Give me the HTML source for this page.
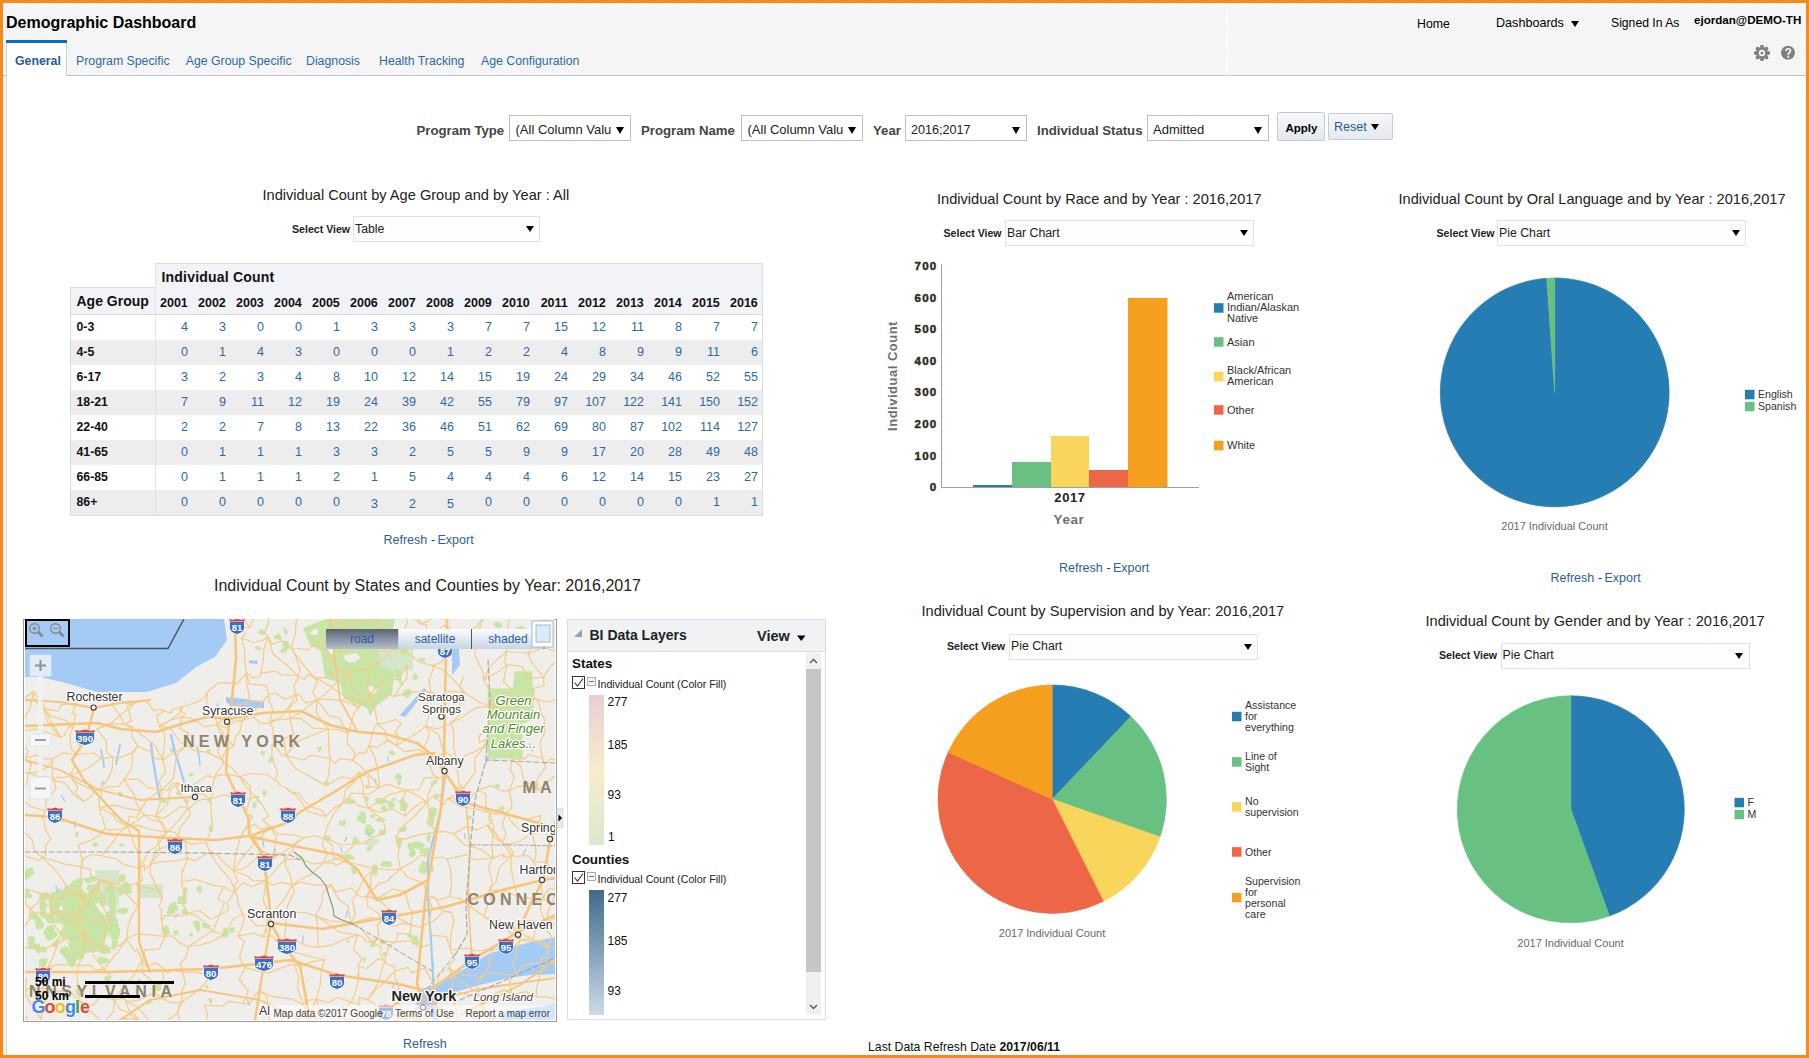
<!DOCTYPE html><html><head><meta charset="utf-8"><title>Demographic Dashboard</title><style>
html,body{margin:0;padding:0;}
body{width:1809px;height:1058px;position:relative;overflow:hidden;background:#fff;font-family:"Liberation Sans", sans-serif;}
.t{position:absolute;white-space:nowrap;line-height:normal;}
</style></head><body>
<svg style="position:absolute;left:0;top:0" width="1809" height="1058" shape-rendering="crispEdges"><defs><pattern id="stripe" patternUnits="userSpaceOnUse" width="3" height="3"><rect width="3" height="3" fill="#fafafa"/><rect x="0" y="0" width="1" height="1" fill="#ececec"/><rect x="1" y="1" width="1" height="1" fill="#ececec"/><rect x="2" y="2" width="1" height="1" fill="#ececec"/></pattern></defs><rect x="3" y="3" width="1803" height="72" fill="url(#stripe)"/><rect x="3" y="76" width="3" height="979" fill="url(#stripe)"/></svg>
<div style="position:absolute;left:3px;top:75px;width:1803px;height:1px;background:#b9c4cf;"></div>
<div style="position:absolute;left:1226px;top:3px;width:1px;height:73px;background:#ffffff;"></div>
<div class="t" style="left:6px;top:14px;font-size:16px;font-weight:bold;color:#000;">Demographic Dashboard</div>
<div style="position:absolute;left:6px;top:40px;width:61px;height:36px;background:#fff;box-sizing:border-box;border-left:1px solid #c9d3dc;border-right:1px solid #c9d3dc;"></div>
<div style="position:absolute;left:6px;top:40px;width:61px;height:3px;background:#0b6bcb;"></div>
<div class="t" style="left:15px;top:54px;font-size:12.3px;font-weight:bold;color:#1f5c99;">General</div>
<div class="t" style="left:76px;top:54px;font-size:12.3px;font-weight:normal;color:#2a6aa8;">Program Specific</div>
<div class="t" style="left:185.7px;top:54px;font-size:12.3px;font-weight:normal;color:#2a6aa8;">Age Group Specific</div>
<div class="t" style="left:306px;top:54px;font-size:12.3px;font-weight:normal;color:#2a6aa8;">Diagnosis</div>
<div class="t" style="left:379px;top:54px;font-size:12.3px;font-weight:normal;color:#2a6aa8;">Health Tracking</div>
<div class="t" style="left:481px;top:54px;font-size:12.3px;font-weight:normal;color:#2a6aa8;">Age Configuration</div>
<div class="t" style="left:1417px;top:17px;font-size:12.3px;font-weight:normal;color:#000;">Home</div>
<div class="t" style="left:1496px;top:16px;font-size:12.6px;font-weight:normal;color:#000;">Dashboards</div>
<div style="position:absolute;left:1571px;top:21px;width:0;height:0;border-left:4.5px solid transparent;border-right:4.5px solid transparent;border-top:6px solid #000"></div>
<div class="t" style="left:1611px;top:16px;font-size:12.2px;font-weight:normal;color:#000;">Signed In As</div>
<div class="t" style="left:1694px;top:13px;font-size:11.6px;font-weight:bold;color:#000;">ejordan@DEMO-TH</div>
<svg style="position:absolute;left:0;top:0" width="1809" height="80"><circle cx="1762" cy="53" r="6" fill="#7d8185"/><circle cx="1762.00" cy="46.70" r="1.9" fill="#7d8185"/><circle cx="1766.45" cy="48.55" r="1.9" fill="#7d8185"/><circle cx="1768.30" cy="53.00" r="1.9" fill="#7d8185"/><circle cx="1766.45" cy="57.45" r="1.9" fill="#7d8185"/><circle cx="1762.00" cy="59.30" r="1.9" fill="#7d8185"/><circle cx="1757.55" cy="57.45" r="1.9" fill="#7d8185"/><circle cx="1755.70" cy="53.00" r="1.9" fill="#7d8185"/><circle cx="1757.55" cy="48.55" r="1.9" fill="#7d8185"/><circle cx="1762" cy="53" r="3.2" fill="#fafafa"/><circle cx="1762" cy="53" r="1.5" fill="#7d8185"/><circle cx="1788" cy="52.8" r="7" fill="#7d8185"/><path d="M1786.1,51 Q1786.1,48.7 1788.3,48.7 Q1790.5,48.7 1790.5,50.7 Q1790.5,52.1 1789,52.9 Q1788.3,53.4 1788.3,55.2" fill="none" stroke="#fafafa" stroke-width="1.6" stroke-linecap="butt"/><rect x="1787.4" y="56.2" width="1.8" height="1.8" fill="#fafafa"/></svg>
<div class="t" style="left:416.5px;top:123px;font-size:13.2px;font-weight:bold;color:#454545;">Program Type</div>
<div style="position:absolute;left:509px;top:115px;width:122px;height:26px;box-sizing:border-box;border:1px solid #bdbdbd;background:#fff;"></div>
<div class="t" style="left:515.5px;top:122px;font-size:13px;color:#222;width:100px;overflow:hidden">(All Column Valu</div>
<div style="position:absolute;left:616px;top:126.5px;width:0;height:0;border-left:4.75px solid transparent;border-right:4.75px solid transparent;border-top:7px solid #000"></div>
<div class="t" style="left:641px;top:123px;font-size:13.2px;font-weight:bold;color:#454545;">Program Name</div>
<div style="position:absolute;left:741px;top:115px;width:122px;height:26px;box-sizing:border-box;border:1px solid #bdbdbd;background:#fff;"></div>
<div class="t" style="left:747.5px;top:122px;font-size:13px;color:#222;width:100px;overflow:hidden">(All Column Valu</div>
<div style="position:absolute;left:848px;top:126.5px;width:0;height:0;border-left:4.75px solid transparent;border-right:4.75px solid transparent;border-top:7px solid #000"></div>
<div class="t" style="left:873px;top:123px;font-size:13.2px;font-weight:bold;color:#454545;">Year</div>
<div style="position:absolute;left:905px;top:115px;width:122px;height:26px;box-sizing:border-box;border:1px solid #bdbdbd;background:#fff;"></div>
<div class="t" style="left:911px;top:123px;font-size:12.6px;color:#222;width:100px;overflow:hidden">2016;2017</div>
<div style="position:absolute;left:1012px;top:126.5px;width:0;height:0;border-left:4.75px solid transparent;border-right:4.75px solid transparent;border-top:7px solid #000"></div>
<div class="t" style="left:1037px;top:123px;font-size:13.2px;font-weight:bold;color:#454545;">Individual Status</div>
<div style="position:absolute;left:1147px;top:115px;width:122px;height:26px;box-sizing:border-box;border:1px solid #bdbdbd;background:#fff;"></div>
<div class="t" style="left:1153px;top:122px;font-size:13px;color:#222;width:100px;overflow:hidden">Admitted</div>
<div style="position:absolute;left:1254px;top:126.5px;width:0;height:0;border-left:4.75px solid transparent;border-right:4.75px solid transparent;border-top:7px solid #000"></div>
<div style="position:absolute;left:1277px;top:112px;width:48px;height:29px;box-sizing:border-box;border:1px solid #c3cbd3;border-radius:2px;background:linear-gradient(#f7f8fa,#e4e8ec);"></div>
<div class="t" style="left:1285.5px;top:122px;font-size:11.5px;font-weight:bold;color:#000;">Apply</div>
<div style="position:absolute;left:1328px;top:113px;width:65px;height:27px;box-sizing:border-box;border:1px solid #c3cbd3;border-radius:2px;background:linear-gradient(#f5f7f9,#e6eaee);"></div>
<div class="t" style="left:1334px;top:120px;font-size:12.5px;font-weight:normal;color:#1f5c99;">Reset</div>
<div style="position:absolute;left:1371px;top:124px;width:0;height:0;border-left:4.5px solid transparent;border-right:4.5px solid transparent;border-top:6px solid #000"></div>
<div class="t" style="left:262.5px;top:187px;font-size:14.6px;font-weight:normal;color:#222;">Individual Count by Age Group and by Year : All</div>
<div class="t" style="left:292px;top:223px;font-size:10.6px;font-weight:bold;color:#222;">Select View</div>
<div style="position:absolute;left:353px;top:216px;width:187px;height:26px;box-sizing:border-box;border:1px solid #dfe3e8;background:#fdfdfd;"></div>
<div class="t" style="left:355px;top:222px;font-size:12.3px;font-weight:normal;color:#222;">Table</div>
<div style="position:absolute;left:526px;top:226px;width:0;height:0;border-left:4.5px solid transparent;border-right:4.5px solid transparent;border-top:6px solid #000"></div>
<div style="position:absolute;left:155px;top:263px;width:608px;height:52px;box-sizing:border-box;background:#f1f3f6;border-top:1px solid #d5dde4;border-left:1px solid #d5dde4;border-right:1px solid #d5dde4;"></div>
<div style="position:absolute;left:70px;top:287px;width:86px;height:28px;box-sizing:border-box;background:#f1f3f6;border-top:1px solid #d5dde4;border-left:1px solid #d5dde4;"></div>
<div style="position:absolute;left:70px;top:314px;width:693px;height:1px;background:#d5dde4;"></div>
<div class="t" style="left:161.5px;top:269px;font-size:14px;font-weight:bold;color:#111;letter-spacing:0.2px;">Individual Count</div>
<div class="t" style="left:76.5px;top:293px;font-size:14px;font-weight:bold;color:#111;">Age Group</div>
<div class="t" style="left:187.8px;transform:translateX(-100%);top:296px;font-size:12.5px;font-weight:bold;color:#111;">2001</div>
<div class="t" style="left:225.8px;transform:translateX(-100%);top:296px;font-size:12.5px;font-weight:bold;color:#111;">2002</div>
<div class="t" style="left:263.8px;transform:translateX(-100%);top:296px;font-size:12.5px;font-weight:bold;color:#111;">2003</div>
<div class="t" style="left:301.8px;transform:translateX(-100%);top:296px;font-size:12.5px;font-weight:bold;color:#111;">2004</div>
<div class="t" style="left:339.8px;transform:translateX(-100%);top:296px;font-size:12.5px;font-weight:bold;color:#111;">2005</div>
<div class="t" style="left:377.8px;transform:translateX(-100%);top:296px;font-size:12.5px;font-weight:bold;color:#111;">2006</div>
<div class="t" style="left:415.8px;transform:translateX(-100%);top:296px;font-size:12.5px;font-weight:bold;color:#111;">2007</div>
<div class="t" style="left:453.8px;transform:translateX(-100%);top:296px;font-size:12.5px;font-weight:bold;color:#111;">2008</div>
<div class="t" style="left:491.8px;transform:translateX(-100%);top:296px;font-size:12.5px;font-weight:bold;color:#111;">2009</div>
<div class="t" style="left:529.8px;transform:translateX(-100%);top:296px;font-size:12.5px;font-weight:bold;color:#111;">2010</div>
<div class="t" style="left:567.8px;transform:translateX(-100%);top:296px;font-size:12.5px;font-weight:bold;color:#111;">2011</div>
<div class="t" style="left:605.8px;transform:translateX(-100%);top:296px;font-size:12.5px;font-weight:bold;color:#111;">2012</div>
<div class="t" style="left:643.8px;transform:translateX(-100%);top:296px;font-size:12.5px;font-weight:bold;color:#111;">2013</div>
<div class="t" style="left:681.8px;transform:translateX(-100%);top:296px;font-size:12.5px;font-weight:bold;color:#111;">2014</div>
<div class="t" style="left:719.8px;transform:translateX(-100%);top:296px;font-size:12.5px;font-weight:bold;color:#111;">2015</div>
<div class="t" style="left:757.8px;transform:translateX(-100%);top:296px;font-size:12.5px;font-weight:bold;color:#111;">2016</div>
<div style="position:absolute;left:71px;top:315px;width:691px;height:25px;background:#ffffff;"></div>
<div class="t" style="left:76.5px;top:320px;font-size:12.3px;font-weight:bold;color:#111;">0-3</div>
<div class="t" style="left:188px;transform:translateX(-100%);top:320px;font-size:12.5px;font-weight:normal;color:#2e6aa6;">4</div>
<div class="t" style="left:226px;transform:translateX(-100%);top:320px;font-size:12.5px;font-weight:normal;color:#2e6aa6;">3</div>
<div class="t" style="left:264px;transform:translateX(-100%);top:320px;font-size:12.5px;font-weight:normal;color:#2e6aa6;">0</div>
<div class="t" style="left:302px;transform:translateX(-100%);top:320px;font-size:12.5px;font-weight:normal;color:#2e6aa6;">0</div>
<div class="t" style="left:340px;transform:translateX(-100%);top:320px;font-size:12.5px;font-weight:normal;color:#2e6aa6;">1</div>
<div class="t" style="left:378px;transform:translateX(-100%);top:320px;font-size:12.5px;font-weight:normal;color:#2e6aa6;">3</div>
<div class="t" style="left:416px;transform:translateX(-100%);top:320px;font-size:12.5px;font-weight:normal;color:#2e6aa6;">3</div>
<div class="t" style="left:454px;transform:translateX(-100%);top:320px;font-size:12.5px;font-weight:normal;color:#2e6aa6;">3</div>
<div class="t" style="left:492px;transform:translateX(-100%);top:320px;font-size:12.5px;font-weight:normal;color:#2e6aa6;">7</div>
<div class="t" style="left:530px;transform:translateX(-100%);top:320px;font-size:12.5px;font-weight:normal;color:#2e6aa6;">7</div>
<div class="t" style="left:568px;transform:translateX(-100%);top:320px;font-size:12.5px;font-weight:normal;color:#2e6aa6;">15</div>
<div class="t" style="left:606px;transform:translateX(-100%);top:320px;font-size:12.5px;font-weight:normal;color:#2e6aa6;">12</div>
<div class="t" style="left:644px;transform:translateX(-100%);top:320px;font-size:12.5px;font-weight:normal;color:#2e6aa6;">11</div>
<div class="t" style="left:682px;transform:translateX(-100%);top:320px;font-size:12.5px;font-weight:normal;color:#2e6aa6;">8</div>
<div class="t" style="left:720px;transform:translateX(-100%);top:320px;font-size:12.5px;font-weight:normal;color:#2e6aa6;">7</div>
<div class="t" style="left:758px;transform:translateX(-100%);top:320px;font-size:12.5px;font-weight:normal;color:#2e6aa6;">7</div>
<div style="position:absolute;left:71px;top:340px;width:691px;height:25px;background:#ededed;"></div>
<div class="t" style="left:76.5px;top:345px;font-size:12.3px;font-weight:bold;color:#111;">4-5</div>
<div class="t" style="left:188px;transform:translateX(-100%);top:345px;font-size:12.5px;font-weight:normal;color:#2e6aa6;">0</div>
<div class="t" style="left:226px;transform:translateX(-100%);top:345px;font-size:12.5px;font-weight:normal;color:#2e6aa6;">1</div>
<div class="t" style="left:264px;transform:translateX(-100%);top:345px;font-size:12.5px;font-weight:normal;color:#2e6aa6;">4</div>
<div class="t" style="left:302px;transform:translateX(-100%);top:345px;font-size:12.5px;font-weight:normal;color:#2e6aa6;">3</div>
<div class="t" style="left:340px;transform:translateX(-100%);top:345px;font-size:12.5px;font-weight:normal;color:#2e6aa6;">0</div>
<div class="t" style="left:378px;transform:translateX(-100%);top:345px;font-size:12.5px;font-weight:normal;color:#2e6aa6;">0</div>
<div class="t" style="left:416px;transform:translateX(-100%);top:345px;font-size:12.5px;font-weight:normal;color:#2e6aa6;">0</div>
<div class="t" style="left:454px;transform:translateX(-100%);top:345px;font-size:12.5px;font-weight:normal;color:#2e6aa6;">1</div>
<div class="t" style="left:492px;transform:translateX(-100%);top:345px;font-size:12.5px;font-weight:normal;color:#2e6aa6;">2</div>
<div class="t" style="left:530px;transform:translateX(-100%);top:345px;font-size:12.5px;font-weight:normal;color:#2e6aa6;">2</div>
<div class="t" style="left:568px;transform:translateX(-100%);top:345px;font-size:12.5px;font-weight:normal;color:#2e6aa6;">4</div>
<div class="t" style="left:606px;transform:translateX(-100%);top:345px;font-size:12.5px;font-weight:normal;color:#2e6aa6;">8</div>
<div class="t" style="left:644px;transform:translateX(-100%);top:345px;font-size:12.5px;font-weight:normal;color:#2e6aa6;">9</div>
<div class="t" style="left:682px;transform:translateX(-100%);top:345px;font-size:12.5px;font-weight:normal;color:#2e6aa6;">9</div>
<div class="t" style="left:720px;transform:translateX(-100%);top:345px;font-size:12.5px;font-weight:normal;color:#2e6aa6;">11</div>
<div class="t" style="left:758px;transform:translateX(-100%);top:345px;font-size:12.5px;font-weight:normal;color:#2e6aa6;">6</div>
<div style="position:absolute;left:71px;top:365px;width:691px;height:25px;background:#ffffff;"></div>
<div class="t" style="left:76.5px;top:370px;font-size:12.3px;font-weight:bold;color:#111;">6-17</div>
<div class="t" style="left:188px;transform:translateX(-100%);top:370px;font-size:12.5px;font-weight:normal;color:#2e6aa6;">3</div>
<div class="t" style="left:226px;transform:translateX(-100%);top:370px;font-size:12.5px;font-weight:normal;color:#2e6aa6;">2</div>
<div class="t" style="left:264px;transform:translateX(-100%);top:370px;font-size:12.5px;font-weight:normal;color:#2e6aa6;">3</div>
<div class="t" style="left:302px;transform:translateX(-100%);top:370px;font-size:12.5px;font-weight:normal;color:#2e6aa6;">4</div>
<div class="t" style="left:340px;transform:translateX(-100%);top:370px;font-size:12.5px;font-weight:normal;color:#2e6aa6;">8</div>
<div class="t" style="left:378px;transform:translateX(-100%);top:370px;font-size:12.5px;font-weight:normal;color:#2e6aa6;">10</div>
<div class="t" style="left:416px;transform:translateX(-100%);top:370px;font-size:12.5px;font-weight:normal;color:#2e6aa6;">12</div>
<div class="t" style="left:454px;transform:translateX(-100%);top:370px;font-size:12.5px;font-weight:normal;color:#2e6aa6;">14</div>
<div class="t" style="left:492px;transform:translateX(-100%);top:370px;font-size:12.5px;font-weight:normal;color:#2e6aa6;">15</div>
<div class="t" style="left:530px;transform:translateX(-100%);top:370px;font-size:12.5px;font-weight:normal;color:#2e6aa6;">19</div>
<div class="t" style="left:568px;transform:translateX(-100%);top:370px;font-size:12.5px;font-weight:normal;color:#2e6aa6;">24</div>
<div class="t" style="left:606px;transform:translateX(-100%);top:370px;font-size:12.5px;font-weight:normal;color:#2e6aa6;">29</div>
<div class="t" style="left:644px;transform:translateX(-100%);top:370px;font-size:12.5px;font-weight:normal;color:#2e6aa6;">34</div>
<div class="t" style="left:682px;transform:translateX(-100%);top:370px;font-size:12.5px;font-weight:normal;color:#2e6aa6;">46</div>
<div class="t" style="left:720px;transform:translateX(-100%);top:370px;font-size:12.5px;font-weight:normal;color:#2e6aa6;">52</div>
<div class="t" style="left:758px;transform:translateX(-100%);top:370px;font-size:12.5px;font-weight:normal;color:#2e6aa6;">55</div>
<div style="position:absolute;left:71px;top:390px;width:691px;height:25px;background:#ededed;"></div>
<div class="t" style="left:76.5px;top:395px;font-size:12.3px;font-weight:bold;color:#111;">18-21</div>
<div class="t" style="left:188px;transform:translateX(-100%);top:395px;font-size:12.5px;font-weight:normal;color:#2e6aa6;">7</div>
<div class="t" style="left:226px;transform:translateX(-100%);top:395px;font-size:12.5px;font-weight:normal;color:#2e6aa6;">9</div>
<div class="t" style="left:264px;transform:translateX(-100%);top:395px;font-size:12.5px;font-weight:normal;color:#2e6aa6;">11</div>
<div class="t" style="left:302px;transform:translateX(-100%);top:395px;font-size:12.5px;font-weight:normal;color:#2e6aa6;">12</div>
<div class="t" style="left:340px;transform:translateX(-100%);top:395px;font-size:12.5px;font-weight:normal;color:#2e6aa6;">19</div>
<div class="t" style="left:378px;transform:translateX(-100%);top:395px;font-size:12.5px;font-weight:normal;color:#2e6aa6;">24</div>
<div class="t" style="left:416px;transform:translateX(-100%);top:395px;font-size:12.5px;font-weight:normal;color:#2e6aa6;">39</div>
<div class="t" style="left:454px;transform:translateX(-100%);top:395px;font-size:12.5px;font-weight:normal;color:#2e6aa6;">42</div>
<div class="t" style="left:492px;transform:translateX(-100%);top:395px;font-size:12.5px;font-weight:normal;color:#2e6aa6;">55</div>
<div class="t" style="left:530px;transform:translateX(-100%);top:395px;font-size:12.5px;font-weight:normal;color:#2e6aa6;">79</div>
<div class="t" style="left:568px;transform:translateX(-100%);top:395px;font-size:12.5px;font-weight:normal;color:#2e6aa6;">97</div>
<div class="t" style="left:606px;transform:translateX(-100%);top:395px;font-size:12.5px;font-weight:normal;color:#2e6aa6;">107</div>
<div class="t" style="left:644px;transform:translateX(-100%);top:395px;font-size:12.5px;font-weight:normal;color:#2e6aa6;">122</div>
<div class="t" style="left:682px;transform:translateX(-100%);top:395px;font-size:12.5px;font-weight:normal;color:#2e6aa6;">141</div>
<div class="t" style="left:720px;transform:translateX(-100%);top:395px;font-size:12.5px;font-weight:normal;color:#2e6aa6;">150</div>
<div class="t" style="left:758px;transform:translateX(-100%);top:395px;font-size:12.5px;font-weight:normal;color:#2e6aa6;">152</div>
<div style="position:absolute;left:71px;top:415px;width:691px;height:25px;background:#ffffff;"></div>
<div class="t" style="left:76.5px;top:420px;font-size:12.3px;font-weight:bold;color:#111;">22-40</div>
<div class="t" style="left:188px;transform:translateX(-100%);top:420px;font-size:12.5px;font-weight:normal;color:#2e6aa6;">2</div>
<div class="t" style="left:226px;transform:translateX(-100%);top:420px;font-size:12.5px;font-weight:normal;color:#2e6aa6;">2</div>
<div class="t" style="left:264px;transform:translateX(-100%);top:420px;font-size:12.5px;font-weight:normal;color:#2e6aa6;">7</div>
<div class="t" style="left:302px;transform:translateX(-100%);top:420px;font-size:12.5px;font-weight:normal;color:#2e6aa6;">8</div>
<div class="t" style="left:340px;transform:translateX(-100%);top:420px;font-size:12.5px;font-weight:normal;color:#2e6aa6;">13</div>
<div class="t" style="left:378px;transform:translateX(-100%);top:420px;font-size:12.5px;font-weight:normal;color:#2e6aa6;">22</div>
<div class="t" style="left:416px;transform:translateX(-100%);top:420px;font-size:12.5px;font-weight:normal;color:#2e6aa6;">36</div>
<div class="t" style="left:454px;transform:translateX(-100%);top:420px;font-size:12.5px;font-weight:normal;color:#2e6aa6;">46</div>
<div class="t" style="left:492px;transform:translateX(-100%);top:420px;font-size:12.5px;font-weight:normal;color:#2e6aa6;">51</div>
<div class="t" style="left:530px;transform:translateX(-100%);top:420px;font-size:12.5px;font-weight:normal;color:#2e6aa6;">62</div>
<div class="t" style="left:568px;transform:translateX(-100%);top:420px;font-size:12.5px;font-weight:normal;color:#2e6aa6;">69</div>
<div class="t" style="left:606px;transform:translateX(-100%);top:420px;font-size:12.5px;font-weight:normal;color:#2e6aa6;">80</div>
<div class="t" style="left:644px;transform:translateX(-100%);top:420px;font-size:12.5px;font-weight:normal;color:#2e6aa6;">87</div>
<div class="t" style="left:682px;transform:translateX(-100%);top:420px;font-size:12.5px;font-weight:normal;color:#2e6aa6;">102</div>
<div class="t" style="left:720px;transform:translateX(-100%);top:420px;font-size:12.5px;font-weight:normal;color:#2e6aa6;">114</div>
<div class="t" style="left:758px;transform:translateX(-100%);top:420px;font-size:12.5px;font-weight:normal;color:#2e6aa6;">127</div>
<div style="position:absolute;left:71px;top:440px;width:691px;height:25px;background:#ededed;"></div>
<div class="t" style="left:76.5px;top:445px;font-size:12.3px;font-weight:bold;color:#111;">41-65</div>
<div class="t" style="left:188px;transform:translateX(-100%);top:445px;font-size:12.5px;font-weight:normal;color:#2e6aa6;">0</div>
<div class="t" style="left:226px;transform:translateX(-100%);top:445px;font-size:12.5px;font-weight:normal;color:#2e6aa6;">1</div>
<div class="t" style="left:264px;transform:translateX(-100%);top:445px;font-size:12.5px;font-weight:normal;color:#2e6aa6;">1</div>
<div class="t" style="left:302px;transform:translateX(-100%);top:445px;font-size:12.5px;font-weight:normal;color:#2e6aa6;">1</div>
<div class="t" style="left:340px;transform:translateX(-100%);top:445px;font-size:12.5px;font-weight:normal;color:#2e6aa6;">3</div>
<div class="t" style="left:378px;transform:translateX(-100%);top:445px;font-size:12.5px;font-weight:normal;color:#2e6aa6;">3</div>
<div class="t" style="left:416px;transform:translateX(-100%);top:445px;font-size:12.5px;font-weight:normal;color:#2e6aa6;">2</div>
<div class="t" style="left:454px;transform:translateX(-100%);top:445px;font-size:12.5px;font-weight:normal;color:#2e6aa6;">5</div>
<div class="t" style="left:492px;transform:translateX(-100%);top:445px;font-size:12.5px;font-weight:normal;color:#2e6aa6;">5</div>
<div class="t" style="left:530px;transform:translateX(-100%);top:445px;font-size:12.5px;font-weight:normal;color:#2e6aa6;">9</div>
<div class="t" style="left:568px;transform:translateX(-100%);top:445px;font-size:12.5px;font-weight:normal;color:#2e6aa6;">9</div>
<div class="t" style="left:606px;transform:translateX(-100%);top:445px;font-size:12.5px;font-weight:normal;color:#2e6aa6;">17</div>
<div class="t" style="left:644px;transform:translateX(-100%);top:445px;font-size:12.5px;font-weight:normal;color:#2e6aa6;">20</div>
<div class="t" style="left:682px;transform:translateX(-100%);top:445px;font-size:12.5px;font-weight:normal;color:#2e6aa6;">28</div>
<div class="t" style="left:720px;transform:translateX(-100%);top:445px;font-size:12.5px;font-weight:normal;color:#2e6aa6;">49</div>
<div class="t" style="left:758px;transform:translateX(-100%);top:445px;font-size:12.5px;font-weight:normal;color:#2e6aa6;">48</div>
<div style="position:absolute;left:71px;top:465px;width:691px;height:25px;background:#ffffff;"></div>
<div class="t" style="left:76.5px;top:470px;font-size:12.3px;font-weight:bold;color:#111;">66-85</div>
<div class="t" style="left:188px;transform:translateX(-100%);top:470px;font-size:12.5px;font-weight:normal;color:#2e6aa6;">0</div>
<div class="t" style="left:226px;transform:translateX(-100%);top:470px;font-size:12.5px;font-weight:normal;color:#2e6aa6;">1</div>
<div class="t" style="left:264px;transform:translateX(-100%);top:470px;font-size:12.5px;font-weight:normal;color:#2e6aa6;">1</div>
<div class="t" style="left:302px;transform:translateX(-100%);top:470px;font-size:12.5px;font-weight:normal;color:#2e6aa6;">1</div>
<div class="t" style="left:340px;transform:translateX(-100%);top:470px;font-size:12.5px;font-weight:normal;color:#2e6aa6;">2</div>
<div class="t" style="left:378px;transform:translateX(-100%);top:470px;font-size:12.5px;font-weight:normal;color:#2e6aa6;">1</div>
<div class="t" style="left:416px;transform:translateX(-100%);top:470px;font-size:12.5px;font-weight:normal;color:#2e6aa6;">5</div>
<div class="t" style="left:454px;transform:translateX(-100%);top:470px;font-size:12.5px;font-weight:normal;color:#2e6aa6;">4</div>
<div class="t" style="left:492px;transform:translateX(-100%);top:470px;font-size:12.5px;font-weight:normal;color:#2e6aa6;">4</div>
<div class="t" style="left:530px;transform:translateX(-100%);top:470px;font-size:12.5px;font-weight:normal;color:#2e6aa6;">4</div>
<div class="t" style="left:568px;transform:translateX(-100%);top:470px;font-size:12.5px;font-weight:normal;color:#2e6aa6;">6</div>
<div class="t" style="left:606px;transform:translateX(-100%);top:470px;font-size:12.5px;font-weight:normal;color:#2e6aa6;">12</div>
<div class="t" style="left:644px;transform:translateX(-100%);top:470px;font-size:12.5px;font-weight:normal;color:#2e6aa6;">14</div>
<div class="t" style="left:682px;transform:translateX(-100%);top:470px;font-size:12.5px;font-weight:normal;color:#2e6aa6;">15</div>
<div class="t" style="left:720px;transform:translateX(-100%);top:470px;font-size:12.5px;font-weight:normal;color:#2e6aa6;">23</div>
<div class="t" style="left:758px;transform:translateX(-100%);top:470px;font-size:12.5px;font-weight:normal;color:#2e6aa6;">27</div>
<div style="position:absolute;left:71px;top:490px;width:691px;height:25px;background:#ededed;"></div>
<div class="t" style="left:76.5px;top:495px;font-size:12.3px;font-weight:bold;color:#111;">86+</div>
<div class="t" style="left:188px;transform:translateX(-100%);top:495px;font-size:12.5px;font-weight:normal;color:#2e6aa6;">0</div>
<div class="t" style="left:226px;transform:translateX(-100%);top:495px;font-size:12.5px;font-weight:normal;color:#2e6aa6;">0</div>
<div class="t" style="left:264px;transform:translateX(-100%);top:495px;font-size:12.5px;font-weight:normal;color:#2e6aa6;">0</div>
<div class="t" style="left:302px;transform:translateX(-100%);top:495px;font-size:12.5px;font-weight:normal;color:#2e6aa6;">0</div>
<div class="t" style="left:340px;transform:translateX(-100%);top:495px;font-size:12.5px;font-weight:normal;color:#2e6aa6;">0</div>
<div class="t" style="left:378px;transform:translateX(-100%);top:497px;font-size:12.5px;font-weight:normal;color:#2e6aa6;">3</div>
<div class="t" style="left:416px;transform:translateX(-100%);top:497px;font-size:12.5px;font-weight:normal;color:#2e6aa6;">2</div>
<div class="t" style="left:454px;transform:translateX(-100%);top:497px;font-size:12.5px;font-weight:normal;color:#2e6aa6;">5</div>
<div class="t" style="left:492px;transform:translateX(-100%);top:495px;font-size:12.5px;font-weight:normal;color:#2e6aa6;">0</div>
<div class="t" style="left:530px;transform:translateX(-100%);top:495px;font-size:12.5px;font-weight:normal;color:#2e6aa6;">0</div>
<div class="t" style="left:568px;transform:translateX(-100%);top:495px;font-size:12.5px;font-weight:normal;color:#2e6aa6;">0</div>
<div class="t" style="left:606px;transform:translateX(-100%);top:495px;font-size:12.5px;font-weight:normal;color:#2e6aa6;">0</div>
<div class="t" style="left:644px;transform:translateX(-100%);top:495px;font-size:12.5px;font-weight:normal;color:#2e6aa6;">0</div>
<div class="t" style="left:682px;transform:translateX(-100%);top:495px;font-size:12.5px;font-weight:normal;color:#2e6aa6;">0</div>
<div class="t" style="left:720px;transform:translateX(-100%);top:495px;font-size:12.5px;font-weight:normal;color:#2e6aa6;">1</div>
<div class="t" style="left:758px;transform:translateX(-100%);top:495px;font-size:12.5px;font-weight:normal;color:#2e6aa6;">1</div>
<div style="position:absolute;left:70px;top:287px;width:1px;height:228px;background:#d5dde4;"></div>
<div style="position:absolute;left:155px;top:263px;width:1px;height:252px;background:#dde3e9;"></div>
<div style="position:absolute;left:762px;top:263px;width:1px;height:252px;background:#d5dde4;"></div>
<div style="position:absolute;left:70px;top:515px;width:693px;height:1px;background:#d5dde4;"></div>
<div class="t" style="left:383.5px;top:533px;font-size:12.5px;font-weight:normal;color:#2e5f96;">Refresh</div>
<div class="t" style="left:431px;top:533px;font-size:12.5px;font-weight:normal;color:#333;">-</div>
<div class="t" style="left:437.5px;top:533px;font-size:12.5px;font-weight:normal;color:#2e5f96;">Export</div>
<div style="position:absolute;left:6px;top:76px;width:1px;height:979px;background:#d3dbe4;"></div>
<div class="t" style="left:937px;top:191px;font-size:14.6px;font-weight:normal;color:#222;">Individual Count by Race and by Year : 2016,2017</div>
<div class="t" style="left:943.5px;top:227px;font-size:10.6px;font-weight:bold;color:#222;">Select View</div>
<div style="position:absolute;left:1005px;top:220px;width:249px;height:26px;box-sizing:border-box;border:1px solid #dfe3e8;background:#fdfdfd;"></div>
<div class="t" style="left:1007px;top:226px;font-size:12.3px;font-weight:normal;color:#222;">Bar Chart</div>
<div style="position:absolute;left:1240px;top:230px;width:0;height:0;border-left:4.5px solid transparent;border-right:4.5px solid transparent;border-top:6px solid #000"></div>
<svg style="position:absolute;left:0;top:0" width="1809" height="1058"><text x="937.5" y="270.0" text-anchor="end" font-family="Liberation Sans" font-weight="bold" font-size="11.6" letter-spacing="1.2" stroke="#2a2a2a" stroke-width="0.45" fill="#2a2a2a">700</text><text x="937.5" y="301.6" text-anchor="end" font-family="Liberation Sans" font-weight="bold" font-size="11.6" letter-spacing="1.2" stroke="#2a2a2a" stroke-width="0.45" fill="#2a2a2a">600</text><text x="937.5" y="333.2" text-anchor="end" font-family="Liberation Sans" font-weight="bold" font-size="11.6" letter-spacing="1.2" stroke="#2a2a2a" stroke-width="0.45" fill="#2a2a2a">500</text><text x="937.5" y="364.8" text-anchor="end" font-family="Liberation Sans" font-weight="bold" font-size="11.6" letter-spacing="1.2" stroke="#2a2a2a" stroke-width="0.45" fill="#2a2a2a">400</text><text x="937.5" y="396.4" text-anchor="end" font-family="Liberation Sans" font-weight="bold" font-size="11.6" letter-spacing="1.2" stroke="#2a2a2a" stroke-width="0.45" fill="#2a2a2a">300</text><text x="937.5" y="428.0" text-anchor="end" font-family="Liberation Sans" font-weight="bold" font-size="11.6" letter-spacing="1.2" stroke="#2a2a2a" stroke-width="0.45" fill="#2a2a2a">200</text><text x="937.5" y="459.6" text-anchor="end" font-family="Liberation Sans" font-weight="bold" font-size="11.6" letter-spacing="1.2" stroke="#2a2a2a" stroke-width="0.45" fill="#2a2a2a">100</text><text x="937.5" y="491.2" text-anchor="end" font-family="Liberation Sans" font-weight="bold" font-size="11.6" letter-spacing="1.2" stroke="#2a2a2a" stroke-width="0.45" fill="#2a2a2a">0</text><line x1="941.5" y1="264" x2="941.5" y2="487.5" stroke="#a0a0a0" stroke-width="1"/><line x1="941" y1="487.5" x2="1199" y2="487.5" stroke="#a0a0a0" stroke-width="1"/><rect x="973" y="485" width="39" height="2" fill="#267db3"/><rect x="1012" y="462" width="39" height="25" fill="#68c182"/><rect x="1051" y="436" width="38" height="51" fill="#fad55c"/><rect x="1089" y="470" width="39" height="17" fill="#ed6647"/><rect x="1128" y="298" width="39.5" height="189" fill="#f69f1e"/><text x="1070" y="502" text-anchor="middle" font-family="Liberation Sans" font-weight="bold" font-size="13" letter-spacing="0.6" fill="#222">2017</text><text x="1069" y="524" text-anchor="middle" font-family="Liberation Sans" font-weight="bold" font-size="13.5" letter-spacing="0.6" fill="#707070">Year</text><text transform="translate(897,376) rotate(-90)" text-anchor="middle" font-family="Liberation Sans" font-weight="bold" font-size="13" letter-spacing="0.5" fill="#707070">Individual Count</text><rect x="1214" y="303.2" width="9.5" height="9.5" fill="#267db3"/><text x="1227.0" y="299.8" font-family="Liberation Sans" font-size="11" fill="#333">American</text><text x="1227.0" y="310.8" font-family="Liberation Sans" font-size="11" fill="#333">Indian/Alaskan</text><text x="1227.0" y="321.8" font-family="Liberation Sans" font-size="11" fill="#333">Native</text><rect x="1214" y="337.2" width="9.5" height="9.5" fill="#68c182"/><text x="1227.0" y="345.8" font-family="Liberation Sans" font-size="11" fill="#333">Asian</text><rect x="1214" y="371.8" width="9.5" height="9.5" fill="#fad55c"/><text x="1227.0" y="374.3" font-family="Liberation Sans" font-size="11" fill="#333">Black/African</text><text x="1227.0" y="385.3" font-family="Liberation Sans" font-size="11" fill="#333">American</text><rect x="1214" y="405.2" width="9.5" height="9.5" fill="#ed6647"/><text x="1227.0" y="413.8" font-family="Liberation Sans" font-size="11" fill="#333">Other</text><rect x="1214" y="440.8" width="9.5" height="9.5" fill="#f69f1e"/><text x="1227.0" y="449.3" font-family="Liberation Sans" font-size="11" fill="#333">White</text></svg>
<div class="t" style="left:1059px;top:561px;font-size:12.5px;font-weight:normal;color:#2e5f96;">Refresh</div>
<div class="t" style="left:1106.5px;top:561px;font-size:12.5px;font-weight:normal;color:#333;">-</div>
<div class="t" style="left:1113px;top:561px;font-size:12.5px;font-weight:normal;color:#2e5f96;">Export</div>
<div class="t" style="left:1398.5px;top:191px;font-size:14.6px;font-weight:normal;color:#222;">Individual Count by Oral Language and by Year : 2016,2017</div>
<div class="t" style="left:1436.5px;top:227px;font-size:10.6px;font-weight:bold;color:#222;">Select View</div>
<div style="position:absolute;left:1497px;top:220px;width:249px;height:26px;box-sizing:border-box;border:1px solid #dfe3e8;background:#fdfdfd;"></div>
<div class="t" style="left:1499px;top:226px;font-size:12.3px;font-weight:normal;color:#222;">Pie Chart</div>
<div style="position:absolute;left:1732px;top:230px;width:0;height:0;border-left:4.5px solid transparent;border-right:4.5px solid transparent;border-top:6px solid #000"></div>
<svg style="position:absolute;left:0;top:0" width="1809" height="1058"><path d="M1554.7,392.4 L1554.70,278.00 A114.4,114.4 0 1 1 1546.72,278.28 Z" fill="#267db3" stroke="#267db3" stroke-width="0.7" stroke-linejoin="round"/><path d="M1554.7,392.4 L1546.72,278.28 A114.4,114.4 0 0 1 1554.70,278.00 Z" fill="#68c182" stroke="#68c182" stroke-width="0.7" stroke-linejoin="round"/><text x="1554.5" y="529.5" text-anchor="middle" font-family="Liberation Sans" font-size="11" fill="#666a70">2017 Individual Count</text><rect x="1745" y="389.8" width="9.5" height="9.5" fill="#267db3"/><text x="1758.0" y="398.3" font-family="Liberation Sans" font-size="10.6" fill="#333">English</text><rect x="1745" y="401.8" width="9.5" height="9.5" fill="#68c182"/><text x="1758.0" y="410.3" font-family="Liberation Sans" font-size="10.6" fill="#333">Spanish</text></svg>
<div class="t" style="left:1550.5px;top:571px;font-size:12.5px;font-weight:normal;color:#2e5f96;">Refresh</div>
<div class="t" style="left:1598.0px;top:571px;font-size:12.5px;font-weight:normal;color:#333;">-</div>
<div class="t" style="left:1604.5px;top:571px;font-size:12.5px;font-weight:normal;color:#2e5f96;">Export</div>
<div class="t" style="left:921.5px;top:603px;font-size:14.6px;font-weight:normal;color:#222;">Individual Count by Supervision and by Year: 2016,2017</div>
<div class="t" style="left:947px;top:639.5px;font-size:10.6px;font-weight:bold;color:#222;">Select View</div>
<div style="position:absolute;left:1009px;top:633.5px;width:249px;height:26px;box-sizing:border-box;border:1px solid #dfe3e8;background:#fdfdfd;"></div>
<div class="t" style="left:1011px;top:638.5px;font-size:12.3px;font-weight:normal;color:#222;">Pie Chart</div>
<div style="position:absolute;left:1244px;top:643.5px;width:0;height:0;border-left:4.5px solid transparent;border-right:4.5px solid transparent;border-top:6px solid #000"></div>
<svg style="position:absolute;left:0;top:0" width="1809" height="1058"><path d="M1052.2,799.2 L1052.20,685.00 A114.2,114.2 0 0 1 1130.95,716.50 Z" fill="#267db3" stroke="#267db3" stroke-width="0.7" stroke-linejoin="round"/><path d="M1052.2,799.2 L1130.95,716.50 A114.2,114.2 0 0 1 1159.98,836.94 Z" fill="#68c182" stroke="#68c182" stroke-width="0.7" stroke-linejoin="round"/><path d="M1052.2,799.2 L1159.98,836.94 A114.2,114.2 0 0 1 1103.33,901.31 Z" fill="#fad55c" stroke="#fad55c" stroke-width="0.7" stroke-linejoin="round"/><path d="M1052.2,799.2 L1103.33,901.31 A114.2,114.2 0 0 1 948.12,752.21 Z" fill="#ed6647" stroke="#ed6647" stroke-width="0.7" stroke-linejoin="round"/><path d="M1052.2,799.2 L948.12,752.21 A114.2,114.2 0 0 1 1052.20,685.00 Z" fill="#f69f1e" stroke="#f69f1e" stroke-width="0.7" stroke-linejoin="round"/><text x="1052" y="936.5" text-anchor="middle" font-family="Liberation Sans" font-size="11" fill="#666a70">2017 Individual Count</text><rect x="1232" y="711.8" width="9.5" height="9.5" fill="#267db3"/><text x="1245.0" y="709.3" font-family="Liberation Sans" font-size="10.6" fill="#333">Assistance</text><text x="1245.0" y="720.3" font-family="Liberation Sans" font-size="10.6" fill="#333">for</text><text x="1245.0" y="731.3" font-family="Liberation Sans" font-size="10.6" fill="#333">everything</text><rect x="1232" y="757.2" width="9.5" height="9.5" fill="#68c182"/><text x="1245.0" y="760.3" font-family="Liberation Sans" font-size="10.6" fill="#333">Line of</text><text x="1245.0" y="771.3" font-family="Liberation Sans" font-size="10.6" fill="#333">Sight</text><rect x="1232" y="802.2" width="9.5" height="9.5" fill="#fad55c"/><text x="1245.0" y="805.3" font-family="Liberation Sans" font-size="10.6" fill="#333">No</text><text x="1245.0" y="816.3" font-family="Liberation Sans" font-size="10.6" fill="#333">supervision</text><rect x="1232" y="847.2" width="9.5" height="9.5" fill="#ed6647"/><text x="1245.0" y="855.8" font-family="Liberation Sans" font-size="10.6" fill="#333">Other</text><rect x="1232" y="892.8" width="9.5" height="9.5" fill="#f69f1e"/><text x="1245.0" y="884.8" font-family="Liberation Sans" font-size="10.6" fill="#333">Supervision</text><text x="1245.0" y="895.8" font-family="Liberation Sans" font-size="10.6" fill="#333">for</text><text x="1245.0" y="906.8" font-family="Liberation Sans" font-size="10.6" fill="#333">personal</text><text x="1245.0" y="917.8" font-family="Liberation Sans" font-size="10.6" fill="#333">care</text></svg>
<div class="t" style="left:1425.5px;top:613px;font-size:14.6px;font-weight:normal;color:#222;">Individual Count by Gender and by Year : 2016,2017</div>
<div class="t" style="left:1439px;top:649px;font-size:10.6px;font-weight:bold;color:#222;">Select View</div>
<div style="position:absolute;left:1500.5px;top:642.5px;width:249px;height:26px;box-sizing:border-box;border:1px solid #dfe3e8;background:#fdfdfd;"></div>
<div class="t" style="left:1502.5px;top:648px;font-size:12.3px;font-weight:normal;color:#222;">Pie Chart</div>
<div style="position:absolute;left:1735px;top:652.5px;width:0;height:0;border-left:4.5px solid transparent;border-right:4.5px solid transparent;border-top:6px solid #000"></div>
<svg style="position:absolute;left:0;top:0" width="1809" height="1058"><path d="M1570.8,809.3 L1570.80,695.80 A113.5,113.5 0 0 1 1609.43,916.02 Z" fill="#267db3" stroke="#267db3" stroke-width="0.7" stroke-linejoin="round"/><path d="M1570.8,809.3 L1609.43,916.02 A113.5,113.5 0 1 1 1570.80,695.80 Z" fill="#68c182" stroke="#68c182" stroke-width="0.7" stroke-linejoin="round"/><text x="1570.5" y="946.5" text-anchor="middle" font-family="Liberation Sans" font-size="11" fill="#666a70">2017 Individual Count</text><rect x="1734.5" y="797.8" width="9.5" height="9.5" fill="#267db3"/><text x="1747.5" y="806.3" font-family="Liberation Sans" font-size="10.6" fill="#333">F</text><rect x="1734.5" y="809.8" width="9.5" height="9.5" fill="#68c182"/><text x="1747.5" y="818.3" font-family="Liberation Sans" font-size="10.6" fill="#333">M</text></svg>
<div class="t" style="left:214px;top:577px;font-size:16px;font-weight:normal;color:#222;">Individual Count by States and Counties by Year: 2016,2017</div>
<div class="t" style="left:403px;top:1037px;font-size:12.5px;font-weight:normal;color:#2e5f96;">Refresh</div>
<div class="t" style="left:868px;top:1040px;font-size:12.25px;font-weight:normal;color:#111;">Last Data Refresh Date <b>2017/06/11</b></div>
<div style="position:absolute;left:22.5px;top:618.5px;width:534px;height:403px;box-sizing:border-box;border:1px solid #9c9c94;background:#fff;"></div>
<svg style="position:absolute;left:0;top:0" width="1809" height="1058"><defs><clipPath id="mc"><rect x="25" y="619" width="530" height="401"/></clipPath></defs><g clip-path="url(#mc)"><rect x="25" y="619" width="530" height="401" fill="#f0eeea"/><polygon points="303.0,628.0 326.0,619.0 395.0,619.0 392.0,632.0 384.0,653.0 395.0,667.0 392.0,694.0 376.0,706.0 370.0,716.0 367.0,708.0 344.0,699.0 340.0,683.0 325.0,678.0 321.0,651.0 310.0,645.0" fill="#c9e5a6" /><polygon points="378.0,648.0 413.0,648.0 413.0,670.0 395.0,672.0 380.0,665.0" fill="#d6e6cb" /><polygon points="360.6,657.9 355.2,662.0 350.0,662.7 345.4,660.7 343.3,655.2 348.9,654.6 356.2,652.8" fill="#f0eeea" /><polygon points="333.5,650.3 332.8,654.6 328.1,653.8 327.3,651.4 326.8,648.9 328.3,647.3 332.0,646.7" fill="#f0eeea" /><polygon points="377.8,689.8 375.1,693.2 370.9,694.0 368.7,691.4 367.4,686.6 371.9,685.8 373.9,687.6" fill="#f0eeea" /><polygon points="318.0,631.7 317.1,634.9 313.3,635.0 309.3,632.8 311.5,631.6 315.1,628.4 318.4,630.1" fill="#f0eeea" /><polygon points="401.0,677.2 399.4,681.0 397.6,680.1 395.5,679.0 395.1,676.5 396.8,675.0 399.8,674.7" fill="#c9e5a6" /><polygon points="401.6,678.2 400.8,682.3 399.2,682.8 397.7,680.3 397.4,676.4 398.0,674.6 400.6,676.3" fill="#c9e5a6" /><polygon points="425.1,659.1 424.4,661.5 421.6,662.1 419.2,660.2 418.7,658.2 421.2,658.1 425.0,657.9" fill="#c9e5a6" /><polygon points="409.0,650.3 405.6,655.7 403.3,654.4 399.7,655.4 399.3,649.9 401.9,646.2 405.9,648.6" fill="#c9e5a6" /><polygon points="404.2,683.3 402.3,685.1 400.3,685.1 399.7,684.8 399.7,682.5 400.3,680.9 402.3,681.7" fill="#c9e5a6" /><polygon points="412.5,693.9 409.9,695.0 408.1,698.4 401.8,695.1 402.7,692.8 406.4,689.1 411.0,689.0" fill="#c9e5a6" /><polygon points="402.2,673.5 400.1,677.8 397.0,677.7 392.6,673.9 393.2,670.7 397.6,668.2 400.1,669.9" fill="#c9e5a6" /><polygon points="418.5,677.9 416.5,679.5 414.5,680.2 412.6,678.7 412.5,675.6 414.1,673.0 416.6,674.2" fill="#c9e5a6" /><polygon points="281.1,637.1 281.7,640.2 279.2,640.0 276.1,638.2 275.8,635.6 278.3,633.7 280.6,634.5" fill="#c9e5a6" /><polygon points="286.8,650.4 286.5,651.9 282.0,653.3 279.4,651.4 281.4,649.8 283.1,648.3 285.4,648.3" fill="#c9e5a6" /><polygon points="278.5,638.2 277.5,638.6 275.6,639.2 273.9,638.4 273.5,636.0 275.4,635.2 277.2,635.6" fill="#c9e5a6" /><polygon points="286.8,629.5 286.2,631.1 283.7,631.7 283.4,629.8 283.4,628.8 283.8,627.7 286.0,628.4" fill="#c9e5a6" /><polygon points="265.1,632.9 264.0,635.2 260.5,634.4 257.9,633.3 258.5,632.1 260.8,629.1 263.3,630.3" fill="#c9e5a6" /><polygon points="289.6,646.9 289.2,649.6 285.7,649.7 283.1,648.7 283.3,644.2 286.1,643.5 289.4,643.7" fill="#c9e5a6" /><polygon points="288.3,632.9 286.7,634.1 285.4,634.4 284.5,633.3 283.7,631.7 285.3,631.1 287.4,630.4" fill="#c9e5a6" /><polygon points="287.6,643.9 288.0,645.2 284.9,646.6 281.9,644.4 282.3,641.6 284.2,641.0 288.9,641.1" fill="#c9e5a6" /><polygon points="261.5,648.5 260.9,650.6 258.1,650.0 255.2,648.8 254.6,647.1 258.1,645.7 260.4,647.1" fill="#c9e5a6" /><polygon points="487.7,688.6 512.9,688.6 514.8,671.2 532.2,671.2 534.2,719.7 522.6,723.5 522.6,758.4 487.7,758.4" fill="#c9e5a6" /><polygon points="526.4,628.6 525.1,632.4 518.3,635.7 517.1,631.3 515.5,627.8 521.3,625.6 523.6,627.2" fill="#c9e5a6" /><polygon points="502.4,624.3 501.7,627.3 497.4,628.3 494.5,626.2 493.5,623.1 496.1,621.5 499.5,622.6" fill="#c9e5a6" /><polygon points="502.9,635.7 499.7,637.7 496.1,639.6 494.4,635.5 492.5,632.9 495.7,629.4 500.6,633.0" fill="#c9e5a6" /><polygon points="503.7,637.7 501.7,639.0 499.9,640.6 498.6,638.7 496.6,635.1 500.7,635.1 503.1,634.4" fill="#c9e5a6" /><polygon points="520.7,635.7 520.7,638.5 518.1,638.2 516.7,637.5 515.1,633.7 518.8,634.2 520.4,632.5" fill="#c9e5a6" /><polygon points="519.3,638.2 517.2,640.1 514.3,642.9 513.1,640.4 513.1,636.0 514.8,635.4 517.3,636.2" fill="#c9e5a6" /><polygon points="549.9,639.4 548.3,643.2 542.8,644.5 540.5,642.8 540.9,635.6 545.5,634.3 550.4,635.0" fill="#c9e5a6" /><polygon points="535.1,638.5 535.2,640.9 532.2,641.6 527.0,639.7 525.7,636.7 531.4,634.9 535.5,635.3" fill="#c9e5a6" /><polygon points="437.6,783.3 434.1,784.6 432.0,786.3 430.5,784.4 430.6,782.5 432.5,780.9 435.7,779.4" fill="#c9e5a6" /><polygon points="441.3,796.8 438.6,797.5 436.3,799.2 433.9,798.4 434.1,795.2 436.1,793.3 439.1,794.5" fill="#c9e5a6" /><polygon points="538.6,786.1 537.9,788.8 536.0,789.7 534.9,787.2 534.6,785.7 534.9,783.1 538.4,783.1" fill="#c9e5a6" /><polygon points="491.7,744.3 489.4,748.1 485.7,748.0 482.7,747.5 484.1,743.6 487.4,741.1 488.8,743.7" fill="#c9e5a6" /><polygon points="457.6,790.1 457.7,791.8 455.7,791.6 454.2,790.8 454.2,789.0 456.3,787.5 457.3,789.1" fill="#c9e5a6" /><polygon points="331.1,838.0 330.3,840.8 327.5,841.3 326.1,838.8 324.2,837.0 328.6,834.4 329.3,836.4" fill="#c9e5a6" /><polygon points="369.7,786.8 370.4,788.2 366.9,788.9 365.2,787.8 365.2,786.3 367.4,784.2 368.6,785.5" fill="#c9e5a6" /><polygon points="504.9,808.5 503.6,810.4 500.9,811.5 499.5,809.8 498.7,807.0 501.5,806.7 504.0,806.0" fill="#c9e5a6" /><polygon points="322.0,749.4 320.5,750.7 319.5,752.2 317.8,750.6 316.9,747.4 318.9,747.3 321.5,746.5" fill="#c9e5a6" /><polygon points="395.7,753.9 392.8,755.4 390.6,755.1 389.2,754.3 388.5,750.5 390.6,750.5 393.1,750.8" fill="#c9e5a6" /><polygon points="401.1,783.2 399.9,785.3 398.8,786.1 397.1,783.1 396.7,782.2 398.5,779.7 400.9,780.8" fill="#c9e5a6" /><polygon points="502.9,746.5 503.0,750.7 501.2,750.6 498.4,749.4 499.1,745.7 499.8,743.4 503.2,744.0" fill="#c9e5a6" /><polygon points="402.3,777.1 400.7,780.2 397.1,779.7 394.7,778.0 395.1,774.8 398.5,773.2 401.8,775.2" fill="#c9e5a6" /><polygon points="433.3,818.0 433.3,821.2 430.6,820.0 428.5,819.5 426.7,817.0 429.7,816.2 432.5,815.5" fill="#c9e5a6" /><polygon points="496.5,759.9 495.1,760.8 493.9,761.8 492.1,761.5 492.7,758.7 493.3,757.7 495.1,756.9" fill="#c9e5a6" /><polygon points="382.2,799.8 379.1,802.5 376.8,803.9 375.6,801.2 373.5,799.7 377.8,797.9 380.1,798.2" fill="#c9e5a6" /><polygon points="371.5,848.3 371.2,851.0 367.5,851.2 366.9,849.9 366.3,848.3 368.6,846.6 371.5,846.6" fill="#c9e5a6" /><polygon points="369.1,797.6 367.8,802.4 366.7,801.4 365.3,799.5 364.8,797.5 366.7,795.4 368.0,797.1" fill="#c9e5a6" /><polygon points="500.0,786.2 499.5,787.5 497.2,788.4 494.8,786.8 494.4,785.5 496.3,783.6 499.6,784.0" fill="#c9e5a6" /><polygon points="329.4,784.2 328.4,785.2 325.7,786.0 324.1,784.7 322.8,782.6 326.3,780.6 327.9,781.2" fill="#c9e5a6" /><polygon points="396.7,799.2 395.3,800.6 393.3,801.3 391.6,799.8 392.3,798.2 394.0,797.7 394.7,797.9" fill="#c9e5a6" /><polygon points="471.7,818.5 470.8,819.1 469.4,819.7 468.2,818.7 467.9,816.4 468.9,815.1 471.4,815.8" fill="#c9e5a6" /><polygon points="84.7,904.3 81.2,908.2 77.1,907.9 75.6,906.4 73.6,903.2 76.8,901.9 82.8,901.4" fill="#c9e5a6" /><polygon points="118.0,930.2 116.7,933.4 114.0,936.4 110.1,929.6 109.9,924.0 111.9,920.3 116.0,924.9" fill="#c9e5a6" /><polygon points="62.4,896.2 58.5,901.5 54.7,905.8 48.6,902.2 49.2,894.0 53.8,892.0 61.1,891.7" fill="#c9e5a6" /><polygon points="118.3,926.6 116.3,932.7 112.2,932.5 111.1,929.6 110.6,926.9 113.7,918.4 115.6,923.5" fill="#c9e5a6" /><polygon points="104.7,940.1 105.3,943.2 101.7,944.8 98.3,941.2 98.1,937.3 100.9,934.4 103.8,936.7" fill="#c9e5a6" /><polygon points="108.7,888.3 106.6,894.1 98.3,895.0 92.3,892.1 94.0,883.9 99.7,883.1 108.2,882.5" fill="#c9e5a6" /><polygon points="93.4,920.6 93.6,929.4 88.1,928.5 85.9,923.0 87.1,918.8 87.9,914.9 93.0,915.9" fill="#c9e5a6" /><polygon points="57.2,935.3 54.9,937.7 48.7,941.0 45.4,937.6 45.8,933.7 49.6,931.0 57.0,931.5" fill="#c9e5a6" /><polygon points="58.1,945.1 58.2,947.4 55.6,947.8 51.3,945.6 52.8,942.3 55.5,940.6 57.8,937.3" fill="#c9e5a6" /><polygon points="78.3,918.8 79.7,926.0 70.1,924.0 66.2,920.5 67.6,916.5 72.7,908.2 76.5,911.4" fill="#c9e5a6" /><polygon points="66.2,952.1 65.2,956.0 62.5,954.1 59.0,953.3 61.2,950.7 62.2,948.8 65.2,949.8" fill="#c9e5a6" /><polygon points="69.5,895.7 65.3,902.8 62.2,902.0 55.6,897.7 55.9,893.9 58.6,887.9 66.3,890.7" fill="#c9e5a6" /><polygon points="97.7,879.1 94.4,882.1 88.7,883.2 85.3,882.5 83.0,878.4 90.7,877.1 94.8,875.6" fill="#c9e5a6" /><polygon points="84.9,956.1 83.0,959.2 76.7,959.7 72.5,958.1 74.1,953.8 79.0,952.9 81.8,954.0" fill="#c9e5a6" /><polygon points="102.9,897.7 100.4,900.7 96.3,903.4 93.7,898.1 91.3,892.4 95.4,887.7 98.4,891.9" fill="#c9e5a6" /><polygon points="55.7,917.8 54.9,922.8 48.0,923.8 45.5,919.8 45.2,917.6 47.3,914.8 53.0,914.8" fill="#c9e5a6" /><polygon points="72.0,925.5 72.4,931.7 67.4,934.4 66.7,930.8 66.6,924.7 69.3,922.2 71.9,920.1" fill="#c9e5a6" /><polygon points="130.9,887.0 128.5,892.7 126.2,893.9 123.8,890.5 119.7,886.9 126.5,880.7 129.0,883.8" fill="#c9e5a6" /><polygon points="96.7,896.3 94.3,904.3 92.4,903.6 88.9,898.5 86.4,893.8 92.1,888.8 96.2,892.3" fill="#c9e5a6" /><polygon points="83.7,947.5 83.3,953.1 79.3,953.7 75.5,952.3 75.0,946.4 79.8,940.8 82.4,945.3" fill="#c9e5a6" /><polygon points="82.5,881.9 82.5,884.8 77.3,888.6 73.7,883.5 74.3,881.0 78.8,878.0 84.1,878.4" fill="#c9e5a6" /><polygon points="126.4,876.2 124.5,882.0 119.9,880.9 117.4,879.7 117.3,877.1 120.1,874.7 122.9,873.8" fill="#c9e5a6" /><polygon points="98.7,888.4 95.3,889.8 90.8,892.8 86.4,889.6 87.6,885.6 89.6,884.1 93.5,885.3" fill="#c9e5a6" /><polygon points="54.6,931.8 54.1,937.9 49.6,938.1 42.6,933.4 46.4,926.8 49.4,925.6 53.1,925.1" fill="#c9e5a6" /><polygon points="56.2,908.4 55.9,912.9 52.7,915.1 50.2,911.1 48.7,907.2 50.7,903.7 56.3,905.0" fill="#c9e5a6" /><polygon points="108.4,876.8 108.0,880.8 102.7,882.5 100.6,880.0 99.7,877.3 104.1,872.9 106.9,873.2" fill="#c9e5a6" /><polygon points="69.2,915.7 65.8,924.8 60.9,924.2 58.0,919.7 55.7,913.4 62.9,909.5 65.9,913.5" fill="#c9e5a6" /><polygon points="62.1,920.6 61.6,922.1 57.7,923.2 55.4,923.0 55.5,918.2 57.7,914.4 62.1,915.6" fill="#c9e5a6" /><polygon points="102.7,946.9 99.1,951.4 89.9,952.6 83.5,948.5 84.8,946.2 91.0,942.7 96.4,944.2" fill="#c9e5a6" /><polygon points="111.1,921.6 109.8,924.3 108.0,924.8 104.1,925.1 103.9,921.0 107.7,917.7 110.4,917.0" fill="#c9e5a6" /><polygon points="121.5,881.5 119.4,884.4 116.3,885.0 113.1,884.0 113.2,876.4 116.8,875.5 121.0,876.4" fill="#c9e5a6" /><polygon points="117.4,945.3 116.2,946.9 113.1,951.3 111.9,945.5 111.5,942.5 114.0,940.5 118.7,940.9" fill="#c9e5a6" /><polygon points="56.3,936.8 52.9,939.5 51.6,939.4 48.5,938.7 49.0,936.3 51.7,933.1 53.7,934.7" fill="#c9e5a6" /><polygon points="105.3,942.4 100.0,945.0 97.3,945.2 91.4,942.6 92.6,940.3 95.9,938.9 101.0,939.1" fill="#c9e5a6" /><polygon points="101.4,899.2 100.3,901.6 96.4,903.7 95.6,902.2 92.7,896.4 95.9,893.2 100.4,895.6" fill="#c9e5a6" /><polygon points="116.3,910.6 115.9,915.4 110.5,917.2 108.7,913.4 110.4,907.7 111.3,906.4 113.5,906.6" fill="#c9e5a6" /><polygon points="80.1,939.6 77.8,943.9 75.3,947.5 71.5,942.6 71.4,938.2 76.6,934.1 79.3,938.7" fill="#c9e5a6" /><polygon points="127.9,911.3 127.0,913.3 123.1,914.4 116.6,912.5 117.4,908.9 122.4,907.2 128.4,908.3" fill="#c9e5a6" /><polygon points="62.3,905.4 58.1,907.4 55.6,907.8 50.2,906.8 49.0,904.2 54.0,901.4 61.2,900.5" fill="#c9e5a6" /><polygon points="70.6,949.6 68.5,958.5 64.1,957.8 61.1,953.3 59.3,949.4 64.6,946.0 66.3,946.5" fill="#c9e5a6" /><polygon points="131.8,889.1 131.7,894.0 124.3,893.6 121.4,891.0 119.6,887.4 126.5,884.0 131.1,885.4" fill="#c9e5a6" /><polygon points="82.5,895.8 82.0,900.4 77.0,901.8 74.6,896.6 71.3,892.4 78.4,890.9 84.7,890.3" fill="#c9e5a6" /><polygon points="83.1,950.6 82.1,958.3 77.9,959.2 76.5,952.7 78.4,947.2 80.2,941.6 82.5,942.3" fill="#c9e5a6" /><polygon points="92.2,921.5 90.3,924.7 81.6,925.9 77.1,925.0 77.5,919.1 82.5,916.8 88.2,920.2" fill="#c9e5a6" /><polygon points="81.4,885.9 79.2,886.8 76.6,890.6 73.2,886.9 72.7,883.4 75.8,879.8 80.4,881.1" fill="#c9e5a6" /><polygon points="68.1,933.2 66.1,935.7 62.1,937.1 60.9,934.9 59.5,931.8 62.2,931.4 68.3,931.4" fill="#c9e5a6" /><polygon points="83.4,893.7 81.7,897.0 76.5,899.9 68.1,896.6 69.7,890.5 74.3,884.5 81.5,886.7" fill="#c9e5a6" /><polygon points="72.5,924.6 69.1,931.6 64.9,931.6 62.2,928.1 64.1,923.9 65.8,920.1 70.4,918.0" fill="#c9e5a6" /><polygon points="75.9,935.6 73.6,938.9 70.5,939.5 63.7,937.2 65.8,933.6 67.8,930.7 73.7,932.3" fill="#c9e5a6" /><polygon points="86.2,939.7 83.6,941.2 76.8,942.3 73.2,940.0 72.2,935.5 78.5,931.7 82.7,935.7" fill="#c9e5a6" /><polygon points="120.3,930.0 119.1,938.3 113.8,942.6 109.6,935.9 108.6,930.3 114.0,926.7 117.5,924.2" fill="#c9e5a6" /><polygon points="103.1,941.0 101.2,944.0 98.2,948.6 92.2,941.4 94.1,938.8 96.9,932.9 100.1,932.2" fill="#c9e5a6" /><polygon points="74.6,918.8 74.1,923.4 71.0,923.9 70.0,921.4 68.7,918.1 71.4,914.1 74.1,917.1" fill="#c9e5a6" /><polygon points="124.3,889.0 120.6,896.2 115.2,892.7 108.5,893.6 108.6,885.7 112.8,884.1 118.0,885.8" fill="#c9e5a6" /><polygon points="77.6,957.3 76.0,962.5 72.1,968.5 66.9,962.8 65.2,954.4 72.3,951.7 77.1,951.8" fill="#c9e5a6" /><polygon points="85.7,901.4 83.2,904.7 78.4,905.9 73.3,905.4 73.0,900.9 78.4,897.8 81.7,899.1" fill="#c9e5a6" /><polygon points="83.0,903.7 81.9,905.3 76.2,905.3 71.0,905.3 72.3,901.4 76.4,899.6 81.6,899.7" fill="#c9e5a6" /><polygon points="76.8,917.6 76.5,922.5 71.2,924.5 68.2,920.2 67.2,916.4 69.7,910.7 76.9,915.1" fill="#c9e5a6" /><polygon points="81.3,944.5 79.4,950.4 71.1,954.4 69.5,947.8 67.2,941.7 72.7,942.8 78.0,942.5" fill="#c9e5a6" /><polygon points="109.3,961.2 105.7,963.4 101.0,963.9 97.5,962.5 98.3,959.3 98.3,956.6 107.7,958.0" fill="#c9e5a6" /><polygon points="62.0,900.0 80.0,888.0 96.0,905.0 110.0,930.0 100.0,950.0 80.0,955.0 66.0,935.0" fill="#c9e5a6" /><polygon points="95.0,870.0 119.0,870.0 119.0,906.0 100.0,906.0" fill="#d6e6cb" /><polygon points="73.0,893.1 69.8,897.6 64.7,902.5 61.1,899.2 63.3,890.6 65.0,885.7 71.0,885.1" fill="#c9e5a6" /><polygon points="93.4,927.8 91.6,934.7 86.9,936.1 83.4,933.7 82.3,926.3 85.5,922.5 90.8,925.8" fill="#c9e5a6" /><polygon points="98.5,916.7 99.1,920.4 90.4,920.2 84.4,920.4 83.3,914.0 89.8,910.8 99.4,910.9" fill="#c9e5a6" /><polygon points="114.0,915.1 115.3,918.8 110.4,920.0 104.4,916.6 106.0,913.5 110.4,909.0 113.0,912.5" fill="#c9e5a6" /><polygon points="106.3,899.5 105.5,904.8 100.4,906.5 99.3,901.0 99.1,894.5 101.1,891.9 105.8,895.8" fill="#c9e5a6" /><polygon points="78.6,885.8 78.4,889.3 73.3,890.3 68.6,889.0 70.2,884.1 73.6,880.2 77.9,882.7" fill="#c9e5a6" /><polygon points="105.7,920.8 107.6,925.9 99.2,929.3 95.1,924.1 93.1,916.4 100.6,911.9 104.2,914.5" fill="#c9e5a6" /><polygon points="75.5,947.2 74.0,951.7 72.0,952.1 69.3,947.8 70.7,943.5 72.4,941.6 74.4,939.0" fill="#c9e5a6" /><polygon points="119.1,929.6 117.5,933.8 112.5,935.7 108.9,931.9 108.1,925.9 112.9,924.9 118.9,923.6" fill="#c9e5a6" /><polygon points="118.4,920.9 115.8,927.8 110.8,927.4 107.9,923.1 109.3,920.7 112.7,915.8 116.6,917.5" fill="#c9e5a6" /><polygon points="115.3,889.1 114.9,900.4 111.6,895.6 104.6,892.9 105.6,886.8 110.8,880.7 112.8,885.7" fill="#c9e5a6" /><polygon points="110.2,947.9 111.1,952.2 103.0,954.2 97.8,950.4 97.6,945.6 100.1,941.8 106.2,944.9" fill="#c9e5a6" /><polygon points="81.9,915.2 79.3,919.7 73.2,922.8 69.4,918.6 68.0,914.7 73.2,910.3 79.5,912.6" fill="#c9e5a6" /><polygon points="70.9,934.3 67.2,937.6 61.3,940.4 61.4,936.3 59.6,931.3 62.5,929.2 66.6,931.4" fill="#c9e5a6" /><polygon points="98.2,931.1 95.2,936.7 90.7,937.9 86.5,938.8 86.8,926.6 90.2,923.8 95.6,925.5" fill="#c9e5a6" /><polygon points="116.9,899.3 113.6,903.5 111.6,902.2 107.2,902.5 108.9,896.6 111.2,893.4 113.7,893.2" fill="#c9e5a6" /><polygon points="72.9,920.2 68.4,923.1 66.5,923.4 60.5,923.3 62.1,915.2 64.6,914.3 70.1,915.3" fill="#c9e5a6" /><polygon points="109.1,949.5 109.5,953.9 101.9,951.7 98.5,949.9 99.5,947.4 100.8,941.3 105.3,944.7" fill="#c9e5a6" /><polygon points="76.5,936.8 76.2,940.1 72.3,942.3 67.2,939.1 66.2,933.9 70.4,931.4 77.0,932.6" fill="#c9e5a6" /><polygon points="87.3,921.1 85.9,926.1 81.1,923.5 75.8,923.2 78.9,918.9 82.5,916.1 85.7,917.3" fill="#c9e5a6" /><polygon points="116.4,902.8 115.5,910.5 111.3,909.4 109.1,908.1 108.0,901.3 111.5,897.0 113.8,897.3" fill="#c9e5a6" /><polygon points="91.9,926.6 89.5,930.1 82.4,932.2 77.7,930.3 79.7,924.7 84.4,920.2 91.4,922.9" fill="#c9e5a6" /><polygon points="35.4,938.4 34.6,942.9 29.6,943.1 27.5,940.4 28.0,936.4 32.1,936.2 34.9,936.9" fill="#c9e5a6" /><polygon points="34.5,943.9 33.2,948.9 29.7,948.4 28.7,947.4 27.3,943.2 31.1,940.9 32.6,940.2" fill="#c9e5a6" /><polygon points="46.8,949.2 46.3,952.3 41.7,952.6 38.5,950.6 40.2,947.4 42.8,946.4 45.2,946.9" fill="#c9e5a6" /><polygon points="49.4,896.6 47.5,898.8 44.7,901.4 39.1,898.2 39.2,893.8 45.0,892.0 48.9,892.9" fill="#c9e5a6" /><polygon points="52.7,934.2 52.9,936.8 48.2,937.5 46.3,935.0 45.3,933.2 47.9,931.4 50.0,932.1" fill="#c9e5a6" /><polygon points="38.8,916.7 37.7,919.8 32.1,919.6 28.5,919.3 29.3,914.2 32.9,910.9 37.3,914.7" fill="#c9e5a6" /><polygon points="41.2,950.1 41.9,952.0 38.1,953.6 35.1,950.7 34.7,947.7 38.1,946.7 40.2,948.0" fill="#c9e5a6" /><polygon points="40.9,946.2 39.5,949.2 36.9,949.5 31.2,948.2 31.5,945.6 36.2,943.7 39.2,943.7" fill="#c9e5a6" /><polygon points="33.4,869.8 31.5,872.0 26.8,873.6 25.2,871.8 23.7,869.2 27.9,868.4 32.3,867.3" fill="#c9e5a6" /><polygon points="47.9,905.0 44.9,910.9 42.2,911.6 39.6,908.4 39.4,903.3 41.1,899.2 45.3,901.4" fill="#c9e5a6" /><polygon points="60.6,912.5 58.9,915.5 54.5,915.2 50.5,913.0 51.8,907.0 54.6,904.0 58.2,904.1" fill="#c9e5a6" /><polygon points="47.4,961.6 45.5,966.7 43.0,967.0 39.0,966.6 38.8,961.1 41.9,958.0 47.7,958.6" fill="#c9e5a6" /><polygon points="44.3,924.9 43.2,928.4 37.3,929.5 34.9,924.6 35.0,921.3 38.1,916.6 41.6,919.1" fill="#c9e5a6" /><polygon points="47.2,915.8 46.5,918.9 43.1,918.1 40.5,916.3 39.4,911.4 42.7,907.8 45.7,909.5" fill="#c9e5a6" /><polygon points="32.3,896.0 31.0,898.3 26.8,898.2 22.5,898.0 23.3,894.0 27.6,888.0 29.6,891.7" fill="#c9e5a6" /><polygon points="34.6,872.8 31.0,876.5 26.2,879.9 23.8,877.2 25.0,871.0 29.1,869.4 32.0,869.9" fill="#c9e5a6" /><polygon points="169.7,931.2 170.0,933.5 166.4,936.2 163.0,932.4 161.6,928.0 166.6,925.2 168.3,926.8" fill="#c9e5a6" /><polygon points="186.9,898.5 186.9,903.3 182.7,905.1 177.4,903.5 177.5,896.7 180.9,896.3 186.3,893.3" fill="#c9e5a6" /><polygon points="179.2,931.9 177.8,934.4 174.9,936.1 173.6,934.4 173.1,931.8 175.2,930.3 177.2,930.7" fill="#c9e5a6" /><polygon points="158.1,888.4 157.2,892.6 155.0,892.4 151.5,890.0 152.2,886.4 155.3,884.5 157.6,885.6" fill="#c9e5a6" /><polygon points="175.6,913.3 172.2,914.1 170.0,915.0 165.8,913.6 167.3,911.4 170.2,907.1 173.6,909.0" fill="#c9e5a6" /><polygon points="189.8,913.0 186.7,916.5 184.8,915.0 180.8,912.4 181.8,910.0 184.6,907.3 186.8,910.0" fill="#c9e5a6" /><polygon points="201.8,888.9 202.1,892.8 198.9,893.2 196.5,890.2 196.6,887.8 199.7,884.4 201.0,885.5" fill="#c9e5a6" /><polygon points="175.8,904.5 174.4,908.4 172.8,910.9 167.6,908.7 170.0,904.1 172.1,901.9 176.5,902.1" fill="#c9e5a6" /><polygon points="187.6,890.2 187.2,893.1 184.7,897.5 183.6,893.1 183.8,888.8 185.1,885.7 187.0,889.1" fill="#c9e5a6" /><polygon points="177.5,908.2 178.1,911.6 173.5,910.7 168.2,908.7 170.1,907.4 172.2,905.3 178.2,905.4" fill="#c9e5a6" /><polygon points="234.9,930.5 234.2,932.1 230.5,933.6 229.3,931.5 228.6,928.0 230.2,927.7 234.6,926.7" fill="#c9e5a6" /><polygon points="199.6,925.1 200.0,928.2 196.9,930.3 194.7,927.1 192.5,922.8 196.1,920.1 199.9,921.7" fill="#c9e5a6" /><polygon points="193.0,934.2 192.4,937.2 191.3,936.7 188.1,935.5 189.8,933.5 190.1,932.5 192.2,932.9" fill="#c9e5a6" /><polygon points="200.4,929.3 200.1,931.2 197.0,931.9 195.9,930.1 195.6,928.1 197.0,927.4 200.2,927.2" fill="#c9e5a6" /><polygon points="211.0,926.0 209.4,928.8 204.6,927.9 202.8,927.6 201.4,924.2 205.2,922.3 207.8,923.8" fill="#c9e5a6" /><polygon points="229.4,933.8 227.9,936.5 223.8,938.2 222.1,935.3 222.9,929.1 225.2,926.9 226.9,929.2" fill="#c9e5a6" /><polygon points="136.0,884.0 163.0,884.0 163.0,898.0 140.0,898.0" fill="#d6e6cb" /><polygon points="143.9,971.0 143.6,972.5 140.5,972.8 135.3,971.6 137.3,970.4 140.3,969.4 143.0,970.0" fill="#c9e5a6" /><polygon points="140.6,979.8 141.0,982.0 138.8,981.4 137.8,980.7 137.2,979.4 139.1,977.8 140.0,979.0" fill="#c9e5a6" /><polygon points="109.3,979.3 109.0,982.8 106.3,982.4 104.5,980.3 103.8,978.2 106.1,975.8 110.2,976.1" fill="#c9e5a6" /><polygon points="39.1,970.1 38.4,972.6 36.7,971.5 35.8,970.1 35.8,968.9 36.4,967.6 37.8,967.8" fill="#c9e5a6" /><polygon points="151.9,1002.3 149.9,1004.1 147.7,1004.8 145.1,1003.1 145.5,1001.3 148.3,1000.0 149.7,1000.1" fill="#c9e5a6" /><polygon points="81.2,991.5 81.1,995.1 77.0,995.5 76.4,993.8 75.4,990.3 77.8,988.0 80.8,989.7" fill="#c9e5a6" /><polygon points="126.4,981.0 125.1,982.3 123.3,982.9 118.3,982.0 119.9,980.4 121.6,978.7 124.7,980.0" fill="#c9e5a6" /><polygon points="209.1,987.3 208.6,988.2 206.5,988.8 205.3,987.3 205.2,985.5 205.5,984.3 207.2,985.5" fill="#c9e5a6" /><polygon points="161.4,985.7 161.1,989.3 158.1,991.4 154.8,988.7 153.0,985.1 158.9,981.8 161.4,982.2" fill="#c9e5a6" /><polygon points="212.2,1000.1 211.2,1004.6 210.1,1004.1 209.0,1002.0 208.3,998.6 209.6,997.9 211.8,998.1" fill="#c9e5a6" /><polygon points="387.0,809.1 385.5,810.9 383.7,810.9 380.8,809.1 380.6,807.7 383.5,805.0 386.5,806.1" fill="#c9e5a6" /><polygon points="427.0,869.5 426.3,873.7 422.8,874.0 418.4,871.2 418.9,866.6 422.0,864.7 425.0,866.3" fill="#c9e5a6" /><polygon points="353.5,857.3 354.4,860.1 347.9,859.7 343.9,860.0 342.5,856.1 347.9,854.1 351.8,854.8" fill="#c9e5a6" /><polygon points="386.6,820.3 383.0,821.6 380.3,821.9 375.1,820.9 375.5,819.6 379.6,817.6 382.1,817.6" fill="#c9e5a6" /><polygon points="377.6,871.3 377.4,874.4 373.7,875.9 371.6,872.4 371.0,868.4 373.9,864.0 377.8,865.3" fill="#c9e5a6" /><polygon points="415.1,846.9 414.4,850.3 410.9,852.4 407.8,848.3 407.7,842.7 410.6,843.2 413.2,843.0" fill="#c9e5a6" /><polygon points="434.5,822.4 432.8,825.5 429.0,827.0 428.0,825.3 425.8,821.2 429.5,819.2 434.4,819.3" fill="#c9e5a6" /><polygon points="406.9,829.7 405.0,831.7 403.3,832.3 399.1,831.2 397.4,829.0 403.3,826.7 405.9,825.9" fill="#c9e5a6" /><polygon points="436.6,813.9 435.8,815.3 432.4,819.8 427.9,813.9 428.4,811.8 430.7,807.3 437.3,808.3" fill="#c9e5a6" /><polygon points="386.4,832.8 383.4,835.8 380.7,835.6 378.6,835.2 379.0,832.0 379.7,829.6 385.8,830.0" fill="#c9e5a6" /><polygon points="347.0,821.9 344.5,825.8 342.8,825.4 339.4,825.8 338.5,821.6 342.7,820.3 344.4,820.0" fill="#c9e5a6" /><polygon points="416.6,852.7 414.5,856.0 411.1,858.1 408.4,855.2 411.0,851.0 413.2,849.9 415.0,851.1" fill="#c9e5a6" /><polygon points="375.7,830.7 371.1,836.3 369.0,835.9 364.5,834.3 364.4,828.4 368.6,828.6 371.9,826.8" fill="#c9e5a6" /><polygon points="375.4,816.2 374.4,818.6 372.2,818.2 369.9,817.2 370.0,815.3 371.7,814.6 373.6,814.3" fill="#c9e5a6" /><polygon points="354.6,802.7 353.7,804.3 351.1,804.0 346.6,802.9 347.5,801.1 350.6,799.3 355.0,799.8" fill="#c9e5a6" /><polygon points="430.1,852.4 428.7,856.4 423.6,854.7 419.8,853.6 419.3,849.6 422.6,848.6 428.6,847.6" fill="#c9e5a6" /><polygon points="359.4,840.5 358.6,845.2 355.8,844.5 351.7,842.6 353.5,838.1 353.9,835.2 357.1,838.2" fill="#c9e5a6" /><polygon points="430.7,837.7 430.4,843.2 428.8,842.1 426.1,840.7 426.4,837.2 428.0,834.0 430.6,834.3" fill="#c9e5a6" /><polygon points="433.7,866.4 433.3,871.7 427.9,871.6 424.6,867.8 425.6,866.5 426.7,861.2 432.1,864.9" fill="#c9e5a6" /><polygon points="366.1,816.9 365.3,824.5 360.7,822.6 356.5,819.5 358.7,815.4 361.3,811.3 365.6,812.2" fill="#c9e5a6" /><polygon points="358.4,871.2 355.7,873.9 352.1,873.8 351.9,870.8 350.4,867.5 353.9,867.7 355.5,866.2" fill="#c9e5a6" /><polygon points="393.0,864.8 389.1,867.5 385.2,866.9 379.6,865.4 381.7,862.0 384.1,860.7 390.7,861.3" fill="#c9e5a6" /><polygon points="353.4,799.8 353.4,803.3 348.2,803.8 346.5,803.3 346.2,798.2 349.8,797.2 351.8,798.3" fill="#c9e5a6" /><polygon points="408.4,804.5 406.2,810.7 400.4,811.1 400.4,805.5 398.4,800.8 403.0,797.8 404.7,801.0" fill="#c9e5a6" /><polygon points="425.9,846.2 421.0,849.1 416.5,848.8 415.2,847.7 411.3,842.7 417.5,841.3 421.7,842.8" fill="#c9e5a6" /><polygon points="372.9,828.2 372.0,833.0 368.9,833.2 367.4,830.1 365.1,826.5 368.0,824.1 370.6,825.5" fill="#c9e5a6" /><polygon points="395.4,805.5 393.0,808.0 388.8,808.6 388.8,806.4 386.8,802.1 391.1,800.3 392.6,801.3" fill="#c9e5a6" /><polygon points="401.9,843.6 400.4,848.4 399.4,850.1 397.3,846.1 396.1,841.5 398.1,837.3 402.8,838.6" fill="#c9e5a6" /><polygon points="428.1,865.0 426.4,868.5 423.3,869.7 421.0,868.1 420.1,865.4 422.3,860.2 427.1,862.9" fill="#c9e5a6" /><polygon points="389.0,802.1 384.3,803.7 380.4,805.1 377.3,803.8 378.3,800.7 381.6,799.7 385.8,798.8" fill="#c9e5a6" /><polygon points="379.7,841.5 375.3,844.5 372.7,848.2 363.6,843.8 368.3,840.6 370.3,839.3 376.7,838.3" fill="#d6e6cb" /><polygon points="419.4,940.7 419.4,943.4 416.9,945.3 414.1,943.2 415.6,940.1 415.8,938.1 419.1,939.8" fill="#c9e5a6" /><polygon points="417.9,940.0 418.9,943.3 412.3,944.6 412.4,940.7 409.8,937.5 413.2,936.4 416.7,934.5" fill="#c9e5a6" /><polygon points="414.6,935.8 412.1,937.7 410.4,937.9 407.2,937.8 406.8,934.8 409.7,933.3 412.4,934.7" fill="#c9e5a6" /><polygon points="375.1,944.1 375.0,946.1 372.4,947.5 369.9,946.4 370.9,942.9 370.9,939.5 375.8,940.9" fill="#c9e5a6" /><polygon points="366.1,960.1 365.7,960.7 364.6,963.3 362.6,960.6 362.2,958.7 363.8,957.4 366.1,956.8" fill="#c9e5a6" /><polygon points="387.1,953.4 387.2,955.7 384.2,956.7 382.6,955.3 383.0,952.1 385.0,952.1 385.8,952.6" fill="#c9e5a6" /><polygon points="387.9,941.4 384.9,944.2 381.1,944.4 379.9,943.0 379.2,941.1 383.4,939.2 384.9,939.4" fill="#c9e5a6" /><polygon points="350.6,941.7 349.1,943.4 348.0,942.8 346.3,941.9 347.0,940.4 348.0,939.5 348.8,939.6" fill="#c9e5a6" /><polygon points="274.6,760.3 273.4,761.1 269.8,762.5 267.8,760.8 268.8,759.2 270.1,756.0 274.1,757.8" fill="#c9e5a6" /><polygon points="265.1,753.8 264.3,754.3 263.2,756.4 261.0,753.7 260.0,752.8 261.8,750.7 265.7,751.4" fill="#c9e5a6" /><polygon points="267.0,791.9 265.6,796.0 263.6,796.8 262.3,793.5 262.3,791.1 263.3,790.6 265.3,790.6" fill="#c9e5a6" /><polygon points="256.8,804.0 256.1,808.1 253.8,808.4 252.4,806.0 253.1,802.7 254.4,801.6 256.1,802.4" fill="#c9e5a6" /><polygon points="284.8,809.9 284.7,812.6 281.3,812.7 279.1,811.4 279.3,809.3 281.6,808.8 283.4,808.6" fill="#c9e5a6" /><polygon points="296.6,816.3 296.5,818.6 294.4,818.5 292.8,817.5 292.8,815.8 294.0,814.2 296.1,814.0" fill="#c9e5a6" /><polygon points="181.7,792.8 181.0,794.6 177.7,795.8 176.1,793.7 176.9,791.8 177.9,790.8 180.9,791.1" fill="#c9e5a6" /><polygon points="98.5,845.7 96.6,846.2 95.4,847.6 91.9,845.8 92.7,843.6 94.9,842.2 97.4,843.1" fill="#c9e5a6" /><polygon points="188.6,801.9 187.5,804.1 186.7,804.4 185.5,802.6 185.6,800.3 186.6,799.6 188.5,798.6" fill="#c9e5a6" /><polygon points="78.6,835.2 77.8,837.0 76.8,837.3 74.8,836.4 75.0,833.8 76.4,831.3 78.3,832.2" fill="#c9e5a6" /><polygon points="124.8,845.1 123.8,846.4 121.0,846.8 119.8,846.1 119.2,844.2 121.1,843.2 123.2,843.4" fill="#c9e5a6" /><polygon points="213.0,828.6 213.0,831.0 210.7,832.0 208.9,830.8 208.5,827.3 210.7,825.7 212.6,826.1" fill="#c9e5a6" /><polygon points="168.3,800.7 165.8,802.7 163.1,803.8 162.4,803.1 160.5,800.1 163.0,799.9 164.9,800.0" fill="#c9e5a6" /><polygon points="123.2,794.6 121.4,796.8 119.7,796.4 117.9,794.8 117.5,792.3 118.6,791.5 121.8,792.6" fill="#c9e5a6" /><polygon points="174.1,750.1 173.5,751.7 170.9,752.5 169.8,750.3 170.1,748.7 171.3,748.6 172.6,748.0" fill="#c9e5a6" /><polygon points="81.1,743.4 80.5,746.0 79.5,746.7 77.5,744.3 77.7,742.8 79.3,740.6 80.7,742.5" fill="#c9e5a6" /><polygon points="210.3,750.9 210.2,753.8 207.8,754.5 206.3,751.8 206.6,750.0 207.8,749.7 210.1,749.0" fill="#c9e5a6" /><polygon points="193.8,774.7 192.7,776.1 190.3,776.5 188.7,775.4 188.8,774.2 190.3,772.7 192.4,773.3" fill="#c9e5a6" /><polygon points="210.5,800.3 209.7,802.9 208.4,802.3 207.6,801.3 207.6,800.1 207.6,797.7 210.3,799.3" fill="#c9e5a6" /><polygon points="64.2,820.9 64.9,822.3 61.6,822.1 59.4,821.7 60.0,819.8 61.7,819.6 63.7,819.0" fill="#c9e5a6" /><polygon points="25.0,619.0 224.0,619.0 227.0,640.0 215.0,657.0 196.0,667.0 176.0,683.0 147.0,692.0 97.0,692.0 66.0,683.0 40.0,677.0 25.0,677.0" fill="#a3cbf6" /><polygon points="226.0,697.0 245.0,699.0 264.0,702.0 264.0,708.0 250.0,708.0 232.0,706.0 226.0,702.0" fill="#a3cbf6" /><path d="M151.0,744.0 L153.0,760.0 L156.0,778.0 L160.0,800.0" fill="none" stroke="#a3cbf6" stroke-width="2.3" stroke-linejoin="round" stroke-linecap="round" /><path d="M171.0,735.0 L175.0,752.0 L180.0,768.0 L184.0,782.0" fill="none" stroke="#a3cbf6" stroke-width="2.3" stroke-linejoin="round" stroke-linecap="round" /><path d="M120.0,745.0 L118.0,755.0 L116.0,764.0" fill="none" stroke="#a3cbf6" stroke-width="1.8" stroke-linejoin="round" stroke-linecap="round" /><path d="M101.0,750.0 L103.0,759.0 L104.0,767.0" fill="none" stroke="#a3cbf6" stroke-width="1.8" stroke-linejoin="round" stroke-linecap="round" /><path d="M197.0,747.0 L199.0,756.0 L200.0,765.0" fill="none" stroke="#a3cbf6" stroke-width="1.6" stroke-linejoin="round" stroke-linecap="round" /><polygon points="424.0,688.0 427.0,690.0 405.0,717.0 400.0,715.0" fill="#a3cbf6" /><polygon points="452.0,640.0 458.0,638.0 460.0,665.0 452.0,675.0" fill="#a3cbf6" /><polygon points="249.0,660.0 258.0,661.0 257.0,664.0 249.0,663.0" fill="#a3cbf6" /><polygon points="432.0,990.0 446.0,980.0 466.0,968.0 488.0,954.0 515.0,946.0 540.0,940.0 556.0,937.0 556.0,974.0 530.0,975.0 508.0,978.0 480.0,985.0 455.0,992.0 440.0,998.0" fill="#a3cbf6" /><polygon points="505.0,1012.0 556.0,1004.0 556.0,1020.0 500.0,1020.0" fill="#a3cbf6" /><polygon points="418.0,992.0 430.0,985.0 440.0,995.0 436.0,1008.0 425.0,1012.0 416.0,1004.0" fill="#a3cbf6" /><path d="M445.0,775.0 L441.0,809.0 L433.0,840.0 L428.0,860.0 L428.0,900.0 L431.0,940.0 L433.0,975.0 L434.0,995.0" fill="none" stroke="#a3cbf6" stroke-width="2.2" stroke-linejoin="round" stroke-linecap="round" /><path d="M430.0,1000.0 L436.0,1020.0" fill="none" stroke="#a3cbf6" stroke-width="4" stroke-linejoin="round" stroke-linecap="round" /><path d="M340.9,847.3 L342.0,852.5" fill="none" stroke="#a3cbf6" stroke-width="1.3" stroke-linejoin="round" stroke-linecap="round" /><path d="M367.2,831.5 L369.9,836.7" fill="none" stroke="#a3cbf6" stroke-width="1.3" stroke-linejoin="round" stroke-linecap="round" /><path d="M491.6,1015.5 L494.2,1021.6" fill="none" stroke="#a3cbf6" stroke-width="1.3" stroke-linejoin="round" stroke-linecap="round" /><path d="M390.7,876.7 L388.7,880.1" fill="none" stroke="#a3cbf6" stroke-width="1.3" stroke-linejoin="round" stroke-linecap="round" /><path d="M375.3,779.4 L376.2,784.6" fill="none" stroke="#a3cbf6" stroke-width="1.3" stroke-linejoin="round" stroke-linecap="round" /><path d="M346.8,837.4 L344.7,841.6" fill="none" stroke="#a3cbf6" stroke-width="1.3" stroke-linejoin="round" stroke-linecap="round" /><path d="M394.3,983.4 L392.9,987.7" fill="none" stroke="#a3cbf6" stroke-width="1.3" stroke-linejoin="round" stroke-linecap="round" /><path d="M262.3,837.3 L263.4,843.4" fill="none" stroke="#a3cbf6" stroke-width="1.3" stroke-linejoin="round" stroke-linecap="round" /><path d="M431.9,958.9 L433.7,965.8" fill="none" stroke="#a3cbf6" stroke-width="1.3" stroke-linejoin="round" stroke-linecap="round" /><path d="M262.8,842.9 L264.0,847.2" fill="none" stroke="#a3cbf6" stroke-width="1.3" stroke-linejoin="round" stroke-linecap="round" /><path d="M464.6,833.7 L465.0,838.8" fill="none" stroke="#a3cbf6" stroke-width="1.3" stroke-linejoin="round" stroke-linecap="round" /><path d="M218.0,703.4 L216.2,708.3" fill="none" stroke="#a3cbf6" stroke-width="1.3" stroke-linejoin="round" stroke-linecap="round" /><path d="M529.1,743.9 L532.4,750.8" fill="none" stroke="#a3cbf6" stroke-width="1.3" stroke-linejoin="round" stroke-linecap="round" /><path d="M444.3,789.4 L440.5,796.0" fill="none" stroke="#a3cbf6" stroke-width="1.3" stroke-linejoin="round" stroke-linecap="round" /><path d="M61.3,795.5 L64.8,801.2" fill="none" stroke="#a3cbf6" stroke-width="1.3" stroke-linejoin="round" stroke-linecap="round" /><path d="M461.6,966.8 L459.0,971.8" fill="none" stroke="#a3cbf6" stroke-width="1.3" stroke-linejoin="round" stroke-linecap="round" /><path d="M75.1,821.2 L75.0,827.5" fill="none" stroke="#a3cbf6" stroke-width="1.3" stroke-linejoin="round" stroke-linecap="round" /><path d="M178.3,913.3 L175.4,917.3" fill="none" stroke="#a3cbf6" stroke-width="1.3" stroke-linejoin="round" stroke-linecap="round" /><path d="M56.1,885.9 L56.7,891.7" fill="none" stroke="#a3cbf6" stroke-width="1.3" stroke-linejoin="round" stroke-linecap="round" /><path d="M247.5,999.8 L249.2,1005.1" fill="none" stroke="#a3cbf6" stroke-width="1.3" stroke-linejoin="round" stroke-linecap="round" /><path d="M487.9,757.5 L486.3,762.7" fill="none" stroke="#a3cbf6" stroke-width="1.3" stroke-linejoin="round" stroke-linecap="round" /><path d="M342.7,1005.7 L344.1,1008.9" fill="none" stroke="#a3cbf6" stroke-width="1.3" stroke-linejoin="round" stroke-linecap="round" /><path d="M525.5,849.6 L523.1,855.6" fill="none" stroke="#a3cbf6" stroke-width="1.3" stroke-linejoin="round" stroke-linecap="round" /><path d="M357.9,973.5 L358.4,977.5" fill="none" stroke="#a3cbf6" stroke-width="1.3" stroke-linejoin="round" stroke-linecap="round" /><path d="M274.3,849.2 L273.2,854.5" fill="none" stroke="#a3cbf6" stroke-width="1.3" stroke-linejoin="round" stroke-linecap="round" /><path d="M104.1,781.0 L101.0,784.1" fill="none" stroke="#a3cbf6" stroke-width="1.3" stroke-linejoin="round" stroke-linecap="round" /><path d="M303.4,936.0 L302.6,942.6" fill="none" stroke="#a3cbf6" stroke-width="1.3" stroke-linejoin="round" stroke-linecap="round" /><path d="M347.5,910.7 L345.7,917.3" fill="none" stroke="#a3cbf6" stroke-width="1.3" stroke-linejoin="round" stroke-linecap="round" /><path d="M209.4,970.4 L207.4,977.3" fill="none" stroke="#a3cbf6" stroke-width="1.3" stroke-linejoin="round" stroke-linecap="round" /><path d="M387.0,757.1 L388.9,760.7" fill="none" stroke="#a3cbf6" stroke-width="1.3" stroke-linejoin="round" stroke-linecap="round" /><path d="M-10.1,678.9 L-8.6,688.6 L-7.8,693.5 L-4.9,704.2" fill="none" stroke="#f4cd8a" stroke-width="1.25" stroke-linejoin="round" stroke-linecap="round" /><path d="M-4.9,704.2 L3.9,696.2 L21.0,700.7 L33.8,691.6" fill="none" stroke="#f4cd8a" stroke-width="1.25" stroke-linejoin="round" stroke-linecap="round" /><path d="M-3.4,736.5 L5.0,730.0 L13.4,728.5 L21.6,731.5" fill="none" stroke="#f4cd8a" stroke-width="1.25" stroke-linejoin="round" stroke-linecap="round" /><path d="M-3.4,736.5 L-4.2,742.2 L2.3,748.1 L5.6,758.1" fill="none" stroke="#f4cd8a" stroke-width="1.25" stroke-linejoin="round" stroke-linecap="round" /><path d="M-3.4,736.5 L2.2,748.1 L20.3,754.8 L24.9,757.8" fill="none" stroke="#f4cd8a" stroke-width="1.25" stroke-linejoin="round" stroke-linecap="round" /><path d="M-3.4,736.5 L6.0,725.3 L16.5,703.0 L33.8,691.6" fill="none" stroke="#f4cd8a" stroke-width="1.25" stroke-linejoin="round" stroke-linecap="round" /><path d="M5.6,758.1 L16.7,762.3 L21.9,756.1 L24.9,757.8" fill="none" stroke="#f4cd8a" stroke-width="1.25" stroke-linejoin="round" stroke-linecap="round" /><path d="M5.6,758.1 L9.7,772.5 L9.8,781.5 L4.8,789.3" fill="none" stroke="#f4cd8a" stroke-width="1.25" stroke-linejoin="round" stroke-linecap="round" /><path d="M4.8,789.3 L13.4,788.1 L21.3,773.6 L28.5,772.8" fill="none" stroke="#f4cd8a" stroke-width="1.25" stroke-linejoin="round" stroke-linecap="round" /><path d="M4.8,789.3 L9.1,797.0 L5.8,804.9 L6.6,806.3" fill="none" stroke="#f4cd8a" stroke-width="1.25" stroke-linejoin="round" stroke-linecap="round" /><path d="M6.6,806.3 L13.4,799.8 L17.2,802.4 L16.0,801.5" fill="none" stroke="#f4cd8a" stroke-width="1.25" stroke-linejoin="round" stroke-linecap="round" /><path d="M6.6,806.3 L9.6,811.8 L13.4,822.8 L21.1,828.6" fill="none" stroke="#f4cd8a" stroke-width="1.25" stroke-linejoin="round" stroke-linecap="round" /><path d="M-0.1,826.4 L11.0,823.3 L11.9,826.9 L21.1,828.6" fill="none" stroke="#f4cd8a" stroke-width="1.25" stroke-linejoin="round" stroke-linecap="round" /><path d="M-4.7,858.6 L-0.6,868.6 L-1.1,874.1 L0.4,879.1" fill="none" stroke="#f4cd8a" stroke-width="1.25" stroke-linejoin="round" stroke-linecap="round" /><path d="M0.4,879.1 L0.8,884.7 L13.7,882.9 L15.5,889.5" fill="none" stroke="#f4cd8a" stroke-width="1.25" stroke-linejoin="round" stroke-linecap="round" /><path d="M0.4,879.1 L3.8,872.4 L15.2,859.2 L20.7,854.3" fill="none" stroke="#f4cd8a" stroke-width="1.25" stroke-linejoin="round" stroke-linecap="round" /><path d="M3.1,907.5 L4.2,923.7 L-5.1,933.0 L-3.5,942.7" fill="none" stroke="#f4cd8a" stroke-width="1.25" stroke-linejoin="round" stroke-linecap="round" /><path d="M-3.5,942.7 L2.4,941.7 L13.5,944.1 L16.9,947.6" fill="none" stroke="#f4cd8a" stroke-width="1.25" stroke-linejoin="round" stroke-linecap="round" /><path d="M-3.5,942.7 L7.1,944.6 L12.1,960.6 L16.6,962.8" fill="none" stroke="#f4cd8a" stroke-width="1.25" stroke-linejoin="round" stroke-linecap="round" /><path d="M4.8,972.6 L7.9,965.0 L16.1,966.0 L16.6,962.8" fill="none" stroke="#f4cd8a" stroke-width="1.25" stroke-linejoin="round" stroke-linecap="round" /><path d="M4.8,972.6 L8.1,976.7 L21.3,981.4 L24.8,992.9" fill="none" stroke="#f4cd8a" stroke-width="1.25" stroke-linejoin="round" stroke-linecap="round" /><path d="M4.8,972.6 L7.6,963.2 L16.3,959.5 L16.9,947.6" fill="none" stroke="#f4cd8a" stroke-width="1.25" stroke-linejoin="round" stroke-linecap="round" /><path d="M-9.0,1000.3 L4.7,996.4 L16.2,997.0 L24.8,992.9" fill="none" stroke="#f4cd8a" stroke-width="1.25" stroke-linejoin="round" stroke-linecap="round" /><path d="M-9.0,1000.3 L-8.8,1008.2 L-8.3,1018.2 L-7.3,1026.3" fill="none" stroke="#f4cd8a" stroke-width="1.25" stroke-linejoin="round" stroke-linecap="round" /><path d="M-7.3,1026.3 L8.6,1027.4 L15.0,1021.2 L30.7,1024.1" fill="none" stroke="#f4cd8a" stroke-width="1.25" stroke-linejoin="round" stroke-linecap="round" /><path d="M-7.3,1026.3 L-1.6,1036.5 L-1.1,1053.5 L-3.7,1060.1" fill="none" stroke="#f4cd8a" stroke-width="1.25" stroke-linejoin="round" stroke-linecap="round" /><path d="M-3.7,1060.1 L6.0,1060.8 L15.7,1053.7 L25.5,1048.5" fill="none" stroke="#f4cd8a" stroke-width="1.25" stroke-linejoin="round" stroke-linecap="round" /><path d="M33.8,691.6 L33.3,696.0 L36.1,702.0 L43.5,708.7" fill="none" stroke="#f4cd8a" stroke-width="1.25" stroke-linejoin="round" stroke-linecap="round" /><path d="M33.8,691.6 L29.5,709.7 L26.0,714.8 L21.6,731.5" fill="none" stroke="#f4cd8a" stroke-width="1.25" stroke-linejoin="round" stroke-linecap="round" /><path d="M33.8,691.6 L44.6,706.9 L50.9,721.8 L60.8,737.0" fill="none" stroke="#f4cd8a" stroke-width="1.25" stroke-linejoin="round" stroke-linecap="round" /><path d="M21.6,731.5 L35.6,728.8 L47.7,732.7 L60.8,737.0" fill="none" stroke="#f4cd8a" stroke-width="1.25" stroke-linejoin="round" stroke-linecap="round" /><path d="M21.6,731.5 L22.3,742.9 L28.4,751.5 L24.9,757.8" fill="none" stroke="#f4cd8a" stroke-width="1.25" stroke-linejoin="round" stroke-linecap="round" /><path d="M24.9,757.8 L36.5,755.1 L42.4,759.2 L52.9,758.7" fill="none" stroke="#f4cd8a" stroke-width="1.25" stroke-linejoin="round" stroke-linecap="round" /><path d="M24.9,757.8 L29.7,763.3 L32.0,763.1 L28.5,772.8" fill="none" stroke="#f4cd8a" stroke-width="1.25" stroke-linejoin="round" stroke-linecap="round" /><path d="M28.5,772.8 L38.5,776.3 L49.9,777.4 L54.0,780.6" fill="none" stroke="#f4cd8a" stroke-width="1.25" stroke-linejoin="round" stroke-linecap="round" /><path d="M28.5,772.8 L26.8,783.0 L17.9,796.2 L16.0,801.5" fill="none" stroke="#f4cd8a" stroke-width="1.25" stroke-linejoin="round" stroke-linecap="round" /><path d="M28.5,772.8 L37.0,772.2 L48.3,766.5 L52.9,758.7" fill="none" stroke="#f4cd8a" stroke-width="1.25" stroke-linejoin="round" stroke-linecap="round" /><path d="M16.0,801.5 L25.9,802.6 L32.3,807.2 L45.4,810.8" fill="none" stroke="#f4cd8a" stroke-width="1.25" stroke-linejoin="round" stroke-linecap="round" /><path d="M21.1,828.6 L21.9,836.4 L24.9,849.1 L20.7,854.3" fill="none" stroke="#f4cd8a" stroke-width="1.25" stroke-linejoin="round" stroke-linecap="round" /><path d="M21.1,828.6 L32.4,840.2 L34.2,850.6 L42.8,857.9" fill="none" stroke="#f4cd8a" stroke-width="1.25" stroke-linejoin="round" stroke-linecap="round" /><path d="M20.7,854.3 L28.2,856.8 L39.7,860.6 L42.8,857.9" fill="none" stroke="#f4cd8a" stroke-width="1.25" stroke-linejoin="round" stroke-linecap="round" /><path d="M20.7,854.3 L17.9,868.2 L18.9,873.7 L15.5,889.5" fill="none" stroke="#f4cd8a" stroke-width="1.25" stroke-linejoin="round" stroke-linecap="round" /><path d="M15.5,889.5 L21.8,889.1 L32.2,890.5 L44.3,894.3" fill="none" stroke="#f4cd8a" stroke-width="1.25" stroke-linejoin="round" stroke-linecap="round" /><path d="M15.5,889.5 L24.0,897.5 L26.7,905.2 L30.2,909.2" fill="none" stroke="#f4cd8a" stroke-width="1.25" stroke-linejoin="round" stroke-linecap="round" /><path d="M30.2,909.2 L34.4,912.6 L48.7,914.7 L51.6,911.7" fill="none" stroke="#f4cd8a" stroke-width="1.25" stroke-linejoin="round" stroke-linecap="round" /><path d="M30.2,909.2 L29.9,919.2 L17.6,935.9 L16.9,947.6" fill="none" stroke="#f4cd8a" stroke-width="1.25" stroke-linejoin="round" stroke-linecap="round" /><path d="M30.2,909.2 L35.9,904.6 L39.9,899.4 L44.3,894.3" fill="none" stroke="#f4cd8a" stroke-width="1.25" stroke-linejoin="round" stroke-linecap="round" /><path d="M16.9,947.6 L33.2,948.4 L46.1,948.1 L57.6,943.4" fill="none" stroke="#f4cd8a" stroke-width="1.25" stroke-linejoin="round" stroke-linecap="round" /><path d="M16.9,947.6 L18.2,948.8 L12.5,957.2 L16.6,962.8" fill="none" stroke="#f4cd8a" stroke-width="1.25" stroke-linejoin="round" stroke-linecap="round" /><path d="M16.6,962.8 L19.2,972.5 L26.8,979.4 L24.8,992.9" fill="none" stroke="#f4cd8a" stroke-width="1.25" stroke-linejoin="round" stroke-linecap="round" /><path d="M24.8,992.9 L29.0,987.7 L40.5,989.2 L42.0,988.2" fill="none" stroke="#f4cd8a" stroke-width="1.25" stroke-linejoin="round" stroke-linecap="round" /><path d="M24.8,992.9 L24.2,1007.7 L24.8,1015.7 L30.7,1024.1" fill="none" stroke="#f4cd8a" stroke-width="1.25" stroke-linejoin="round" stroke-linecap="round" /><path d="M24.8,992.9 L31.1,1004.6 L41.3,1019.2 L42.7,1033.2" fill="none" stroke="#f4cd8a" stroke-width="1.25" stroke-linejoin="round" stroke-linecap="round" /><path d="M30.7,1024.1 L32.1,1032.0 L37.4,1025.6 L42.7,1033.2" fill="none" stroke="#f4cd8a" stroke-width="1.25" stroke-linejoin="round" stroke-linecap="round" /><path d="M30.7,1024.1 L27.6,1032.5 L26.0,1038.4 L25.5,1048.5" fill="none" stroke="#f4cd8a" stroke-width="1.25" stroke-linejoin="round" stroke-linecap="round" /><path d="M25.5,1048.5 L37.0,1050.4 L48.9,1053.2 L59.6,1051.9" fill="none" stroke="#f4cd8a" stroke-width="1.25" stroke-linejoin="round" stroke-linecap="round" /><path d="M43.5,708.7 L57.8,711.2 L61.2,704.6 L75.9,703.1" fill="none" stroke="#f4cd8a" stroke-width="1.25" stroke-linejoin="round" stroke-linecap="round" /><path d="M43.5,708.7 L48.0,722.6 L55.0,731.3 L60.8,737.0" fill="none" stroke="#f4cd8a" stroke-width="1.25" stroke-linejoin="round" stroke-linecap="round" /><path d="M43.5,708.7 L52.3,716.7 L66.6,720.7 L73.2,726.8" fill="none" stroke="#f4cd8a" stroke-width="1.25" stroke-linejoin="round" stroke-linecap="round" /><path d="M60.8,737.0 L64.0,735.7 L69.2,726.3 L73.2,726.8" fill="none" stroke="#f4cd8a" stroke-width="1.25" stroke-linejoin="round" stroke-linecap="round" /><path d="M52.9,758.7 L63.9,752.7 L69.3,753.9 L77.6,754.5" fill="none" stroke="#f4cd8a" stroke-width="1.25" stroke-linejoin="round" stroke-linecap="round" /><path d="M52.9,758.7 L52.1,766.5 L53.0,775.8 L54.0,780.6" fill="none" stroke="#f4cd8a" stroke-width="1.25" stroke-linejoin="round" stroke-linecap="round" /><path d="M54.0,780.6 L56.8,777.2 L64.0,777.5 L70.1,775.8" fill="none" stroke="#f4cd8a" stroke-width="1.25" stroke-linejoin="round" stroke-linecap="round" /><path d="M54.0,780.6 L56.0,788.3 L46.3,800.9 L45.4,810.8" fill="none" stroke="#f4cd8a" stroke-width="1.25" stroke-linejoin="round" stroke-linecap="round" /><path d="M54.0,780.6 L65.1,782.9 L74.5,795.3 L83.3,801.3" fill="none" stroke="#f4cd8a" stroke-width="1.25" stroke-linejoin="round" stroke-linecap="round" /><path d="M45.4,810.8 L42.4,816.2 L46.5,831.7 L50.9,838.6" fill="none" stroke="#f4cd8a" stroke-width="1.25" stroke-linejoin="round" stroke-linecap="round" /><path d="M50.9,838.6 L45.5,845.7 L45.8,854.3 L42.8,857.9" fill="none" stroke="#f4cd8a" stroke-width="1.25" stroke-linejoin="round" stroke-linecap="round" /><path d="M42.8,857.9 L57.5,861.6 L65.5,864.4 L81.2,866.7" fill="none" stroke="#f4cd8a" stroke-width="1.25" stroke-linejoin="round" stroke-linecap="round" /><path d="M42.8,857.9 L55.0,869.5 L68.1,887.6 L84.4,898.4" fill="none" stroke="#f4cd8a" stroke-width="1.25" stroke-linejoin="round" stroke-linecap="round" /><path d="M44.3,894.3 L59.7,899.4 L66.7,892.2 L84.4,898.4" fill="none" stroke="#f4cd8a" stroke-width="1.25" stroke-linejoin="round" stroke-linecap="round" /><path d="M44.3,894.3 L50.5,900.6 L49.2,905.0 L51.6,911.7" fill="none" stroke="#f4cd8a" stroke-width="1.25" stroke-linejoin="round" stroke-linecap="round" /><path d="M51.6,911.7 L62.4,912.1 L72.2,915.9 L76.8,913.9" fill="none" stroke="#f4cd8a" stroke-width="1.25" stroke-linejoin="round" stroke-linecap="round" /><path d="M51.6,911.7 L51.6,920.3 L60.4,934.2 L57.6,943.4" fill="none" stroke="#f4cd8a" stroke-width="1.25" stroke-linejoin="round" stroke-linecap="round" /><path d="M51.6,911.7 L62.6,918.3 L74.2,924.1 L84.1,933.5" fill="none" stroke="#f4cd8a" stroke-width="1.25" stroke-linejoin="round" stroke-linecap="round" /><path d="M57.6,943.4 L69.7,937.7 L79.2,937.3 L84.1,933.5" fill="none" stroke="#f4cd8a" stroke-width="1.25" stroke-linejoin="round" stroke-linecap="round" /><path d="M57.6,943.4 L53.7,956.0 L51.7,960.0 L47.8,967.8" fill="none" stroke="#f4cd8a" stroke-width="1.25" stroke-linejoin="round" stroke-linecap="round" /><path d="M47.8,967.8 L57.4,964.7 L64.0,964.9 L78.4,965.4" fill="none" stroke="#f4cd8a" stroke-width="1.25" stroke-linejoin="round" stroke-linecap="round" /><path d="M47.8,967.8 L47.5,970.6 L48.0,979.6 L42.0,988.2" fill="none" stroke="#f4cd8a" stroke-width="1.25" stroke-linejoin="round" stroke-linecap="round" /><path d="M42.0,988.2 L57.0,990.7 L71.6,992.6 L80.1,1001.7" fill="none" stroke="#f4cd8a" stroke-width="1.25" stroke-linejoin="round" stroke-linecap="round" /><path d="M42.0,988.2 L46.1,1005.1 L40.1,1019.7 L42.7,1033.2" fill="none" stroke="#f4cd8a" stroke-width="1.25" stroke-linejoin="round" stroke-linecap="round" /><path d="M42.7,1033.2 L57.6,1031.7 L75.2,1024.7 L86.2,1024.1" fill="none" stroke="#f4cd8a" stroke-width="1.25" stroke-linejoin="round" stroke-linecap="round" /><path d="M42.7,1033.2 L49.0,1043.2 L53.8,1049.3 L59.6,1051.9" fill="none" stroke="#f4cd8a" stroke-width="1.25" stroke-linejoin="round" stroke-linecap="round" /><path d="M59.6,1051.9 L72.0,1049.6 L75.4,1048.5 L82.8,1042.6" fill="none" stroke="#f4cd8a" stroke-width="1.25" stroke-linejoin="round" stroke-linecap="round" /><path d="M75.9,703.1 L72.1,713.3 L75.6,714.2 L73.2,726.8" fill="none" stroke="#f4cd8a" stroke-width="1.25" stroke-linejoin="round" stroke-linecap="round" /><path d="M73.2,726.8 L69.8,735.0 L71.2,749.3 L77.6,754.5" fill="none" stroke="#f4cd8a" stroke-width="1.25" stroke-linejoin="round" stroke-linecap="round" /><path d="M77.6,754.5 L93.6,753.0 L102.4,758.8 L112.6,757.0" fill="none" stroke="#f4cd8a" stroke-width="1.25" stroke-linejoin="round" stroke-linecap="round" /><path d="M77.6,754.5 L71.2,759.1 L74.9,765.0 L70.1,775.8" fill="none" stroke="#f4cd8a" stroke-width="1.25" stroke-linejoin="round" stroke-linecap="round" /><path d="M70.1,775.8 L76.5,782.1 L88.3,788.2 L99.6,790.0" fill="none" stroke="#f4cd8a" stroke-width="1.25" stroke-linejoin="round" stroke-linecap="round" /><path d="M70.1,775.8 L77.8,787.6 L75.7,793.3 L83.3,801.3" fill="none" stroke="#f4cd8a" stroke-width="1.25" stroke-linejoin="round" stroke-linecap="round" /><path d="M70.1,775.8 L88.4,768.0 L99.6,758.9 L112.6,757.0" fill="none" stroke="#f4cd8a" stroke-width="1.25" stroke-linejoin="round" stroke-linecap="round" /><path d="M83.3,801.3 L90.4,797.2 L93.9,791.0 L99.6,790.0" fill="none" stroke="#f4cd8a" stroke-width="1.25" stroke-linejoin="round" stroke-linecap="round" /><path d="M78.5,844.9 L90.9,840.4 L98.8,836.2 L105.2,828.3" fill="none" stroke="#f4cd8a" stroke-width="1.25" stroke-linejoin="round" stroke-linecap="round" /><path d="M78.5,844.9 L79.9,850.2 L81.9,858.7 L81.2,866.7" fill="none" stroke="#f4cd8a" stroke-width="1.25" stroke-linejoin="round" stroke-linecap="round" /><path d="M81.2,866.7 L83.7,858.4 L91.8,854.5 L101.3,855.7" fill="none" stroke="#f4cd8a" stroke-width="1.25" stroke-linejoin="round" stroke-linecap="round" /><path d="M81.2,866.7 L81.1,881.1 L78.8,892.7 L84.4,898.4" fill="none" stroke="#f4cd8a" stroke-width="1.25" stroke-linejoin="round" stroke-linecap="round" /><path d="M81.2,866.7 L90.5,869.6 L90.8,876.5 L99.4,879.8" fill="none" stroke="#f4cd8a" stroke-width="1.25" stroke-linejoin="round" stroke-linecap="round" /><path d="M84.4,898.4 L85.7,894.0 L96.6,890.9 L99.4,879.8" fill="none" stroke="#f4cd8a" stroke-width="1.25" stroke-linejoin="round" stroke-linecap="round" /><path d="M84.4,898.4 L84.6,902.0 L79.5,906.5 L76.8,913.9" fill="none" stroke="#f4cd8a" stroke-width="1.25" stroke-linejoin="round" stroke-linecap="round" /><path d="M76.8,913.9 L86.7,919.8 L97.7,920.7 L108.9,919.3" fill="none" stroke="#f4cd8a" stroke-width="1.25" stroke-linejoin="round" stroke-linecap="round" /><path d="M76.8,913.9 L77.7,922.6 L83.2,925.8 L84.1,933.5" fill="none" stroke="#f4cd8a" stroke-width="1.25" stroke-linejoin="round" stroke-linecap="round" /><path d="M76.8,913.9 L87.8,904.8 L93.9,890.9 L99.4,879.8" fill="none" stroke="#f4cd8a" stroke-width="1.25" stroke-linejoin="round" stroke-linecap="round" /><path d="M84.1,933.5 L85.2,941.4 L99.0,944.9 L101.0,952.0" fill="none" stroke="#f4cd8a" stroke-width="1.25" stroke-linejoin="round" stroke-linecap="round" /><path d="M84.1,933.5 L84.1,944.2 L83.0,954.6 L78.4,965.4" fill="none" stroke="#f4cd8a" stroke-width="1.25" stroke-linejoin="round" stroke-linecap="round" /><path d="M84.1,933.5 L91.1,947.9 L94.3,956.9 L104.5,969.1" fill="none" stroke="#f4cd8a" stroke-width="1.25" stroke-linejoin="round" stroke-linecap="round" /><path d="M78.4,965.4 L90.7,965.2 L94.4,969.9 L104.5,969.1" fill="none" stroke="#f4cd8a" stroke-width="1.25" stroke-linejoin="round" stroke-linecap="round" /><path d="M78.4,965.4 L76.8,974.1 L78.8,993.5 L80.1,1001.7" fill="none" stroke="#f4cd8a" stroke-width="1.25" stroke-linejoin="round" stroke-linecap="round" /><path d="M80.1,1001.7 L93.5,1005.2 L99.7,997.0 L114.5,1000.0" fill="none" stroke="#f4cd8a" stroke-width="1.25" stroke-linejoin="round" stroke-linecap="round" /><path d="M80.1,1001.7 L88.8,1009.8 L101.1,1021.1 L105.3,1028.9" fill="none" stroke="#f4cd8a" stroke-width="1.25" stroke-linejoin="round" stroke-linecap="round" /><path d="M86.2,1024.1 L92.3,1026.3 L98.6,1028.2 L105.3,1028.9" fill="none" stroke="#f4cd8a" stroke-width="1.25" stroke-linejoin="round" stroke-linecap="round" /><path d="M86.2,1024.1 L83.7,1033.6 L81.9,1033.3 L82.8,1042.6" fill="none" stroke="#f4cd8a" stroke-width="1.25" stroke-linejoin="round" stroke-linecap="round" /><path d="M86.2,1024.1 L98.8,1035.5 L101.7,1037.8 L110.8,1047.2" fill="none" stroke="#f4cd8a" stroke-width="1.25" stroke-linejoin="round" stroke-linecap="round" /><path d="M111.9,700.3 L117.6,699.2 L130.3,704.6 L135.4,702.7" fill="none" stroke="#f4cd8a" stroke-width="1.25" stroke-linejoin="round" stroke-linecap="round" /><path d="M111.9,700.3 L113.2,707.0 L118.5,713.4 L124.5,724.3" fill="none" stroke="#f4cd8a" stroke-width="1.25" stroke-linejoin="round" stroke-linecap="round" /><path d="M96.8,729.3 L106.4,724.0 L113.4,723.9 L124.5,724.3" fill="none" stroke="#f4cd8a" stroke-width="1.25" stroke-linejoin="round" stroke-linecap="round" /><path d="M96.8,729.3 L106.4,740.9 L106.6,752.7 L112.6,757.0" fill="none" stroke="#f4cd8a" stroke-width="1.25" stroke-linejoin="round" stroke-linecap="round" /><path d="M96.8,729.3 L111.0,723.1 L124.8,711.7 L135.4,702.7" fill="none" stroke="#f4cd8a" stroke-width="1.25" stroke-linejoin="round" stroke-linecap="round" /><path d="M112.6,757.0 L119.3,757.9 L131.7,752.8 L137.7,746.2" fill="none" stroke="#f4cd8a" stroke-width="1.25" stroke-linejoin="round" stroke-linecap="round" /><path d="M112.6,757.0 L112.5,767.7 L108.5,778.5 L99.6,790.0" fill="none" stroke="#f4cd8a" stroke-width="1.25" stroke-linejoin="round" stroke-linecap="round" /><path d="M99.6,790.0 L108.3,786.9 L119.1,786.3 L123.8,779.3" fill="none" stroke="#f4cd8a" stroke-width="1.25" stroke-linejoin="round" stroke-linecap="round" /><path d="M99.6,790.0 L101.7,796.3 L98.7,798.3 L99.6,808.2" fill="none" stroke="#f4cd8a" stroke-width="1.25" stroke-linejoin="round" stroke-linecap="round" /><path d="M99.6,808.2 L113.8,804.8 L124.8,808.1 L140.1,810.6" fill="none" stroke="#f4cd8a" stroke-width="1.25" stroke-linejoin="round" stroke-linecap="round" /><path d="M99.6,808.2 L100.2,813.5 L102.5,817.3 L105.2,828.3" fill="none" stroke="#f4cd8a" stroke-width="1.25" stroke-linejoin="round" stroke-linecap="round" /><path d="M99.6,808.2 L113.5,814.9 L115.6,820.0 L127.6,826.6" fill="none" stroke="#f4cd8a" stroke-width="1.25" stroke-linejoin="round" stroke-linecap="round" /><path d="M105.2,828.3 L109.4,830.2 L124.5,828.5 L127.6,826.6" fill="none" stroke="#f4cd8a" stroke-width="1.25" stroke-linejoin="round" stroke-linecap="round" /><path d="M101.3,855.7 L116.0,858.8 L122.7,864.0 L139.7,868.9" fill="none" stroke="#f4cd8a" stroke-width="1.25" stroke-linejoin="round" stroke-linecap="round" /><path d="M101.3,855.7 L113.4,841.5 L119.0,833.1 L127.6,826.6" fill="none" stroke="#f4cd8a" stroke-width="1.25" stroke-linejoin="round" stroke-linecap="round" /><path d="M99.4,879.8 L109.2,882.1 L126.6,885.9 L137.0,883.1" fill="none" stroke="#f4cd8a" stroke-width="1.25" stroke-linejoin="round" stroke-linecap="round" /><path d="M99.4,879.8 L98.1,888.4 L101.6,902.4 L108.9,919.3" fill="none" stroke="#f4cd8a" stroke-width="1.25" stroke-linejoin="round" stroke-linecap="round" /><path d="M99.4,879.8 L110.2,885.1 L128.6,896.0 L138.0,906.2" fill="none" stroke="#f4cd8a" stroke-width="1.25" stroke-linejoin="round" stroke-linecap="round" /><path d="M108.9,919.3 L106.3,925.6 L103.5,945.4 L101.0,952.0" fill="none" stroke="#f4cd8a" stroke-width="1.25" stroke-linejoin="round" stroke-linecap="round" /><path d="M101.0,952.0 L109.5,947.8 L119.3,945.7 L126.4,939.4" fill="none" stroke="#f4cd8a" stroke-width="1.25" stroke-linejoin="round" stroke-linecap="round" /><path d="M104.5,969.1 L110.8,976.4 L108.2,993.1 L114.5,1000.0" fill="none" stroke="#f4cd8a" stroke-width="1.25" stroke-linejoin="round" stroke-linecap="round" /><path d="M104.5,969.1 L114.2,955.6 L116.8,953.5 L126.4,939.4" fill="none" stroke="#f4cd8a" stroke-width="1.25" stroke-linejoin="round" stroke-linecap="round" /><path d="M114.5,1000.0 L121.7,998.2 L125.3,999.9 L126.2,1001.7" fill="none" stroke="#f4cd8a" stroke-width="1.25" stroke-linejoin="round" stroke-linecap="round" /><path d="M114.5,1000.0 L113.3,1011.8 L105.5,1021.0 L105.3,1028.9" fill="none" stroke="#f4cd8a" stroke-width="1.25" stroke-linejoin="round" stroke-linecap="round" /><path d="M114.5,1000.0 L119.9,1009.2 L126.9,1012.0 L138.2,1019.4" fill="none" stroke="#f4cd8a" stroke-width="1.25" stroke-linejoin="round" stroke-linecap="round" /><path d="M114.5,1000.0 L124.6,983.6 L131.6,978.6 L142.1,960.7" fill="none" stroke="#f4cd8a" stroke-width="1.25" stroke-linejoin="round" stroke-linecap="round" /><path d="M105.3,1028.9 L116.3,1021.1 L124.9,1018.6 L138.2,1019.4" fill="none" stroke="#f4cd8a" stroke-width="1.25" stroke-linejoin="round" stroke-linecap="round" /><path d="M105.3,1028.9 L103.7,1031.8 L105.4,1043.5 L110.8,1047.2" fill="none" stroke="#f4cd8a" stroke-width="1.25" stroke-linejoin="round" stroke-linecap="round" /><path d="M110.8,1047.2 L113.1,1051.3 L120.6,1050.8 L124.5,1058.1" fill="none" stroke="#f4cd8a" stroke-width="1.25" stroke-linejoin="round" stroke-linecap="round" /><path d="M110.8,1047.2 L121.2,1035.7 L130.8,1025.4 L138.2,1019.4" fill="none" stroke="#f4cd8a" stroke-width="1.25" stroke-linejoin="round" stroke-linecap="round" /><path d="M135.4,702.7 L146.2,700.3 L153.7,710.6 L160.1,709.5" fill="none" stroke="#f4cd8a" stroke-width="1.25" stroke-linejoin="round" stroke-linecap="round" /><path d="M135.4,702.7 L127.0,705.6 L131.4,720.6 L124.5,724.3" fill="none" stroke="#f4cd8a" stroke-width="1.25" stroke-linejoin="round" stroke-linecap="round" /><path d="M124.5,724.3 L132.7,726.7 L131.5,736.0 L137.7,746.2" fill="none" stroke="#f4cd8a" stroke-width="1.25" stroke-linejoin="round" stroke-linecap="round" /><path d="M124.5,724.3 L137.2,731.6 L154.7,745.0 L162.7,759.8" fill="none" stroke="#f4cd8a" stroke-width="1.25" stroke-linejoin="round" stroke-linecap="round" /><path d="M137.7,746.2 L150.2,751.3 L154.3,757.9 L162.7,759.8" fill="none" stroke="#f4cd8a" stroke-width="1.25" stroke-linejoin="round" stroke-linecap="round" /><path d="M137.7,746.2 L132.5,754.0 L131.4,769.5 L123.8,779.3" fill="none" stroke="#f4cd8a" stroke-width="1.25" stroke-linejoin="round" stroke-linecap="round" /><path d="M123.8,779.3 L138.8,779.4 L147.7,787.6 L161.8,789.8" fill="none" stroke="#f4cd8a" stroke-width="1.25" stroke-linejoin="round" stroke-linecap="round" /><path d="M123.8,779.3 L134.2,794.6 L136.1,802.3 L140.1,810.6" fill="none" stroke="#f4cd8a" stroke-width="1.25" stroke-linejoin="round" stroke-linecap="round" /><path d="M140.1,810.6 L136.6,817.5 L129.2,816.7 L127.6,826.6" fill="none" stroke="#f4cd8a" stroke-width="1.25" stroke-linejoin="round" stroke-linecap="round" /><path d="M140.1,810.6 L149.5,819.1 L162.0,822.5 L167.6,831.9" fill="none" stroke="#f4cd8a" stroke-width="1.25" stroke-linejoin="round" stroke-linecap="round" /><path d="M140.1,810.6 L146.5,800.3 L152.1,796.6 L161.8,789.8" fill="none" stroke="#f4cd8a" stroke-width="1.25" stroke-linejoin="round" stroke-linecap="round" /><path d="M127.6,826.6 L137.0,825.1 L154.0,830.4 L167.6,831.9" fill="none" stroke="#f4cd8a" stroke-width="1.25" stroke-linejoin="round" stroke-linecap="round" /><path d="M127.6,826.6 L133.2,841.4 L140.3,859.3 L139.7,868.9" fill="none" stroke="#f4cd8a" stroke-width="1.25" stroke-linejoin="round" stroke-linecap="round" /><path d="M127.6,826.6 L137.1,820.8 L143.9,815.3 L155.4,815.9" fill="none" stroke="#f4cd8a" stroke-width="1.25" stroke-linejoin="round" stroke-linecap="round" /><path d="M139.7,868.9 L144.9,865.0 L144.3,870.6 L150.6,864.0" fill="none" stroke="#f4cd8a" stroke-width="1.25" stroke-linejoin="round" stroke-linecap="round" /><path d="M139.7,868.9 L140.8,871.1 L142.4,880.6 L137.0,883.1" fill="none" stroke="#f4cd8a" stroke-width="1.25" stroke-linejoin="round" stroke-linecap="round" /><path d="M139.7,868.9 L148.4,851.8 L155.4,847.0 L167.6,831.9" fill="none" stroke="#f4cd8a" stroke-width="1.25" stroke-linejoin="round" stroke-linecap="round" /><path d="M137.0,883.1 L142.5,886.6 L158.6,889.8 L162.4,898.2" fill="none" stroke="#f4cd8a" stroke-width="1.25" stroke-linejoin="round" stroke-linecap="round" /><path d="M137.0,883.1 L137.7,886.3 L138.3,894.2 L138.0,906.2" fill="none" stroke="#f4cd8a" stroke-width="1.25" stroke-linejoin="round" stroke-linecap="round" /><path d="M138.0,906.2 L132.2,915.6 L128.3,925.0 L126.4,939.4" fill="none" stroke="#f4cd8a" stroke-width="1.25" stroke-linejoin="round" stroke-linecap="round" /><path d="M126.4,939.4 L136.7,933.8 L155.2,935.4 L165.2,936.4" fill="none" stroke="#f4cd8a" stroke-width="1.25" stroke-linejoin="round" stroke-linecap="round" /><path d="M126.4,939.4 L135.2,951.2 L137.4,949.3 L142.1,960.7" fill="none" stroke="#f4cd8a" stroke-width="1.25" stroke-linejoin="round" stroke-linecap="round" /><path d="M142.1,960.7 L147.1,966.7 L156.0,962.8 L163.3,968.8" fill="none" stroke="#f4cd8a" stroke-width="1.25" stroke-linejoin="round" stroke-linecap="round" /><path d="M142.1,960.7 L143.0,973.2 L155.1,984.0 L154.3,992.5" fill="none" stroke="#f4cd8a" stroke-width="1.25" stroke-linejoin="round" stroke-linecap="round" /><path d="M142.1,960.7 L145.0,949.7 L159.2,949.1 L165.2,936.4" fill="none" stroke="#f4cd8a" stroke-width="1.25" stroke-linejoin="round" stroke-linecap="round" /><path d="M126.2,1001.7 L137.3,1000.4 L140.2,999.6 L154.3,992.5" fill="none" stroke="#f4cd8a" stroke-width="1.25" stroke-linejoin="round" stroke-linecap="round" /><path d="M126.2,1001.7 L129.0,1010.5 L134.7,1014.7 L138.2,1019.4" fill="none" stroke="#f4cd8a" stroke-width="1.25" stroke-linejoin="round" stroke-linecap="round" /><path d="M126.2,1001.7 L137.8,1007.2 L150.1,1022.4 L157.3,1028.7" fill="none" stroke="#f4cd8a" stroke-width="1.25" stroke-linejoin="round" stroke-linecap="round" /><path d="M138.2,1019.4 L149.3,1025.8 L153.1,1024.2 L157.3,1028.7" fill="none" stroke="#f4cd8a" stroke-width="1.25" stroke-linejoin="round" stroke-linecap="round" /><path d="M138.2,1019.4 L138.7,1027.9 L124.5,1046.1 L124.5,1058.1" fill="none" stroke="#f4cd8a" stroke-width="1.25" stroke-linejoin="round" stroke-linecap="round" /><path d="M124.5,1058.1 L131.9,1051.1 L147.5,1049.5 L161.0,1047.4" fill="none" stroke="#f4cd8a" stroke-width="1.25" stroke-linejoin="round" stroke-linecap="round" /><path d="M160.1,709.5 L170.7,713.1 L172.7,709.2 L182.9,706.5" fill="none" stroke="#f4cd8a" stroke-width="1.25" stroke-linejoin="round" stroke-linecap="round" /><path d="M160.1,709.5 L163.5,711.4 L156.6,716.1 L159.2,725.9" fill="none" stroke="#f4cd8a" stroke-width="1.25" stroke-linejoin="round" stroke-linecap="round" /><path d="M159.2,725.9 L163.2,724.4 L171.5,719.6 L181.1,717.3" fill="none" stroke="#f4cd8a" stroke-width="1.25" stroke-linejoin="round" stroke-linecap="round" /><path d="M159.2,725.9 L164.9,734.1 L164.4,744.0 L162.7,759.8" fill="none" stroke="#f4cd8a" stroke-width="1.25" stroke-linejoin="round" stroke-linecap="round" /><path d="M159.2,725.9 L170.1,728.1 L180.5,742.5 L186.0,745.0" fill="none" stroke="#f4cd8a" stroke-width="1.25" stroke-linejoin="round" stroke-linecap="round" /><path d="M159.2,725.9 L169.2,720.9 L179.8,712.9 L182.9,706.5" fill="none" stroke="#f4cd8a" stroke-width="1.25" stroke-linejoin="round" stroke-linecap="round" /><path d="M162.7,759.8 L174.3,752.5 L182.4,748.6 L186.0,745.0" fill="none" stroke="#f4cd8a" stroke-width="1.25" stroke-linejoin="round" stroke-linecap="round" /><path d="M162.7,759.8 L165.8,772.3 L158.9,781.4 L161.8,789.8" fill="none" stroke="#f4cd8a" stroke-width="1.25" stroke-linejoin="round" stroke-linecap="round" /><path d="M161.8,789.8 L168.6,789.8 L171.2,784.2 L177.6,783.1" fill="none" stroke="#f4cd8a" stroke-width="1.25" stroke-linejoin="round" stroke-linecap="round" /><path d="M161.8,789.8 L160.9,796.8 L160.4,802.7 L155.4,815.9" fill="none" stroke="#f4cd8a" stroke-width="1.25" stroke-linejoin="round" stroke-linecap="round" /><path d="M161.8,789.8 L173.5,778.1 L176.5,755.9 L186.0,745.0" fill="none" stroke="#f4cd8a" stroke-width="1.25" stroke-linejoin="round" stroke-linecap="round" /><path d="M155.4,815.9 L163.7,818.4 L180.9,806.4 L189.1,808.8" fill="none" stroke="#f4cd8a" stroke-width="1.25" stroke-linejoin="round" stroke-linecap="round" /><path d="M155.4,815.9 L160.1,820.8 L164.0,830.0 L167.6,831.9" fill="none" stroke="#f4cd8a" stroke-width="1.25" stroke-linejoin="round" stroke-linecap="round" /><path d="M155.4,815.9 L167.5,804.6 L169.9,790.6 L177.6,783.1" fill="none" stroke="#f4cd8a" stroke-width="1.25" stroke-linejoin="round" stroke-linecap="round" /><path d="M167.6,831.9 L168.0,831.2 L175.2,832.4 L178.4,836.2" fill="none" stroke="#f4cd8a" stroke-width="1.25" stroke-linejoin="round" stroke-linecap="round" /><path d="M167.6,831.9 L158.0,838.3 L160.3,852.7 L150.6,864.0" fill="none" stroke="#f4cd8a" stroke-width="1.25" stroke-linejoin="round" stroke-linecap="round" /><path d="M167.6,831.9 L179.6,819.4 L184.8,812.0 L189.1,808.8" fill="none" stroke="#f4cd8a" stroke-width="1.25" stroke-linejoin="round" stroke-linecap="round" /><path d="M150.6,864.0 L162.7,861.6 L177.2,860.8 L187.5,858.1" fill="none" stroke="#f4cd8a" stroke-width="1.25" stroke-linejoin="round" stroke-linecap="round" /><path d="M150.6,864.0 L150.2,873.3 L156.2,886.6 L162.4,898.2" fill="none" stroke="#f4cd8a" stroke-width="1.25" stroke-linejoin="round" stroke-linecap="round" /><path d="M150.6,864.0 L156.1,850.4 L164.7,847.0 L178.4,836.2" fill="none" stroke="#f4cd8a" stroke-width="1.25" stroke-linejoin="round" stroke-linecap="round" /><path d="M162.4,898.2 L159.0,906.7 L161.5,910.9 L161.2,920.5" fill="none" stroke="#f4cd8a" stroke-width="1.25" stroke-linejoin="round" stroke-linecap="round" /><path d="M161.2,920.5 L165.1,915.5 L182.4,915.5 L186.7,913.3" fill="none" stroke="#f4cd8a" stroke-width="1.25" stroke-linejoin="round" stroke-linecap="round" /><path d="M161.2,920.5 L162.4,923.4 L162.4,931.2 L165.2,936.4" fill="none" stroke="#f4cd8a" stroke-width="1.25" stroke-linejoin="round" stroke-linecap="round" /><path d="M165.2,936.4 L171.9,935.9 L180.7,943.4 L188.7,946.5" fill="none" stroke="#f4cd8a" stroke-width="1.25" stroke-linejoin="round" stroke-linecap="round" /><path d="M163.3,968.8 L167.7,973.4 L172.3,969.8 L182.5,972.1" fill="none" stroke="#f4cd8a" stroke-width="1.25" stroke-linejoin="round" stroke-linecap="round" /><path d="M163.3,968.8 L163.5,979.1 L161.6,981.4 L154.3,992.5" fill="none" stroke="#f4cd8a" stroke-width="1.25" stroke-linejoin="round" stroke-linecap="round" /><path d="M154.3,992.5 L163.0,998.7 L172.6,1003.2 L182.2,1001.9" fill="none" stroke="#f4cd8a" stroke-width="1.25" stroke-linejoin="round" stroke-linecap="round" /><path d="M157.3,1028.7 L169.2,1031.3 L172.1,1025.5 L181.1,1025.9" fill="none" stroke="#f4cd8a" stroke-width="1.25" stroke-linejoin="round" stroke-linecap="round" /><path d="M157.3,1028.7 L160.2,1036.6 L161.0,1041.4 L161.0,1047.4" fill="none" stroke="#f4cd8a" stroke-width="1.25" stroke-linejoin="round" stroke-linecap="round" /><path d="M157.3,1028.7 L165.3,1021.7 L176.2,1014.0 L182.2,1001.9" fill="none" stroke="#f4cd8a" stroke-width="1.25" stroke-linejoin="round" stroke-linecap="round" /><path d="M161.0,1047.4 L175.5,1055.3 L182.7,1057.0 L191.7,1057.0" fill="none" stroke="#f4cd8a" stroke-width="1.25" stroke-linejoin="round" stroke-linecap="round" /><path d="M161.0,1047.4 L164.6,1037.4 L174.7,1037.0 L181.1,1025.9" fill="none" stroke="#f4cd8a" stroke-width="1.25" stroke-linejoin="round" stroke-linecap="round" /><path d="M182.9,706.5 L195.5,702.7 L204.1,698.6 L207.5,691.9" fill="none" stroke="#f4cd8a" stroke-width="1.25" stroke-linejoin="round" stroke-linecap="round" /><path d="M182.9,706.5 L179.1,710.2 L185.4,714.0 L181.1,717.3" fill="none" stroke="#f4cd8a" stroke-width="1.25" stroke-linejoin="round" stroke-linecap="round" /><path d="M181.1,717.3 L190.4,717.8 L204.8,726.7 L217.0,724.7" fill="none" stroke="#f4cd8a" stroke-width="1.25" stroke-linejoin="round" stroke-linecap="round" /><path d="M181.1,717.3 L180.0,728.9 L188.8,733.1 L186.0,745.0" fill="none" stroke="#f4cd8a" stroke-width="1.25" stroke-linejoin="round" stroke-linecap="round" /><path d="M186.0,745.0 L194.1,750.6 L207.8,752.4 L222.4,760.1" fill="none" stroke="#f4cd8a" stroke-width="1.25" stroke-linejoin="round" stroke-linecap="round" /><path d="M177.6,783.1 L192.4,785.6 L207.0,775.7 L214.6,777.8" fill="none" stroke="#f4cd8a" stroke-width="1.25" stroke-linejoin="round" stroke-linecap="round" /><path d="M177.6,783.1 L176.7,787.9 L182.8,796.6 L189.1,808.8" fill="none" stroke="#f4cd8a" stroke-width="1.25" stroke-linejoin="round" stroke-linecap="round" /><path d="M177.6,783.1 L185.9,791.6 L202.3,793.8 L210.4,799.0" fill="none" stroke="#f4cd8a" stroke-width="1.25" stroke-linejoin="round" stroke-linecap="round" /><path d="M189.1,808.8 L197.1,801.3 L202.9,799.3 L210.4,799.0" fill="none" stroke="#f4cd8a" stroke-width="1.25" stroke-linejoin="round" stroke-linecap="round" /><path d="M189.1,808.8 L190.3,814.9 L180.2,827.9 L178.4,836.2" fill="none" stroke="#f4cd8a" stroke-width="1.25" stroke-linejoin="round" stroke-linecap="round" /><path d="M178.4,836.2 L187.7,842.6 L192.4,844.3 L206.2,842.4" fill="none" stroke="#f4cd8a" stroke-width="1.25" stroke-linejoin="round" stroke-linecap="round" /><path d="M178.4,836.2 L185.6,842.4 L185.9,846.0 L187.5,858.1" fill="none" stroke="#f4cd8a" stroke-width="1.25" stroke-linejoin="round" stroke-linecap="round" /><path d="M187.5,858.1 L195.1,860.9 L203.1,855.8 L210.0,852.2" fill="none" stroke="#f4cd8a" stroke-width="1.25" stroke-linejoin="round" stroke-linecap="round" /><path d="M187.5,858.1 L183.0,871.0 L182.3,869.3 L181.5,882.1" fill="none" stroke="#f4cd8a" stroke-width="1.25" stroke-linejoin="round" stroke-linecap="round" /><path d="M181.5,882.1 L194.8,879.3 L214.0,885.3 L223.6,886.6" fill="none" stroke="#f4cd8a" stroke-width="1.25" stroke-linejoin="round" stroke-linecap="round" /><path d="M181.5,882.1 L183.7,893.4 L183.8,906.0 L186.7,913.3" fill="none" stroke="#f4cd8a" stroke-width="1.25" stroke-linejoin="round" stroke-linecap="round" /><path d="M186.7,913.3 L199.5,910.5 L210.6,919.3 L219.5,915.1" fill="none" stroke="#f4cd8a" stroke-width="1.25" stroke-linejoin="round" stroke-linecap="round" /><path d="M186.7,913.3 L196.7,915.4 L212.8,931.4 L223.4,934.6" fill="none" stroke="#f4cd8a" stroke-width="1.25" stroke-linejoin="round" stroke-linecap="round" /><path d="M188.7,946.5 L200.7,944.8 L212.3,941.6 L223.4,934.6" fill="none" stroke="#f4cd8a" stroke-width="1.25" stroke-linejoin="round" stroke-linecap="round" /><path d="M188.7,946.5 L186.4,956.3 L180.3,964.2 L182.5,972.1" fill="none" stroke="#f4cd8a" stroke-width="1.25" stroke-linejoin="round" stroke-linecap="round" /><path d="M188.7,946.5 L201.3,938.2 L213.1,930.2 L219.5,915.1" fill="none" stroke="#f4cd8a" stroke-width="1.25" stroke-linejoin="round" stroke-linecap="round" /><path d="M182.5,972.1 L193.8,972.2 L202.6,973.7 L213.5,972.9" fill="none" stroke="#f4cd8a" stroke-width="1.25" stroke-linejoin="round" stroke-linecap="round" /><path d="M182.5,972.1 L185.4,982.5 L181.6,992.1 L182.2,1001.9" fill="none" stroke="#f4cd8a" stroke-width="1.25" stroke-linejoin="round" stroke-linecap="round" /><path d="M182.2,1001.9 L179.2,1004.9 L177.7,1013.7 L181.1,1025.9" fill="none" stroke="#f4cd8a" stroke-width="1.25" stroke-linejoin="round" stroke-linecap="round" /><path d="M182.2,1001.9 L192.3,994.8 L202.4,986.3 L213.5,972.9" fill="none" stroke="#f4cd8a" stroke-width="1.25" stroke-linejoin="round" stroke-linecap="round" /><path d="M181.1,1025.9 L190.8,1024.1 L197.2,1027.8 L210.8,1027.6" fill="none" stroke="#f4cd8a" stroke-width="1.25" stroke-linejoin="round" stroke-linecap="round" /><path d="M181.1,1025.9 L181.1,1034.2 L190.5,1051.4 L191.7,1057.0" fill="none" stroke="#f4cd8a" stroke-width="1.25" stroke-linejoin="round" stroke-linecap="round" /><path d="M181.1,1025.9 L186.7,1036.1 L198.2,1040.0 L205.6,1042.6" fill="none" stroke="#f4cd8a" stroke-width="1.25" stroke-linejoin="round" stroke-linecap="round" /><path d="M191.7,1057.0 L193.8,1057.0 L204.9,1042.4 L205.6,1042.6" fill="none" stroke="#f4cd8a" stroke-width="1.25" stroke-linejoin="round" stroke-linecap="round" /><path d="M207.5,691.9 L206.3,706.8 L215.3,717.0 L217.0,724.7" fill="none" stroke="#f4cd8a" stroke-width="1.25" stroke-linejoin="round" stroke-linecap="round" /><path d="M207.5,691.9 L218.7,682.4 L236.7,683.9 L246.5,673.1" fill="none" stroke="#f4cd8a" stroke-width="1.25" stroke-linejoin="round" stroke-linecap="round" /><path d="M217.0,724.7 L227.1,728.1 L234.1,721.3 L242.3,720.4" fill="none" stroke="#f4cd8a" stroke-width="1.25" stroke-linejoin="round" stroke-linecap="round" /><path d="M217.0,724.7 L223.7,732.8 L217.5,751.8 L222.4,760.1" fill="none" stroke="#f4cd8a" stroke-width="1.25" stroke-linejoin="round" stroke-linecap="round" /><path d="M217.0,724.7 L219.6,732.0 L225.6,737.5 L233.9,745.6" fill="none" stroke="#f4cd8a" stroke-width="1.25" stroke-linejoin="round" stroke-linecap="round" /><path d="M217.0,724.7 L228.6,713.1 L234.7,706.1 L246.6,702.7" fill="none" stroke="#f4cd8a" stroke-width="1.25" stroke-linejoin="round" stroke-linecap="round" /><path d="M222.4,760.1 L223.4,755.8 L225.4,751.1 L233.9,745.6" fill="none" stroke="#f4cd8a" stroke-width="1.25" stroke-linejoin="round" stroke-linecap="round" /><path d="M222.4,760.1 L223.9,763.0 L215.2,775.6 L214.6,777.8" fill="none" stroke="#f4cd8a" stroke-width="1.25" stroke-linejoin="round" stroke-linecap="round" /><path d="M222.4,760.1 L228.1,765.5 L231.8,767.9 L239.6,776.8" fill="none" stroke="#f4cd8a" stroke-width="1.25" stroke-linejoin="round" stroke-linecap="round" /><path d="M214.6,777.8 L218.1,775.3 L230.1,774.7 L239.6,776.8" fill="none" stroke="#f4cd8a" stroke-width="1.25" stroke-linejoin="round" stroke-linecap="round" /><path d="M214.6,777.8 L212.4,786.0 L212.7,794.1 L210.4,799.0" fill="none" stroke="#f4cd8a" stroke-width="1.25" stroke-linejoin="round" stroke-linecap="round" /><path d="M210.4,799.0 L224.2,794.8 L240.2,799.3 L250.1,799.0" fill="none" stroke="#f4cd8a" stroke-width="1.25" stroke-linejoin="round" stroke-linecap="round" /><path d="M210.4,799.0 L211.4,813.5 L212.1,827.1 L206.2,842.4" fill="none" stroke="#f4cd8a" stroke-width="1.25" stroke-linejoin="round" stroke-linecap="round" /><path d="M206.2,842.4 L206.9,845.0 L211.1,852.9 L210.0,852.2" fill="none" stroke="#f4cd8a" stroke-width="1.25" stroke-linejoin="round" stroke-linecap="round" /><path d="M210.0,852.2 L218.2,855.4 L223.2,861.9 L233.1,870.5" fill="none" stroke="#f4cd8a" stroke-width="1.25" stroke-linejoin="round" stroke-linecap="round" /><path d="M210.0,852.2 L215.6,862.1 L230.1,879.7 L235.4,890.9" fill="none" stroke="#f4cd8a" stroke-width="1.25" stroke-linejoin="round" stroke-linecap="round" /><path d="M223.6,886.6 L229.3,890.5 L232.9,891.6 L235.4,890.9" fill="none" stroke="#f4cd8a" stroke-width="1.25" stroke-linejoin="round" stroke-linecap="round" /><path d="M223.6,886.6 L217.5,899.0 L224.6,902.3 L219.5,915.1" fill="none" stroke="#f4cd8a" stroke-width="1.25" stroke-linejoin="round" stroke-linecap="round" /><path d="M219.5,915.1 L228.5,910.2 L227.1,903.1 L235.4,890.9" fill="none" stroke="#f4cd8a" stroke-width="1.25" stroke-linejoin="round" stroke-linecap="round" /><path d="M223.4,934.6 L226.5,930.8 L233.0,919.3 L242.7,914.0" fill="none" stroke="#f4cd8a" stroke-width="1.25" stroke-linejoin="round" stroke-linecap="round" /><path d="M204.5,1005.3 L222.3,1006.0 L228.6,1001.4 L243.0,1003.4" fill="none" stroke="#f4cd8a" stroke-width="1.25" stroke-linejoin="round" stroke-linecap="round" /><path d="M204.5,1005.3 L207.7,1014.9 L205.9,1022.6 L210.8,1027.6" fill="none" stroke="#f4cd8a" stroke-width="1.25" stroke-linejoin="round" stroke-linecap="round" /><path d="M210.8,1027.6 L217.1,1021.0 L225.6,1025.8 L232.5,1022.5" fill="none" stroke="#f4cd8a" stroke-width="1.25" stroke-linejoin="round" stroke-linecap="round" /><path d="M205.6,1042.6 L220.0,1047.4 L231.9,1058.4 L238.1,1059.6" fill="none" stroke="#f4cd8a" stroke-width="1.25" stroke-linejoin="round" stroke-linecap="round" /><path d="M205.6,1042.6 L210.1,1031.4 L225.3,1029.1 L232.5,1022.5" fill="none" stroke="#f4cd8a" stroke-width="1.25" stroke-linejoin="round" stroke-linecap="round" /><path d="M232.7,597.8 L243.5,594.8 L253.8,586.9 L270.4,585.9" fill="none" stroke="#f4cd8a" stroke-width="1.25" stroke-linejoin="round" stroke-linecap="round" /><path d="M232.7,597.8 L235.7,603.8 L245.6,622.3 L249.8,627.3" fill="none" stroke="#f4cd8a" stroke-width="1.25" stroke-linejoin="round" stroke-linecap="round" /><path d="M249.8,627.3 L242.2,627.4 L245.2,634.6 L241.6,637.8" fill="none" stroke="#f4cd8a" stroke-width="1.25" stroke-linejoin="round" stroke-linecap="round" /><path d="M249.8,627.3 L258.0,609.2 L266.1,595.6 L270.4,585.9" fill="none" stroke="#f4cd8a" stroke-width="1.25" stroke-linejoin="round" stroke-linecap="round" /><path d="M241.6,637.8 L253.2,642.5 L262.4,640.4 L268.3,637.4" fill="none" stroke="#f4cd8a" stroke-width="1.25" stroke-linejoin="round" stroke-linecap="round" /><path d="M241.6,637.8 L244.6,650.0 L244.8,662.3 L246.5,673.1" fill="none" stroke="#f4cd8a" stroke-width="1.25" stroke-linejoin="round" stroke-linecap="round" /><path d="M246.5,673.1 L252.8,677.9 L260.3,676.2 L260.8,673.2" fill="none" stroke="#f4cd8a" stroke-width="1.25" stroke-linejoin="round" stroke-linecap="round" /><path d="M246.5,673.1 L246.6,683.0 L249.5,696.9 L246.6,702.7" fill="none" stroke="#f4cd8a" stroke-width="1.25" stroke-linejoin="round" stroke-linecap="round" /><path d="M246.5,673.1 L249.1,683.9 L266.1,685.6 L268.8,694.3" fill="none" stroke="#f4cd8a" stroke-width="1.25" stroke-linejoin="round" stroke-linecap="round" /><path d="M246.6,702.7 L252.9,701.2 L263.3,701.1 L268.8,694.3" fill="none" stroke="#f4cd8a" stroke-width="1.25" stroke-linejoin="round" stroke-linecap="round" /><path d="M246.6,702.7 L245.2,708.1 L248.6,714.7 L242.3,720.4" fill="none" stroke="#f4cd8a" stroke-width="1.25" stroke-linejoin="round" stroke-linecap="round" /><path d="M242.3,720.4 L254.2,717.5 L260.5,723.6 L269.7,723.2" fill="none" stroke="#f4cd8a" stroke-width="1.25" stroke-linejoin="round" stroke-linecap="round" /><path d="M242.3,720.4 L240.3,730.7 L235.2,737.6 L233.9,745.6" fill="none" stroke="#f4cd8a" stroke-width="1.25" stroke-linejoin="round" stroke-linecap="round" /><path d="M242.3,720.4 L248.7,716.1 L261.3,703.4 L268.8,694.3" fill="none" stroke="#f4cd8a" stroke-width="1.25" stroke-linejoin="round" stroke-linecap="round" /><path d="M239.6,776.8 L249.6,773.5 L267.3,774.7 L274.8,780.0" fill="none" stroke="#f4cd8a" stroke-width="1.25" stroke-linejoin="round" stroke-linecap="round" /><path d="M239.6,776.8 L246.6,782.3 L250.7,786.8 L250.1,799.0" fill="none" stroke="#f4cd8a" stroke-width="1.25" stroke-linejoin="round" stroke-linecap="round" /><path d="M239.6,776.8 L246.4,787.1 L257.1,798.8 L261.5,803.8" fill="none" stroke="#f4cd8a" stroke-width="1.25" stroke-linejoin="round" stroke-linecap="round" /><path d="M250.1,799.0 L258.8,796.1 L257.3,800.7 L261.5,803.8" fill="none" stroke="#f4cd8a" stroke-width="1.25" stroke-linejoin="round" stroke-linecap="round" /><path d="M250.1,799.0 L245.8,813.4 L252.2,816.4 L246.2,827.4" fill="none" stroke="#f4cd8a" stroke-width="1.25" stroke-linejoin="round" stroke-linecap="round" /><path d="M246.2,827.4 L255.3,824.3 L260.2,829.2 L270.6,826.9" fill="none" stroke="#f4cd8a" stroke-width="1.25" stroke-linejoin="round" stroke-linecap="round" /><path d="M246.2,827.4 L240.3,836.8 L235.7,854.1 L233.1,870.5" fill="none" stroke="#f4cd8a" stroke-width="1.25" stroke-linejoin="round" stroke-linecap="round" /><path d="M246.2,827.4 L252.2,836.1 L262.0,851.1 L276.2,856.4" fill="none" stroke="#f4cd8a" stroke-width="1.25" stroke-linejoin="round" stroke-linecap="round" /><path d="M233.1,870.5 L243.1,868.9 L258.7,856.9 L276.2,856.4" fill="none" stroke="#f4cd8a" stroke-width="1.25" stroke-linejoin="round" stroke-linecap="round" /><path d="M233.1,870.5 L238.0,881.5 L234.3,884.9 L235.4,890.9" fill="none" stroke="#f4cd8a" stroke-width="1.25" stroke-linejoin="round" stroke-linecap="round" /><path d="M233.1,870.5 L248.1,876.3 L252.6,880.5 L266.2,880.5" fill="none" stroke="#f4cd8a" stroke-width="1.25" stroke-linejoin="round" stroke-linecap="round" /><path d="M233.1,870.5 L245.4,853.8 L258.7,838.9 L270.6,826.9" fill="none" stroke="#f4cd8a" stroke-width="1.25" stroke-linejoin="round" stroke-linecap="round" /><path d="M235.4,890.9 L243.2,882.6 L252.1,886.8 L266.2,880.5" fill="none" stroke="#f4cd8a" stroke-width="1.25" stroke-linejoin="round" stroke-linecap="round" /><path d="M235.4,890.9 L238.0,900.2 L237.8,903.2 L242.7,914.0" fill="none" stroke="#f4cd8a" stroke-width="1.25" stroke-linejoin="round" stroke-linecap="round" /><path d="M242.7,914.0 L250.4,918.8 L256.5,926.0 L267.1,925.2" fill="none" stroke="#f4cd8a" stroke-width="1.25" stroke-linejoin="round" stroke-linecap="round" /><path d="M242.7,914.0 L244.2,920.0 L240.4,930.6 L238.0,935.8" fill="none" stroke="#f4cd8a" stroke-width="1.25" stroke-linejoin="round" stroke-linecap="round" /><path d="M238.0,935.8 L248.8,934.2 L254.0,932.7 L261.7,936.6" fill="none" stroke="#f4cd8a" stroke-width="1.25" stroke-linejoin="round" stroke-linecap="round" /><path d="M238.0,935.8 L244.2,941.7 L239.5,957.3 L244.9,967.4" fill="none" stroke="#f4cd8a" stroke-width="1.25" stroke-linejoin="round" stroke-linecap="round" /><path d="M244.9,967.4 L255.1,970.3 L257.5,971.5 L268.9,972.8" fill="none" stroke="#f4cd8a" stroke-width="1.25" stroke-linejoin="round" stroke-linecap="round" /><path d="M244.9,967.4 L239.3,979.5 L248.4,991.1 L243.0,1003.4" fill="none" stroke="#f4cd8a" stroke-width="1.25" stroke-linejoin="round" stroke-linecap="round" /><path d="M243.0,1003.4 L249.5,1004.3 L256.4,993.4 L260.9,991.4" fill="none" stroke="#f4cd8a" stroke-width="1.25" stroke-linejoin="round" stroke-linecap="round" /><path d="M232.5,1022.5 L234.0,1035.2 L234.4,1050.8 L238.1,1059.6" fill="none" stroke="#f4cd8a" stroke-width="1.25" stroke-linejoin="round" stroke-linecap="round" /><path d="M232.5,1022.5 L246.1,1031.7 L249.3,1045.2 L258.6,1054.9" fill="none" stroke="#f4cd8a" stroke-width="1.25" stroke-linejoin="round" stroke-linecap="round" /><path d="M238.1,1059.6 L240.4,1061.8 L247.8,1060.2 L258.6,1054.9" fill="none" stroke="#f4cd8a" stroke-width="1.25" stroke-linejoin="round" stroke-linecap="round" /><path d="M270.4,585.9 L266.2,594.4 L263.9,604.0 L267.2,609.3" fill="none" stroke="#f4cd8a" stroke-width="1.25" stroke-linejoin="round" stroke-linecap="round" /><path d="M267.2,609.3 L278.2,606.5 L292.1,613.9 L302.1,613.3" fill="none" stroke="#f4cd8a" stroke-width="1.25" stroke-linejoin="round" stroke-linecap="round" /><path d="M267.2,609.3 L268.7,622.4 L264.7,632.1 L268.3,637.4" fill="none" stroke="#f4cd8a" stroke-width="1.25" stroke-linejoin="round" stroke-linecap="round" /><path d="M267.2,609.3 L274.7,608.1 L287.6,605.4 L302.4,598.1" fill="none" stroke="#f4cd8a" stroke-width="1.25" stroke-linejoin="round" stroke-linecap="round" /><path d="M268.3,637.4 L271.8,644.1 L281.8,640.8 L291.2,648.0" fill="none" stroke="#f4cd8a" stroke-width="1.25" stroke-linejoin="round" stroke-linecap="round" /><path d="M268.3,637.4 L263.8,648.9 L263.2,662.1 L260.8,673.2" fill="none" stroke="#f4cd8a" stroke-width="1.25" stroke-linejoin="round" stroke-linecap="round" /><path d="M268.3,637.4 L273.0,654.0 L286.9,665.0 L297.3,675.5" fill="none" stroke="#f4cd8a" stroke-width="1.25" stroke-linejoin="round" stroke-linecap="round" /><path d="M260.8,673.2 L275.4,671.2 L282.2,674.9 L297.3,675.5" fill="none" stroke="#f4cd8a" stroke-width="1.25" stroke-linejoin="round" stroke-linecap="round" /><path d="M268.8,694.3 L275.8,693.0 L284.8,699.5 L296.1,694.7" fill="none" stroke="#f4cd8a" stroke-width="1.25" stroke-linejoin="round" stroke-linecap="round" /><path d="M268.8,694.3 L268.7,699.8 L272.8,709.4 L269.7,723.2" fill="none" stroke="#f4cd8a" stroke-width="1.25" stroke-linejoin="round" stroke-linecap="round" /><path d="M269.7,723.2 L271.8,720.3 L287.6,718.8 L289.8,718.7" fill="none" stroke="#f4cd8a" stroke-width="1.25" stroke-linejoin="round" stroke-linecap="round" /><path d="M269.7,723.2 L272.9,727.8 L273.8,742.4 L272.1,745.0" fill="none" stroke="#f4cd8a" stroke-width="1.25" stroke-linejoin="round" stroke-linecap="round" /><path d="M269.7,723.2 L281.3,716.6 L290.2,705.0 L296.1,694.7" fill="none" stroke="#f4cd8a" stroke-width="1.25" stroke-linejoin="round" stroke-linecap="round" /><path d="M272.1,745.0 L278.5,749.4 L281.3,754.8 L286.1,755.6" fill="none" stroke="#f4cd8a" stroke-width="1.25" stroke-linejoin="round" stroke-linecap="round" /><path d="M272.1,745.0 L271.7,758.0 L277.9,773.2 L274.8,780.0" fill="none" stroke="#f4cd8a" stroke-width="1.25" stroke-linejoin="round" stroke-linecap="round" /><path d="M274.8,780.0 L279.0,782.4 L278.6,784.3 L286.7,788.5" fill="none" stroke="#f4cd8a" stroke-width="1.25" stroke-linejoin="round" stroke-linecap="round" /><path d="M261.5,803.8 L268.7,816.3 L262.6,820.1 L270.6,826.9" fill="none" stroke="#f4cd8a" stroke-width="1.25" stroke-linejoin="round" stroke-linecap="round" /><path d="M270.6,826.9 L278.3,834.2 L293.7,834.9 L304.3,837.5" fill="none" stroke="#f4cd8a" stroke-width="1.25" stroke-linejoin="round" stroke-linecap="round" /><path d="M270.6,826.9 L276.4,836.9 L274.8,846.1 L276.2,856.4" fill="none" stroke="#f4cd8a" stroke-width="1.25" stroke-linejoin="round" stroke-linecap="round" /><path d="M276.2,856.4 L279.1,853.4 L283.6,854.0 L285.1,859.7" fill="none" stroke="#f4cd8a" stroke-width="1.25" stroke-linejoin="round" stroke-linecap="round" /><path d="M276.2,856.4 L270.0,863.4 L266.8,869.7 L266.2,880.5" fill="none" stroke="#f4cd8a" stroke-width="1.25" stroke-linejoin="round" stroke-linecap="round" /><path d="M276.2,856.4 L283.1,852.3 L291.0,847.3 L304.3,837.5" fill="none" stroke="#f4cd8a" stroke-width="1.25" stroke-linejoin="round" stroke-linecap="round" /><path d="M266.2,880.5 L272.0,884.8 L282.3,882.3 L292.2,885.2" fill="none" stroke="#f4cd8a" stroke-width="1.25" stroke-linejoin="round" stroke-linecap="round" /><path d="M266.2,880.5 L263.3,899.8 L266.8,909.7 L267.1,925.2" fill="none" stroke="#f4cd8a" stroke-width="1.25" stroke-linejoin="round" stroke-linecap="round" /><path d="M266.2,880.5 L269.0,877.1 L280.1,864.8 L285.1,859.7" fill="none" stroke="#f4cd8a" stroke-width="1.25" stroke-linejoin="round" stroke-linecap="round" /><path d="M267.1,925.2 L264.8,931.9 L267.1,930.6 L261.7,936.6" fill="none" stroke="#f4cd8a" stroke-width="1.25" stroke-linejoin="round" stroke-linecap="round" /><path d="M267.1,925.2 L273.2,912.0 L284.5,898.9 L292.2,885.2" fill="none" stroke="#f4cd8a" stroke-width="1.25" stroke-linejoin="round" stroke-linecap="round" /><path d="M261.7,936.6 L272.4,935.9 L276.8,941.9 L285.3,942.0" fill="none" stroke="#f4cd8a" stroke-width="1.25" stroke-linejoin="round" stroke-linecap="round" /><path d="M268.9,972.8 L275.2,970.2 L290.5,964.7 L294.6,964.6" fill="none" stroke="#f4cd8a" stroke-width="1.25" stroke-linejoin="round" stroke-linecap="round" /><path d="M260.9,991.4 L271.2,996.3 L292.7,999.1 L303.5,1004.7" fill="none" stroke="#f4cd8a" stroke-width="1.25" stroke-linejoin="round" stroke-linecap="round" /><path d="M260.9,991.4 L267.2,997.1 L267.6,1012.3 L270.1,1018.8" fill="none" stroke="#f4cd8a" stroke-width="1.25" stroke-linejoin="round" stroke-linecap="round" /><path d="M270.1,1018.8 L276.8,1024.2 L289.6,1029.3 L295.0,1030.0" fill="none" stroke="#f4cd8a" stroke-width="1.25" stroke-linejoin="round" stroke-linecap="round" /><path d="M270.1,1018.8 L262.5,1028.5 L264.1,1044.2 L258.6,1054.9" fill="none" stroke="#f4cd8a" stroke-width="1.25" stroke-linejoin="round" stroke-linecap="round" /><path d="M258.6,1054.9 L265.5,1050.8 L281.3,1053.9 L292.1,1056.1" fill="none" stroke="#f4cd8a" stroke-width="1.25" stroke-linejoin="round" stroke-linecap="round" /><path d="M258.6,1054.9 L274.8,1042.3 L281.3,1041.1 L295.0,1030.0" fill="none" stroke="#f4cd8a" stroke-width="1.25" stroke-linejoin="round" stroke-linecap="round" /><path d="M302.4,598.1 L308.0,599.7 L318.6,595.3 L327.6,589.0" fill="none" stroke="#f4cd8a" stroke-width="1.25" stroke-linejoin="round" stroke-linecap="round" /><path d="M302.4,598.1 L303.8,607.7 L297.8,608.9 L302.1,613.3" fill="none" stroke="#f4cd8a" stroke-width="1.25" stroke-linejoin="round" stroke-linecap="round" /><path d="M302.1,613.3 L296.1,621.2 L295.4,633.1 L291.2,648.0" fill="none" stroke="#f4cd8a" stroke-width="1.25" stroke-linejoin="round" stroke-linecap="round" /><path d="M291.2,648.0 L296.3,648.5 L307.4,649.7 L315.5,644.4" fill="none" stroke="#f4cd8a" stroke-width="1.25" stroke-linejoin="round" stroke-linecap="round" /><path d="M291.2,648.0 L295.8,656.3 L300.2,670.5 L297.3,675.5" fill="none" stroke="#f4cd8a" stroke-width="1.25" stroke-linejoin="round" stroke-linecap="round" /><path d="M291.2,648.0 L297.6,657.5 L306.3,668.5 L314.3,677.4" fill="none" stroke="#f4cd8a" stroke-width="1.25" stroke-linejoin="round" stroke-linecap="round" /><path d="M297.3,675.5 L304.5,679.4 L307.7,674.4 L314.3,677.4" fill="none" stroke="#f4cd8a" stroke-width="1.25" stroke-linejoin="round" stroke-linecap="round" /><path d="M297.3,675.5 L298.0,678.1 L293.6,686.3 L296.1,694.7" fill="none" stroke="#f4cd8a" stroke-width="1.25" stroke-linejoin="round" stroke-linecap="round" /><path d="M296.1,694.7 L299.5,695.0 L305.6,703.2 L317.0,700.0" fill="none" stroke="#f4cd8a" stroke-width="1.25" stroke-linejoin="round" stroke-linecap="round" /><path d="M296.1,694.7 L297.3,700.1 L289.6,707.1 L289.8,718.7" fill="none" stroke="#f4cd8a" stroke-width="1.25" stroke-linejoin="round" stroke-linecap="round" /><path d="M289.8,718.7 L300.8,718.4 L313.1,728.2 L328.2,729.0" fill="none" stroke="#f4cd8a" stroke-width="1.25" stroke-linejoin="round" stroke-linecap="round" /><path d="M289.8,718.7 L293.5,734.4 L284.0,738.3 L286.1,755.6" fill="none" stroke="#f4cd8a" stroke-width="1.25" stroke-linejoin="round" stroke-linecap="round" /><path d="M289.8,718.7 L300.6,712.5 L307.1,707.0 L317.0,700.0" fill="none" stroke="#f4cd8a" stroke-width="1.25" stroke-linejoin="round" stroke-linecap="round" /><path d="M286.1,755.6 L303.3,760.0 L310.9,755.4 L330.2,758.5" fill="none" stroke="#f4cd8a" stroke-width="1.25" stroke-linejoin="round" stroke-linecap="round" /><path d="M286.1,755.6 L295.8,768.7 L317.5,780.6 L325.9,785.8" fill="none" stroke="#f4cd8a" stroke-width="1.25" stroke-linejoin="round" stroke-linecap="round" /><path d="M286.1,755.6 L296.5,741.8 L310.3,736.1 L328.2,729.0" fill="none" stroke="#f4cd8a" stroke-width="1.25" stroke-linejoin="round" stroke-linecap="round" /><path d="M286.7,788.5 L289.4,791.6 L298.8,793.4 L304.2,800.9" fill="none" stroke="#f4cd8a" stroke-width="1.25" stroke-linejoin="round" stroke-linecap="round" /><path d="M286.7,788.5 L296.7,795.8 L308.2,811.8 L325.8,816.4" fill="none" stroke="#f4cd8a" stroke-width="1.25" stroke-linejoin="round" stroke-linecap="round" /><path d="M304.2,800.9 L310.7,806.6 L321.9,810.3 L325.8,816.4" fill="none" stroke="#f4cd8a" stroke-width="1.25" stroke-linejoin="round" stroke-linecap="round" /><path d="M304.3,837.5 L315.4,835.8 L322.3,838.0 L323.9,838.2" fill="none" stroke="#f4cd8a" stroke-width="1.25" stroke-linejoin="round" stroke-linecap="round" /><path d="M304.3,837.5 L293.9,843.8 L293.1,849.3 L285.1,859.7" fill="none" stroke="#f4cd8a" stroke-width="1.25" stroke-linejoin="round" stroke-linecap="round" /><path d="M285.1,859.7 L300.5,858.8 L312.4,864.0 L323.0,862.7" fill="none" stroke="#f4cd8a" stroke-width="1.25" stroke-linejoin="round" stroke-linecap="round" /><path d="M285.1,859.7 L285.7,866.6 L290.7,876.1 L292.2,885.2" fill="none" stroke="#f4cd8a" stroke-width="1.25" stroke-linejoin="round" stroke-linecap="round" /><path d="M292.2,885.2 L301.5,882.2 L314.2,885.2 L330.8,885.0" fill="none" stroke="#f4cd8a" stroke-width="1.25" stroke-linejoin="round" stroke-linecap="round" /><path d="M292.2,885.2 L294.6,890.8 L287.8,905.0 L286.3,910.9" fill="none" stroke="#f4cd8a" stroke-width="1.25" stroke-linejoin="round" stroke-linecap="round" /><path d="M292.2,885.2 L299.8,879.7 L311.2,874.6 L323.0,862.7" fill="none" stroke="#f4cd8a" stroke-width="1.25" stroke-linejoin="round" stroke-linecap="round" /><path d="M286.3,910.9 L294.2,912.5 L304.3,912.3 L315.8,916.0" fill="none" stroke="#f4cd8a" stroke-width="1.25" stroke-linejoin="round" stroke-linecap="round" /><path d="M286.3,910.9 L286.1,923.7 L284.4,936.4 L285.3,942.0" fill="none" stroke="#f4cd8a" stroke-width="1.25" stroke-linejoin="round" stroke-linecap="round" /><path d="M285.3,942.0 L294.1,939.7 L307.0,945.9 L318.2,947.3" fill="none" stroke="#f4cd8a" stroke-width="1.25" stroke-linejoin="round" stroke-linecap="round" /><path d="M285.3,942.0 L293.8,952.1 L310.2,956.3 L324.7,960.0" fill="none" stroke="#f4cd8a" stroke-width="1.25" stroke-linejoin="round" stroke-linecap="round" /><path d="M294.6,964.6 L301.4,965.9 L312.7,961.6 L324.7,960.0" fill="none" stroke="#f4cd8a" stroke-width="1.25" stroke-linejoin="round" stroke-linecap="round" /><path d="M294.6,964.6 L298.4,977.4 L297.6,988.3 L303.5,1004.7" fill="none" stroke="#f4cd8a" stroke-width="1.25" stroke-linejoin="round" stroke-linecap="round" /><path d="M303.5,1004.7 L305.9,1001.3 L310.4,1000.0 L316.2,999.4" fill="none" stroke="#f4cd8a" stroke-width="1.25" stroke-linejoin="round" stroke-linecap="round" /><path d="M303.5,1004.7 L307.6,1012.8 L315.6,1018.3 L319.9,1027.6" fill="none" stroke="#f4cd8a" stroke-width="1.25" stroke-linejoin="round" stroke-linecap="round" /><path d="M295.0,1030.0 L299.8,1033.3 L308.7,1030.5 L319.9,1027.6" fill="none" stroke="#f4cd8a" stroke-width="1.25" stroke-linejoin="round" stroke-linecap="round" /><path d="M295.0,1030.0 L306.4,1037.2 L311.1,1043.0 L321.4,1043.2" fill="none" stroke="#f4cd8a" stroke-width="1.25" stroke-linejoin="round" stroke-linecap="round" /><path d="M295.0,1030.0 L302.2,1024.6 L309.4,1013.4 L316.2,999.4" fill="none" stroke="#f4cd8a" stroke-width="1.25" stroke-linejoin="round" stroke-linecap="round" /><path d="M292.1,1056.1 L303.3,1051.6 L313.7,1049.9 L321.4,1043.2" fill="none" stroke="#f4cd8a" stroke-width="1.25" stroke-linejoin="round" stroke-linecap="round" /><path d="M327.6,589.0 L333.1,594.7 L347.3,599.8 L352.8,601.5" fill="none" stroke="#f4cd8a" stroke-width="1.25" stroke-linejoin="round" stroke-linecap="round" /><path d="M327.6,589.0 L327.8,593.2 L331.8,608.5 L326.8,616.0" fill="none" stroke="#f4cd8a" stroke-width="1.25" stroke-linejoin="round" stroke-linecap="round" /><path d="M326.8,616.0 L329.6,618.4 L339.0,623.1 L340.8,621.3" fill="none" stroke="#f4cd8a" stroke-width="1.25" stroke-linejoin="round" stroke-linecap="round" /><path d="M315.5,644.4 L323.9,641.0 L343.2,651.7 L351.3,648.3" fill="none" stroke="#f4cd8a" stroke-width="1.25" stroke-linejoin="round" stroke-linecap="round" /><path d="M315.5,644.4 L327.9,650.9 L336.1,666.5 L349.1,673.1" fill="none" stroke="#f4cd8a" stroke-width="1.25" stroke-linejoin="round" stroke-linecap="round" /><path d="M314.3,677.4 L328.7,678.1 L339.5,671.0 L349.1,673.1" fill="none" stroke="#f4cd8a" stroke-width="1.25" stroke-linejoin="round" stroke-linecap="round" /><path d="M314.3,677.4 L317.6,681.9 L312.8,692.2 L317.0,700.0" fill="none" stroke="#f4cd8a" stroke-width="1.25" stroke-linejoin="round" stroke-linecap="round" /><path d="M314.3,677.4 L326.7,684.0 L341.1,693.4 L358.8,707.4" fill="none" stroke="#f4cd8a" stroke-width="1.25" stroke-linejoin="round" stroke-linecap="round" /><path d="M317.0,700.0 L327.4,699.2 L343.9,700.7 L358.8,707.4" fill="none" stroke="#f4cd8a" stroke-width="1.25" stroke-linejoin="round" stroke-linecap="round" /><path d="M317.0,700.0 L316.2,712.0 L320.7,719.0 L328.2,729.0" fill="none" stroke="#f4cd8a" stroke-width="1.25" stroke-linejoin="round" stroke-linecap="round" /><path d="M317.0,700.0 L329.1,715.8 L339.5,718.0 L347.7,733.3" fill="none" stroke="#f4cd8a" stroke-width="1.25" stroke-linejoin="round" stroke-linecap="round" /><path d="M317.0,700.0 L324.4,694.9 L334.3,684.7 L349.1,673.1" fill="none" stroke="#f4cd8a" stroke-width="1.25" stroke-linejoin="round" stroke-linecap="round" /><path d="M328.2,729.0 L338.0,729.7 L340.4,730.3 L347.7,733.3" fill="none" stroke="#f4cd8a" stroke-width="1.25" stroke-linejoin="round" stroke-linecap="round" /><path d="M328.2,729.0 L328.7,740.9 L328.9,752.1 L330.2,758.5" fill="none" stroke="#f4cd8a" stroke-width="1.25" stroke-linejoin="round" stroke-linecap="round" /><path d="M330.2,758.5 L334.9,763.2 L340.4,758.6 L352.3,760.1" fill="none" stroke="#f4cd8a" stroke-width="1.25" stroke-linejoin="round" stroke-linecap="round" /><path d="M330.2,758.5 L329.8,763.6 L329.0,773.0 L325.9,785.8" fill="none" stroke="#f4cd8a" stroke-width="1.25" stroke-linejoin="round" stroke-linecap="round" /><path d="M325.9,785.8 L341.9,777.0 L352.0,778.7 L359.0,772.4" fill="none" stroke="#f4cd8a" stroke-width="1.25" stroke-linejoin="round" stroke-linecap="round" /><path d="M325.8,816.4 L332.1,810.1 L334.2,808.1 L343.2,802.6" fill="none" stroke="#f4cd8a" stroke-width="1.25" stroke-linejoin="round" stroke-linecap="round" /><path d="M323.9,838.2 L331.4,840.6 L341.5,845.3 L355.4,843.5" fill="none" stroke="#f4cd8a" stroke-width="1.25" stroke-linejoin="round" stroke-linecap="round" /><path d="M323.9,838.2 L322.4,844.6 L327.2,853.9 L323.0,862.7" fill="none" stroke="#f4cd8a" stroke-width="1.25" stroke-linejoin="round" stroke-linecap="round" /><path d="M323.9,838.2 L332.1,845.3 L333.2,857.4 L343.5,861.7" fill="none" stroke="#f4cd8a" stroke-width="1.25" stroke-linejoin="round" stroke-linecap="round" /><path d="M323.9,838.2 L327.3,826.6 L334.3,812.8 L343.2,802.6" fill="none" stroke="#f4cd8a" stroke-width="1.25" stroke-linejoin="round" stroke-linecap="round" /><path d="M323.0,862.7 L334.1,863.3 L336.0,865.3 L343.5,861.7" fill="none" stroke="#f4cd8a" stroke-width="1.25" stroke-linejoin="round" stroke-linecap="round" /><path d="M323.0,862.7 L336.8,859.0 L346.7,852.2 L355.4,843.5" fill="none" stroke="#f4cd8a" stroke-width="1.25" stroke-linejoin="round" stroke-linecap="round" /><path d="M330.8,885.0 L336.6,892.1 L351.1,888.0 L356.8,893.4" fill="none" stroke="#f4cd8a" stroke-width="1.25" stroke-linejoin="round" stroke-linecap="round" /><path d="M330.8,885.0 L322.7,892.7 L322.1,902.1 L315.8,916.0" fill="none" stroke="#f4cd8a" stroke-width="1.25" stroke-linejoin="round" stroke-linecap="round" /><path d="M330.8,885.0 L338.6,899.1 L348.2,906.2 L350.7,923.9" fill="none" stroke="#f4cd8a" stroke-width="1.25" stroke-linejoin="round" stroke-linecap="round" /><path d="M315.8,916.0 L331.6,921.7 L335.6,921.0 L350.7,923.9" fill="none" stroke="#f4cd8a" stroke-width="1.25" stroke-linejoin="round" stroke-linecap="round" /><path d="M315.8,916.0 L317.8,926.3 L317.8,934.0 L318.2,947.3" fill="none" stroke="#f4cd8a" stroke-width="1.25" stroke-linejoin="round" stroke-linecap="round" /><path d="M315.8,916.0 L326.3,922.4 L340.0,932.4 L357.5,934.8" fill="none" stroke="#f4cd8a" stroke-width="1.25" stroke-linejoin="round" stroke-linecap="round" /><path d="M318.2,947.3 L332.8,944.8 L346.8,938.4 L357.5,934.8" fill="none" stroke="#f4cd8a" stroke-width="1.25" stroke-linejoin="round" stroke-linecap="round" /><path d="M324.7,960.0 L321.2,970.2 L320.3,985.1 L316.2,999.4" fill="none" stroke="#f4cd8a" stroke-width="1.25" stroke-linejoin="round" stroke-linecap="round" /><path d="M316.2,999.4 L328.8,1002.5 L338.1,997.5 L351.3,1002.1" fill="none" stroke="#f4cd8a" stroke-width="1.25" stroke-linejoin="round" stroke-linecap="round" /><path d="M316.2,999.4 L318.7,1009.3 L322.0,1022.6 L319.9,1027.6" fill="none" stroke="#f4cd8a" stroke-width="1.25" stroke-linejoin="round" stroke-linecap="round" /><path d="M319.9,1027.6 L320.6,1029.9 L319.1,1036.7 L321.4,1043.2" fill="none" stroke="#f4cd8a" stroke-width="1.25" stroke-linejoin="round" stroke-linecap="round" /><path d="M321.4,1043.2 L329.3,1048.3 L344.6,1055.3 L357.1,1056.8" fill="none" stroke="#f4cd8a" stroke-width="1.25" stroke-linejoin="round" stroke-linecap="round" /><path d="M352.8,601.5 L363.0,613.2 L365.8,612.7 L378.5,623.8" fill="none" stroke="#f4cd8a" stroke-width="1.25" stroke-linejoin="round" stroke-linecap="round" /><path d="M340.8,621.3 L350.2,626.6 L369.8,619.4 L378.5,623.8" fill="none" stroke="#f4cd8a" stroke-width="1.25" stroke-linejoin="round" stroke-linecap="round" /><path d="M340.8,621.3 L340.4,634.0 L346.0,640.0 L351.3,648.3" fill="none" stroke="#f4cd8a" stroke-width="1.25" stroke-linejoin="round" stroke-linecap="round" /><path d="M351.3,648.3 L367.0,644.7 L373.0,651.9 L385.1,650.5" fill="none" stroke="#f4cd8a" stroke-width="1.25" stroke-linejoin="round" stroke-linecap="round" /><path d="M349.1,673.1 L353.9,671.0 L368.1,668.6 L371.6,665.0" fill="none" stroke="#f4cd8a" stroke-width="1.25" stroke-linejoin="round" stroke-linecap="round" /><path d="M349.1,673.1 L351.2,687.1 L360.3,695.7 L358.8,707.4" fill="none" stroke="#f4cd8a" stroke-width="1.25" stroke-linejoin="round" stroke-linecap="round" /><path d="M358.8,707.4 L366.4,699.1 L365.1,703.5 L369.5,695.2" fill="none" stroke="#f4cd8a" stroke-width="1.25" stroke-linejoin="round" stroke-linecap="round" /><path d="M358.8,707.4 L354.0,713.1 L350.1,727.1 L347.7,733.3" fill="none" stroke="#f4cd8a" stroke-width="1.25" stroke-linejoin="round" stroke-linecap="round" /><path d="M347.7,733.3 L347.1,743.4 L355.1,753.2 L352.3,760.1" fill="none" stroke="#f4cd8a" stroke-width="1.25" stroke-linejoin="round" stroke-linecap="round" /><path d="M352.3,760.1 L359.3,752.8 L365.2,753.4 L369.0,745.7" fill="none" stroke="#f4cd8a" stroke-width="1.25" stroke-linejoin="round" stroke-linecap="round" /><path d="M352.3,760.1 L360.2,765.7 L373.9,780.3 L379.7,787.3" fill="none" stroke="#f4cd8a" stroke-width="1.25" stroke-linejoin="round" stroke-linecap="round" /><path d="M359.0,772.4 L368.2,776.9 L369.6,786.9 L379.7,787.3" fill="none" stroke="#f4cd8a" stroke-width="1.25" stroke-linejoin="round" stroke-linecap="round" /><path d="M359.0,772.4 L353.7,783.1 L345.6,789.9 L343.2,802.6" fill="none" stroke="#f4cd8a" stroke-width="1.25" stroke-linejoin="round" stroke-linecap="round" /><path d="M359.0,772.4 L363.8,787.5 L362.9,793.3 L368.5,808.3" fill="none" stroke="#f4cd8a" stroke-width="1.25" stroke-linejoin="round" stroke-linecap="round" /><path d="M343.2,802.6 L354.2,802.0 L357.7,805.4 L368.5,808.3" fill="none" stroke="#f4cd8a" stroke-width="1.25" stroke-linejoin="round" stroke-linecap="round" /><path d="M343.2,802.6 L351.8,793.0 L369.2,794.0 L379.7,787.3" fill="none" stroke="#f4cd8a" stroke-width="1.25" stroke-linejoin="round" stroke-linecap="round" /><path d="M355.4,843.5 L363.3,843.2 L371.0,838.3 L385.6,832.2" fill="none" stroke="#f4cd8a" stroke-width="1.25" stroke-linejoin="round" stroke-linecap="round" /><path d="M343.5,861.7 L358.8,864.5 L366.9,867.1 L376.7,868.2" fill="none" stroke="#f4cd8a" stroke-width="1.25" stroke-linejoin="round" stroke-linecap="round" /><path d="M356.8,893.4 L356.3,894.3 L362.5,897.3 L366.5,896.5" fill="none" stroke="#f4cd8a" stroke-width="1.25" stroke-linejoin="round" stroke-linecap="round" /><path d="M356.8,893.4 L352.2,900.6 L355.2,914.4 L350.7,923.9" fill="none" stroke="#f4cd8a" stroke-width="1.25" stroke-linejoin="round" stroke-linecap="round" /><path d="M356.8,893.4 L362.9,881.2 L366.8,875.1 L376.7,868.2" fill="none" stroke="#f4cd8a" stroke-width="1.25" stroke-linejoin="round" stroke-linecap="round" /><path d="M350.7,923.9 L365.5,918.9 L371.4,917.7 L381.5,920.7" fill="none" stroke="#f4cd8a" stroke-width="1.25" stroke-linejoin="round" stroke-linecap="round" /><path d="M350.7,923.9 L361.7,928.3 L364.1,932.5 L372.9,942.8" fill="none" stroke="#f4cd8a" stroke-width="1.25" stroke-linejoin="round" stroke-linecap="round" /><path d="M357.5,934.8 L364.3,937.8 L365.5,941.7 L372.9,942.8" fill="none" stroke="#f4cd8a" stroke-width="1.25" stroke-linejoin="round" stroke-linecap="round" /><path d="M357.5,934.8 L353.4,949.3 L361.8,958.5 L358.3,965.8" fill="none" stroke="#f4cd8a" stroke-width="1.25" stroke-linejoin="round" stroke-linecap="round" /><path d="M358.3,965.8 L366.5,968.5 L377.8,958.9 L384.8,961.2" fill="none" stroke="#f4cd8a" stroke-width="1.25" stroke-linejoin="round" stroke-linecap="round" /><path d="M358.3,965.8 L359.1,977.5 L355.1,993.7 L351.3,1002.1" fill="none" stroke="#f4cd8a" stroke-width="1.25" stroke-linejoin="round" stroke-linecap="round" /><path d="M351.3,1002.1 L359.6,1004.8 L358.7,997.4 L367.6,999.8" fill="none" stroke="#f4cd8a" stroke-width="1.25" stroke-linejoin="round" stroke-linecap="round" /><path d="M351.3,1002.1 L347.6,1006.1 L342.0,1013.5 L344.9,1020.1" fill="none" stroke="#f4cd8a" stroke-width="1.25" stroke-linejoin="round" stroke-linecap="round" /><path d="M344.9,1020.1 L357.0,1020.1 L366.9,1014.7 L385.1,1017.0" fill="none" stroke="#f4cd8a" stroke-width="1.25" stroke-linejoin="round" stroke-linecap="round" /><path d="M344.9,1020.1 L347.6,1034.3 L349.3,1040.2 L357.1,1056.8" fill="none" stroke="#f4cd8a" stroke-width="1.25" stroke-linejoin="round" stroke-linecap="round" /><path d="M357.1,1056.8 L362.4,1051.5 L362.0,1051.9 L369.8,1050.2" fill="none" stroke="#f4cd8a" stroke-width="1.25" stroke-linejoin="round" stroke-linecap="round" /><path d="M385.5,583.9 L393.3,582.8 L405.5,587.5 L408.8,593.3" fill="none" stroke="#f4cd8a" stroke-width="1.25" stroke-linejoin="round" stroke-linecap="round" /><path d="M385.5,583.9 L386.2,601.6 L379.5,610.0 L378.5,623.8" fill="none" stroke="#f4cd8a" stroke-width="1.25" stroke-linejoin="round" stroke-linecap="round" /><path d="M378.5,623.8 L383.9,616.4 L395.4,609.7 L406.2,610.0" fill="none" stroke="#f4cd8a" stroke-width="1.25" stroke-linejoin="round" stroke-linecap="round" /><path d="M378.5,623.8 L384.7,636.0 L386.2,639.6 L385.1,650.5" fill="none" stroke="#f4cd8a" stroke-width="1.25" stroke-linejoin="round" stroke-linecap="round" /><path d="M385.1,650.5 L388.4,648.2 L395.5,650.5 L397.0,647.7" fill="none" stroke="#f4cd8a" stroke-width="1.25" stroke-linejoin="round" stroke-linecap="round" /><path d="M371.6,665.0 L368.0,675.2 L367.9,689.2 L369.5,695.2" fill="none" stroke="#f4cd8a" stroke-width="1.25" stroke-linejoin="round" stroke-linecap="round" /><path d="M371.6,665.0 L381.6,660.7 L391.2,649.9 L397.0,647.7" fill="none" stroke="#f4cd8a" stroke-width="1.25" stroke-linejoin="round" stroke-linecap="round" /><path d="M369.5,695.2 L374.0,694.8 L385.0,694.5 L394.8,696.3" fill="none" stroke="#f4cd8a" stroke-width="1.25" stroke-linejoin="round" stroke-linecap="round" /><path d="M369.5,695.2 L372.3,700.7 L375.0,709.8 L377.4,723.5" fill="none" stroke="#f4cd8a" stroke-width="1.25" stroke-linejoin="round" stroke-linecap="round" /><path d="M369.5,695.2 L382.0,680.1 L397.6,679.4 L407.5,664.8" fill="none" stroke="#f4cd8a" stroke-width="1.25" stroke-linejoin="round" stroke-linecap="round" /><path d="M377.4,723.5 L384.9,723.2 L395.9,719.4 L401.3,723.7" fill="none" stroke="#f4cd8a" stroke-width="1.25" stroke-linejoin="round" stroke-linecap="round" /><path d="M377.4,723.5 L374.4,727.6 L371.4,736.8 L369.0,745.7" fill="none" stroke="#f4cd8a" stroke-width="1.25" stroke-linejoin="round" stroke-linecap="round" /><path d="M377.4,723.5 L384.6,730.2 L386.3,738.5 L396.4,745.5" fill="none" stroke="#f4cd8a" stroke-width="1.25" stroke-linejoin="round" stroke-linecap="round" /><path d="M369.0,745.7 L376.3,747.8 L388.2,740.6 L396.4,745.5" fill="none" stroke="#f4cd8a" stroke-width="1.25" stroke-linejoin="round" stroke-linecap="round" /><path d="M369.0,745.7 L375.1,758.0 L378.8,777.1 L379.7,787.3" fill="none" stroke="#f4cd8a" stroke-width="1.25" stroke-linejoin="round" stroke-linecap="round" /><path d="M379.7,787.3 L388.2,784.1 L395.1,786.8 L405.9,790.1" fill="none" stroke="#f4cd8a" stroke-width="1.25" stroke-linejoin="round" stroke-linecap="round" /><path d="M368.5,808.3 L380.2,812.4 L391.8,808.8 L405.7,816.4" fill="none" stroke="#f4cd8a" stroke-width="1.25" stroke-linejoin="round" stroke-linecap="round" /><path d="M368.5,808.3 L378.0,816.2 L383.9,823.1 L385.6,832.2" fill="none" stroke="#f4cd8a" stroke-width="1.25" stroke-linejoin="round" stroke-linecap="round" /><path d="M368.5,808.3 L380.2,800.3 L389.5,794.3 L405.9,790.1" fill="none" stroke="#f4cd8a" stroke-width="1.25" stroke-linejoin="round" stroke-linecap="round" /><path d="M376.7,868.2 L382.9,869.6 L390.2,869.9 L400.3,868.9" fill="none" stroke="#f4cd8a" stroke-width="1.25" stroke-linejoin="round" stroke-linecap="round" /><path d="M376.7,868.2 L371.1,874.8 L370.6,887.8 L366.5,896.5" fill="none" stroke="#f4cd8a" stroke-width="1.25" stroke-linejoin="round" stroke-linecap="round" /><path d="M366.5,896.5 L379.2,897.6 L392.9,889.2 L405.0,891.3" fill="none" stroke="#f4cd8a" stroke-width="1.25" stroke-linejoin="round" stroke-linecap="round" /><path d="M366.5,896.5 L367.6,906.2 L379.3,914.0 L381.5,920.7" fill="none" stroke="#f4cd8a" stroke-width="1.25" stroke-linejoin="round" stroke-linecap="round" /><path d="M366.5,896.5 L380.5,901.2 L398.2,918.1 L411.3,925.1" fill="none" stroke="#f4cd8a" stroke-width="1.25" stroke-linejoin="round" stroke-linecap="round" /><path d="M366.5,896.5 L379.9,882.8 L385.5,882.4 L400.3,868.9" fill="none" stroke="#f4cd8a" stroke-width="1.25" stroke-linejoin="round" stroke-linecap="round" /><path d="M381.5,920.7 L392.9,926.5 L404.0,923.2 L411.3,925.1" fill="none" stroke="#f4cd8a" stroke-width="1.25" stroke-linejoin="round" stroke-linecap="round" /><path d="M381.5,920.7 L377.6,924.6 L378.6,935.7 L372.9,942.8" fill="none" stroke="#f4cd8a" stroke-width="1.25" stroke-linejoin="round" stroke-linecap="round" /><path d="M372.9,942.8 L378.1,938.7 L390.3,942.1 L395.7,941.8" fill="none" stroke="#f4cd8a" stroke-width="1.25" stroke-linejoin="round" stroke-linecap="round" /><path d="M372.9,942.8 L381.6,947.6 L379.4,952.3 L384.8,961.2" fill="none" stroke="#f4cd8a" stroke-width="1.25" stroke-linejoin="round" stroke-linecap="round" /><path d="M384.8,961.2 L387.3,964.3 L394.8,966.4 L394.7,971.2" fill="none" stroke="#f4cd8a" stroke-width="1.25" stroke-linejoin="round" stroke-linecap="round" /><path d="M384.8,961.2 L379.2,978.6 L374.3,991.3 L367.6,999.8" fill="none" stroke="#f4cd8a" stroke-width="1.25" stroke-linejoin="round" stroke-linecap="round" /><path d="M384.8,961.2 L385.5,957.9 L388.2,946.1 L395.7,941.8" fill="none" stroke="#f4cd8a" stroke-width="1.25" stroke-linejoin="round" stroke-linecap="round" /><path d="M367.6,999.8 L375.5,1004.5 L376.5,1015.7 L385.1,1017.0" fill="none" stroke="#f4cd8a" stroke-width="1.25" stroke-linejoin="round" stroke-linecap="round" /><path d="M367.6,999.8 L373.0,990.8 L381.4,985.2 L394.7,971.2" fill="none" stroke="#f4cd8a" stroke-width="1.25" stroke-linejoin="round" stroke-linecap="round" /><path d="M385.1,1017.0 L388.2,1011.6 L395.0,1015.7 L400.1,1014.2" fill="none" stroke="#f4cd8a" stroke-width="1.25" stroke-linejoin="round" stroke-linecap="round" /><path d="M385.1,1017.0 L382.0,1028.2 L378.1,1043.3 L369.8,1050.2" fill="none" stroke="#f4cd8a" stroke-width="1.25" stroke-linejoin="round" stroke-linecap="round" /><path d="M369.8,1050.2 L384.8,1047.0 L396.7,1043.2 L410.8,1043.5" fill="none" stroke="#f4cd8a" stroke-width="1.25" stroke-linejoin="round" stroke-linecap="round" /><path d="M369.8,1050.2 L375.9,1039.5 L394.1,1031.0 L400.1,1014.2" fill="none" stroke="#f4cd8a" stroke-width="1.25" stroke-linejoin="round" stroke-linecap="round" /><path d="M408.8,593.3 L411.4,588.8 L415.9,595.9 L425.4,592.4" fill="none" stroke="#f4cd8a" stroke-width="1.25" stroke-linejoin="round" stroke-linecap="round" /><path d="M408.8,593.3 L406.6,595.8 L409.1,601.4 L406.2,610.0" fill="none" stroke="#f4cd8a" stroke-width="1.25" stroke-linejoin="round" stroke-linecap="round" /><path d="M406.2,610.0 L415.4,613.9 L415.6,619.7 L421.1,624.4" fill="none" stroke="#f4cd8a" stroke-width="1.25" stroke-linejoin="round" stroke-linecap="round" /><path d="M406.2,610.0 L407.3,622.8 L400.5,638.9 L397.0,647.7" fill="none" stroke="#f4cd8a" stroke-width="1.25" stroke-linejoin="round" stroke-linecap="round" /><path d="M397.0,647.7 L407.4,641.7 L422.0,639.1 L434.3,638.3" fill="none" stroke="#f4cd8a" stroke-width="1.25" stroke-linejoin="round" stroke-linecap="round" /><path d="M397.0,647.7 L407.7,652.7 L418.8,661.7 L432.4,665.6" fill="none" stroke="#f4cd8a" stroke-width="1.25" stroke-linejoin="round" stroke-linecap="round" /><path d="M407.5,664.8 L406.6,678.7 L398.1,690.2 L394.8,696.3" fill="none" stroke="#f4cd8a" stroke-width="1.25" stroke-linejoin="round" stroke-linecap="round" /><path d="M394.8,696.3 L410.5,692.1 L422.4,691.4 L430.6,691.9" fill="none" stroke="#f4cd8a" stroke-width="1.25" stroke-linejoin="round" stroke-linecap="round" /><path d="M401.3,723.7 L394.8,732.1 L398.7,736.2 L396.4,745.5" fill="none" stroke="#f4cd8a" stroke-width="1.25" stroke-linejoin="round" stroke-linecap="round" /><path d="M396.4,745.5 L405.1,751.7 L419.7,749.7 L430.9,757.1" fill="none" stroke="#f4cd8a" stroke-width="1.25" stroke-linejoin="round" stroke-linecap="round" /><path d="M396.4,745.5 L408.4,738.2 L418.9,731.8 L425.6,726.0" fill="none" stroke="#f4cd8a" stroke-width="1.25" stroke-linejoin="round" stroke-linecap="round" /><path d="M405.9,790.1 L419.0,789.7 L424.3,777.9 L438.5,777.7" fill="none" stroke="#f4cd8a" stroke-width="1.25" stroke-linejoin="round" stroke-linecap="round" /><path d="M405.9,790.1 L402.4,801.8 L404.2,806.2 L405.7,816.4" fill="none" stroke="#f4cd8a" stroke-width="1.25" stroke-linejoin="round" stroke-linecap="round" /><path d="M405.9,790.1 L410.7,792.7 L417.6,795.3 L427.0,802.2" fill="none" stroke="#f4cd8a" stroke-width="1.25" stroke-linejoin="round" stroke-linecap="round" /><path d="M405.7,816.4 L409.0,811.7 L421.4,802.1 L427.0,802.2" fill="none" stroke="#f4cd8a" stroke-width="1.25" stroke-linejoin="round" stroke-linecap="round" /><path d="M395.5,837.3 L404.3,839.4 L417.1,835.1 L434.8,832.3" fill="none" stroke="#f4cd8a" stroke-width="1.25" stroke-linejoin="round" stroke-linecap="round" /><path d="M395.5,837.3 L398.7,847.3 L398.2,858.0 L400.3,868.9" fill="none" stroke="#f4cd8a" stroke-width="1.25" stroke-linejoin="round" stroke-linecap="round" /><path d="M395.5,837.3 L403.7,825.5 L415.7,815.0 L427.0,802.2" fill="none" stroke="#f4cd8a" stroke-width="1.25" stroke-linejoin="round" stroke-linecap="round" /><path d="M400.3,868.9 L413.0,861.7 L420.5,855.4 L424.2,855.8" fill="none" stroke="#f4cd8a" stroke-width="1.25" stroke-linejoin="round" stroke-linecap="round" /><path d="M400.3,868.9 L407.6,877.1 L423.1,883.1 L428.4,895.7" fill="none" stroke="#f4cd8a" stroke-width="1.25" stroke-linejoin="round" stroke-linecap="round" /><path d="M405.0,891.3 L409.3,907.5 L412.2,911.3 L411.3,925.1" fill="none" stroke="#f4cd8a" stroke-width="1.25" stroke-linejoin="round" stroke-linecap="round" /><path d="M411.3,925.1 L421.9,927.6 L425.7,924.3 L428.8,922.3" fill="none" stroke="#f4cd8a" stroke-width="1.25" stroke-linejoin="round" stroke-linecap="round" /><path d="M411.3,925.1 L409.8,933.7 L397.6,933.5 L395.7,941.8" fill="none" stroke="#f4cd8a" stroke-width="1.25" stroke-linejoin="round" stroke-linecap="round" /><path d="M395.7,941.8 L410.1,940.7 L420.3,947.4 L429.4,944.6" fill="none" stroke="#f4cd8a" stroke-width="1.25" stroke-linejoin="round" stroke-linecap="round" /><path d="M394.7,971.2 L408.3,967.3 L411.2,972.8 L425.1,968.2" fill="none" stroke="#f4cd8a" stroke-width="1.25" stroke-linejoin="round" stroke-linecap="round" /><path d="M394.7,971.2 L395.2,978.0 L400.8,992.9 L397.5,1001.0" fill="none" stroke="#f4cd8a" stroke-width="1.25" stroke-linejoin="round" stroke-linecap="round" /><path d="M397.5,1001.0 L409.9,992.8 L417.3,993.7 L434.5,988.7" fill="none" stroke="#f4cd8a" stroke-width="1.25" stroke-linejoin="round" stroke-linecap="round" /><path d="M397.5,1001.0 L401.8,1008.0 L400.9,1010.5 L400.1,1014.2" fill="none" stroke="#f4cd8a" stroke-width="1.25" stroke-linejoin="round" stroke-linecap="round" /><path d="M400.1,1014.2 L407.3,1015.4 L415.1,1019.2 L429.1,1019.1" fill="none" stroke="#f4cd8a" stroke-width="1.25" stroke-linejoin="round" stroke-linecap="round" /><path d="M400.1,1014.2 L400.8,1026.0 L410.2,1030.9 L410.8,1043.5" fill="none" stroke="#f4cd8a" stroke-width="1.25" stroke-linejoin="round" stroke-linecap="round" /><path d="M400.1,1014.2 L409.5,1029.9 L413.1,1039.6 L425.8,1047.8" fill="none" stroke="#f4cd8a" stroke-width="1.25" stroke-linejoin="round" stroke-linecap="round" /><path d="M410.8,1043.5 L410.9,1043.9 L416.2,1050.8 L425.8,1047.8" fill="none" stroke="#f4cd8a" stroke-width="1.25" stroke-linejoin="round" stroke-linecap="round" /><path d="M425.4,592.4 L434.8,595.5 L438.7,598.0 L451.0,593.5" fill="none" stroke="#f4cd8a" stroke-width="1.25" stroke-linejoin="round" stroke-linecap="round" /><path d="M425.4,592.4 L423.2,598.2 L418.4,618.0 L421.1,624.4" fill="none" stroke="#f4cd8a" stroke-width="1.25" stroke-linejoin="round" stroke-linecap="round" /><path d="M425.4,592.4 L432.9,601.8 L442.6,606.1 L447.8,613.8" fill="none" stroke="#f4cd8a" stroke-width="1.25" stroke-linejoin="round" stroke-linecap="round" /><path d="M421.1,624.4 L433.4,617.9 L437.8,618.1 L447.8,613.8" fill="none" stroke="#f4cd8a" stroke-width="1.25" stroke-linejoin="round" stroke-linecap="round" /><path d="M421.1,624.4 L426.2,624.4 L427.4,632.3 L434.3,638.3" fill="none" stroke="#f4cd8a" stroke-width="1.25" stroke-linejoin="round" stroke-linecap="round" /><path d="M434.3,638.3 L441.0,636.7 L451.0,641.1 L452.3,639.6" fill="none" stroke="#f4cd8a" stroke-width="1.25" stroke-linejoin="round" stroke-linecap="round" /><path d="M434.3,638.3 L441.7,627.0 L446.8,624.6 L447.8,613.8" fill="none" stroke="#f4cd8a" stroke-width="1.25" stroke-linejoin="round" stroke-linecap="round" /><path d="M432.4,665.6 L433.2,669.6 L429.0,679.3 L430.6,691.9" fill="none" stroke="#f4cd8a" stroke-width="1.25" stroke-linejoin="round" stroke-linecap="round" /><path d="M432.4,665.6 L443.5,670.2 L453.9,680.2 L464.8,692.7" fill="none" stroke="#f4cd8a" stroke-width="1.25" stroke-linejoin="round" stroke-linecap="round" /><path d="M432.4,665.6 L442.0,661.8 L447.0,649.4 L452.3,639.6" fill="none" stroke="#f4cd8a" stroke-width="1.25" stroke-linejoin="round" stroke-linecap="round" /><path d="M430.6,691.9 L441.2,696.0 L449.1,691.2 L464.8,692.7" fill="none" stroke="#f4cd8a" stroke-width="1.25" stroke-linejoin="round" stroke-linecap="round" /><path d="M430.6,691.9 L426.2,699.8 L429.6,713.0 L425.6,726.0" fill="none" stroke="#f4cd8a" stroke-width="1.25" stroke-linejoin="round" stroke-linecap="round" /><path d="M425.6,726.0 L432.7,727.8 L438.0,729.0 L450.8,723.3" fill="none" stroke="#f4cd8a" stroke-width="1.25" stroke-linejoin="round" stroke-linecap="round" /><path d="M425.6,726.0 L429.8,734.6 L424.3,747.1 L430.9,757.1" fill="none" stroke="#f4cd8a" stroke-width="1.25" stroke-linejoin="round" stroke-linecap="round" /><path d="M425.6,726.0 L439.0,734.7 L442.2,749.5 L457.2,760.7" fill="none" stroke="#f4cd8a" stroke-width="1.25" stroke-linejoin="round" stroke-linecap="round" /><path d="M430.9,757.1 L441.8,753.8 L452.5,762.6 L457.2,760.7" fill="none" stroke="#f4cd8a" stroke-width="1.25" stroke-linejoin="round" stroke-linecap="round" /><path d="M430.9,757.1 L428.5,761.9 L433.0,774.7 L438.5,777.7" fill="none" stroke="#f4cd8a" stroke-width="1.25" stroke-linejoin="round" stroke-linecap="round" /><path d="M438.5,777.7 L449.2,777.4 L455.0,787.2 L463.7,788.2" fill="none" stroke="#f4cd8a" stroke-width="1.25" stroke-linejoin="round" stroke-linecap="round" /><path d="M438.5,777.7 L432.0,786.0 L427.7,796.3 L427.0,802.2" fill="none" stroke="#f4cd8a" stroke-width="1.25" stroke-linejoin="round" stroke-linecap="round" /><path d="M427.0,802.2 L432.5,796.1 L444.1,804.3 L447.3,798.5" fill="none" stroke="#f4cd8a" stroke-width="1.25" stroke-linejoin="round" stroke-linecap="round" /><path d="M427.0,802.2 L429.8,813.1 L430.8,822.7 L434.8,832.3" fill="none" stroke="#f4cd8a" stroke-width="1.25" stroke-linejoin="round" stroke-linecap="round" /><path d="M434.8,832.3 L437.6,832.2 L442.9,831.3 L453.7,833.6" fill="none" stroke="#f4cd8a" stroke-width="1.25" stroke-linejoin="round" stroke-linecap="round" /><path d="M434.8,832.3 L434.8,841.1 L432.6,850.9 L424.2,855.8" fill="none" stroke="#f4cd8a" stroke-width="1.25" stroke-linejoin="round" stroke-linecap="round" /><path d="M424.2,855.8 L428.7,858.9 L441.9,857.0 L447.1,859.0" fill="none" stroke="#f4cd8a" stroke-width="1.25" stroke-linejoin="round" stroke-linecap="round" /><path d="M428.4,895.7 L438.9,899.8 L439.8,899.6 L449.6,896.5" fill="none" stroke="#f4cd8a" stroke-width="1.25" stroke-linejoin="round" stroke-linecap="round" /><path d="M428.4,895.7 L432.0,907.9 L431.9,909.4 L428.8,922.3" fill="none" stroke="#f4cd8a" stroke-width="1.25" stroke-linejoin="round" stroke-linecap="round" /><path d="M428.4,895.7 L436.5,898.7 L442.4,911.4 L451.2,912.4" fill="none" stroke="#f4cd8a" stroke-width="1.25" stroke-linejoin="round" stroke-linecap="round" /><path d="M428.8,922.3 L432.9,921.8 L444.4,910.8 L451.2,912.4" fill="none" stroke="#f4cd8a" stroke-width="1.25" stroke-linejoin="round" stroke-linecap="round" /><path d="M428.8,922.3 L431.9,935.4 L446.5,936.7 L450.5,950.0" fill="none" stroke="#f4cd8a" stroke-width="1.25" stroke-linejoin="round" stroke-linecap="round" /><path d="M425.1,968.2 L430.3,978.6 L434.6,982.8 L434.5,988.7" fill="none" stroke="#f4cd8a" stroke-width="1.25" stroke-linejoin="round" stroke-linecap="round" /><path d="M434.5,988.7 L437.8,982.0 L439.4,973.3 L449.3,968.8" fill="none" stroke="#f4cd8a" stroke-width="1.25" stroke-linejoin="round" stroke-linecap="round" /><path d="M425.8,1047.8 L438.2,1052.2 L447.8,1049.6 L461.7,1048.1" fill="none" stroke="#f4cd8a" stroke-width="1.25" stroke-linejoin="round" stroke-linecap="round" /><path d="M451.0,593.5 L464.5,598.3 L476.1,597.1 L493.5,601.3" fill="none" stroke="#f4cd8a" stroke-width="1.25" stroke-linejoin="round" stroke-linecap="round" /><path d="M451.0,593.5 L445.6,597.7 L452.2,609.5 L447.8,613.8" fill="none" stroke="#f4cd8a" stroke-width="1.25" stroke-linejoin="round" stroke-linecap="round" /><path d="M447.8,613.8 L460.9,611.6 L475.0,617.2 L486.7,613.5" fill="none" stroke="#f4cd8a" stroke-width="1.25" stroke-linejoin="round" stroke-linecap="round" /><path d="M447.8,613.8 L447.6,625.7 L454.4,632.9 L452.3,639.6" fill="none" stroke="#f4cd8a" stroke-width="1.25" stroke-linejoin="round" stroke-linecap="round" /><path d="M452.3,639.6 L464.7,644.3 L463.0,641.2 L475.0,646.9" fill="none" stroke="#f4cd8a" stroke-width="1.25" stroke-linejoin="round" stroke-linecap="round" /><path d="M452.3,639.6 L464.9,634.5 L476.9,626.5 L486.7,613.5" fill="none" stroke="#f4cd8a" stroke-width="1.25" stroke-linejoin="round" stroke-linecap="round" /><path d="M463.7,676.7 L459.9,686.0 L461.9,691.1 L464.8,692.7" fill="none" stroke="#f4cd8a" stroke-width="1.25" stroke-linejoin="round" stroke-linecap="round" /><path d="M464.8,692.7 L471.6,697.3 L480.5,703.0 L494.0,706.3" fill="none" stroke="#f4cd8a" stroke-width="1.25" stroke-linejoin="round" stroke-linecap="round" /><path d="M464.8,692.7 L459.3,698.1 L460.2,714.2 L450.8,723.3" fill="none" stroke="#f4cd8a" stroke-width="1.25" stroke-linejoin="round" stroke-linecap="round" /><path d="M450.8,723.3 L453.6,731.2 L453.7,747.9 L457.2,760.7" fill="none" stroke="#f4cd8a" stroke-width="1.25" stroke-linejoin="round" stroke-linecap="round" /><path d="M450.8,723.3 L460.7,718.0 L476.7,707.4 L494.0,706.3" fill="none" stroke="#f4cd8a" stroke-width="1.25" stroke-linejoin="round" stroke-linecap="round" /><path d="M457.2,760.7 L466.7,754.6 L474.2,752.1 L486.3,744.8" fill="none" stroke="#f4cd8a" stroke-width="1.25" stroke-linejoin="round" stroke-linecap="round" /><path d="M457.2,760.7 L457.3,769.8 L459.0,783.7 L463.7,788.2" fill="none" stroke="#f4cd8a" stroke-width="1.25" stroke-linejoin="round" stroke-linecap="round" /><path d="M463.7,788.2 L455.6,791.4 L457.7,798.4 L447.3,798.5" fill="none" stroke="#f4cd8a" stroke-width="1.25" stroke-linejoin="round" stroke-linecap="round" /><path d="M463.7,788.2 L475.5,771.7 L474.5,758.4 L486.3,744.8" fill="none" stroke="#f4cd8a" stroke-width="1.25" stroke-linejoin="round" stroke-linecap="round" /><path d="M447.3,798.5 L460.3,806.3 L480.1,809.8 L489.9,812.8" fill="none" stroke="#f4cd8a" stroke-width="1.25" stroke-linejoin="round" stroke-linecap="round" /><path d="M447.3,798.5 L459.4,793.3 L471.0,796.9 L478.2,790.2" fill="none" stroke="#f4cd8a" stroke-width="1.25" stroke-linejoin="round" stroke-linecap="round" /><path d="M453.7,833.6 L466.9,826.4 L476.8,829.8 L487.2,825.5" fill="none" stroke="#f4cd8a" stroke-width="1.25" stroke-linejoin="round" stroke-linecap="round" /><path d="M453.7,833.6 L463.7,844.3 L480.9,849.3 L492.7,858.0" fill="none" stroke="#f4cd8a" stroke-width="1.25" stroke-linejoin="round" stroke-linecap="round" /><path d="M447.1,859.0 L466.0,854.8 L475.0,859.9 L492.7,858.0" fill="none" stroke="#f4cd8a" stroke-width="1.25" stroke-linejoin="round" stroke-linecap="round" /><path d="M447.1,859.0 L450.6,869.6 L451.7,885.0 L449.6,896.5" fill="none" stroke="#f4cd8a" stroke-width="1.25" stroke-linejoin="round" stroke-linecap="round" /><path d="M449.6,896.5 L460.4,898.8 L471.8,907.7 L483.8,916.5" fill="none" stroke="#f4cd8a" stroke-width="1.25" stroke-linejoin="round" stroke-linecap="round" /><path d="M451.2,912.4 L453.9,920.5 L450.6,936.6 L450.5,950.0" fill="none" stroke="#f4cd8a" stroke-width="1.25" stroke-linejoin="round" stroke-linecap="round" /><path d="M450.5,950.0 L468.1,948.2 L473.7,951.0 L492.4,949.7" fill="none" stroke="#f4cd8a" stroke-width="1.25" stroke-linejoin="round" stroke-linecap="round" /><path d="M450.5,950.0 L454.7,959.3 L449.4,965.3 L449.3,968.8" fill="none" stroke="#f4cd8a" stroke-width="1.25" stroke-linejoin="round" stroke-linecap="round" /><path d="M449.3,968.8 L461.7,975.1 L473.1,975.5 L481.9,977.0" fill="none" stroke="#f4cd8a" stroke-width="1.25" stroke-linejoin="round" stroke-linecap="round" /><path d="M449.3,968.8 L452.3,977.5 L452.9,983.8 L451.4,991.9" fill="none" stroke="#f4cd8a" stroke-width="1.25" stroke-linejoin="round" stroke-linecap="round" /><path d="M449.3,968.8 L456.2,978.1 L464.6,983.8 L477.5,994.0" fill="none" stroke="#f4cd8a" stroke-width="1.25" stroke-linejoin="round" stroke-linecap="round" /><path d="M451.4,991.9 L457.9,992.1 L472.9,995.5 L477.5,994.0" fill="none" stroke="#f4cd8a" stroke-width="1.25" stroke-linejoin="round" stroke-linecap="round" /><path d="M451.4,991.9 L455.5,1007.1 L456.7,1018.2 L466.9,1028.3" fill="none" stroke="#f4cd8a" stroke-width="1.25" stroke-linejoin="round" stroke-linecap="round" /><path d="M466.9,1028.3 L469.5,1022.1 L477.6,1015.2 L480.4,1014.9" fill="none" stroke="#f4cd8a" stroke-width="1.25" stroke-linejoin="round" stroke-linecap="round" /><path d="M466.9,1028.3 L467.4,1030.3 L464.4,1040.2 L461.7,1048.1" fill="none" stroke="#f4cd8a" stroke-width="1.25" stroke-linejoin="round" stroke-linecap="round" /><path d="M461.7,1048.1 L471.4,1049.9 L476.0,1045.2 L482.0,1041.0" fill="none" stroke="#f4cd8a" stroke-width="1.25" stroke-linejoin="round" stroke-linecap="round" /><path d="M493.5,601.3 L502.2,595.6 L514.0,603.3 L520.4,598.4" fill="none" stroke="#f4cd8a" stroke-width="1.25" stroke-linejoin="round" stroke-linecap="round" /><path d="M493.5,601.3 L490.5,606.6 L489.3,605.0 L486.7,613.5" fill="none" stroke="#f4cd8a" stroke-width="1.25" stroke-linejoin="round" stroke-linecap="round" /><path d="M486.7,613.5 L495.7,616.4 L498.4,611.7 L510.6,610.2" fill="none" stroke="#f4cd8a" stroke-width="1.25" stroke-linejoin="round" stroke-linecap="round" /><path d="M486.7,613.5 L481.7,621.6 L478.4,632.0 L475.0,646.9" fill="none" stroke="#f4cd8a" stroke-width="1.25" stroke-linejoin="round" stroke-linecap="round" /><path d="M475.0,646.9 L475.0,654.9 L483.1,672.5 L483.7,680.3" fill="none" stroke="#f4cd8a" stroke-width="1.25" stroke-linejoin="round" stroke-linecap="round" /><path d="M483.7,680.3 L490.0,675.5 L495.3,673.7 L506.9,664.9" fill="none" stroke="#f4cd8a" stroke-width="1.25" stroke-linejoin="round" stroke-linecap="round" /><path d="M483.7,680.3 L486.9,685.0 L490.7,694.6 L494.0,706.3" fill="none" stroke="#f4cd8a" stroke-width="1.25" stroke-linejoin="round" stroke-linecap="round" /><path d="M483.7,680.3 L489.8,666.4 L495.8,661.1 L506.3,651.5" fill="none" stroke="#f4cd8a" stroke-width="1.25" stroke-linejoin="round" stroke-linecap="round" /><path d="M494.0,706.3 L500.5,705.7 L507.0,701.6 L509.5,701.6" fill="none" stroke="#f4cd8a" stroke-width="1.25" stroke-linejoin="round" stroke-linecap="round" /><path d="M494.0,706.3 L487.3,718.3 L488.8,723.4 L478.8,736.7" fill="none" stroke="#f4cd8a" stroke-width="1.25" stroke-linejoin="round" stroke-linecap="round" /><path d="M478.8,736.7 L482.6,732.8 L495.4,729.7 L503.5,724.5" fill="none" stroke="#f4cd8a" stroke-width="1.25" stroke-linejoin="round" stroke-linecap="round" /><path d="M478.8,736.7 L479.6,742.4 L485.9,739.5 L486.3,744.8" fill="none" stroke="#f4cd8a" stroke-width="1.25" stroke-linejoin="round" stroke-linecap="round" /><path d="M478.2,790.2 L491.0,785.6 L500.9,790.8 L509.1,790.8" fill="none" stroke="#f4cd8a" stroke-width="1.25" stroke-linejoin="round" stroke-linecap="round" /><path d="M478.2,790.2 L485.6,793.8 L486.1,809.8 L489.9,812.8" fill="none" stroke="#f4cd8a" stroke-width="1.25" stroke-linejoin="round" stroke-linecap="round" /><path d="M489.9,812.8 L498.0,814.3 L497.1,809.3 L506.1,813.0" fill="none" stroke="#f4cd8a" stroke-width="1.25" stroke-linejoin="round" stroke-linecap="round" /><path d="M489.9,812.8 L488.5,820.0 L492.6,821.8 L487.2,825.5" fill="none" stroke="#f4cd8a" stroke-width="1.25" stroke-linejoin="round" stroke-linecap="round" /><path d="M489.9,812.8 L493.7,827.4 L494.1,832.6 L502.6,843.3" fill="none" stroke="#f4cd8a" stroke-width="1.25" stroke-linejoin="round" stroke-linecap="round" /><path d="M487.2,825.5 L489.5,826.9 L494.3,837.6 L502.6,843.3" fill="none" stroke="#f4cd8a" stroke-width="1.25" stroke-linejoin="round" stroke-linecap="round" /><path d="M487.2,825.5 L492.5,833.4 L492.4,851.4 L492.7,858.0" fill="none" stroke="#f4cd8a" stroke-width="1.25" stroke-linejoin="round" stroke-linecap="round" /><path d="M487.2,825.5 L495.4,832.5 L502.5,843.0 L511.9,855.5" fill="none" stroke="#f4cd8a" stroke-width="1.25" stroke-linejoin="round" stroke-linecap="round" /><path d="M492.7,858.0 L504.0,854.2 L503.5,857.7 L511.9,855.5" fill="none" stroke="#f4cd8a" stroke-width="1.25" stroke-linejoin="round" stroke-linecap="round" /><path d="M492.7,858.0 L488.4,866.9 L492.2,882.4 L489.4,889.8" fill="none" stroke="#f4cd8a" stroke-width="1.25" stroke-linejoin="round" stroke-linecap="round" /><path d="M489.4,889.8 L503.5,890.8 L504.1,889.8 L517.3,896.7" fill="none" stroke="#f4cd8a" stroke-width="1.25" stroke-linejoin="round" stroke-linecap="round" /><path d="M489.4,889.8 L492.0,903.1 L487.6,904.9 L483.8,916.5" fill="none" stroke="#f4cd8a" stroke-width="1.25" stroke-linejoin="round" stroke-linecap="round" /><path d="M489.4,889.8 L496.3,881.1 L499.7,867.1 L511.9,855.5" fill="none" stroke="#f4cd8a" stroke-width="1.25" stroke-linejoin="round" stroke-linecap="round" /><path d="M483.8,916.5 L491.6,921.8 L499.6,919.7 L503.6,923.6" fill="none" stroke="#f4cd8a" stroke-width="1.25" stroke-linejoin="round" stroke-linecap="round" /><path d="M483.8,916.5 L493.9,920.9 L509.9,932.1 L520.2,940.1" fill="none" stroke="#f4cd8a" stroke-width="1.25" stroke-linejoin="round" stroke-linecap="round" /><path d="M492.4,949.7 L497.7,949.0 L512.4,947.5 L520.2,940.1" fill="none" stroke="#f4cd8a" stroke-width="1.25" stroke-linejoin="round" stroke-linecap="round" /><path d="M492.4,949.7 L489.8,958.1 L489.2,965.9 L481.9,977.0" fill="none" stroke="#f4cd8a" stroke-width="1.25" stroke-linejoin="round" stroke-linecap="round" /><path d="M481.9,977.0 L492.9,972.2 L509.8,975.3 L516.8,974.4" fill="none" stroke="#f4cd8a" stroke-width="1.25" stroke-linejoin="round" stroke-linecap="round" /><path d="M481.9,977.0 L477.1,981.8 L477.5,985.2 L477.5,994.0" fill="none" stroke="#f4cd8a" stroke-width="1.25" stroke-linejoin="round" stroke-linecap="round" /><path d="M477.5,994.0 L484.8,999.2 L504.2,989.6 L512.3,994.7" fill="none" stroke="#f4cd8a" stroke-width="1.25" stroke-linejoin="round" stroke-linecap="round" /><path d="M477.5,994.0 L480.8,996.4 L483.4,1012.6 L480.4,1014.9" fill="none" stroke="#f4cd8a" stroke-width="1.25" stroke-linejoin="round" stroke-linecap="round" /><path d="M477.5,994.0 L485.7,1010.8 L495.2,1020.6 L507.3,1030.3" fill="none" stroke="#f4cd8a" stroke-width="1.25" stroke-linejoin="round" stroke-linecap="round" /><path d="M480.4,1014.9 L489.1,1018.4 L501.6,1021.0 L507.3,1030.3" fill="none" stroke="#f4cd8a" stroke-width="1.25" stroke-linejoin="round" stroke-linecap="round" /><path d="M480.4,1014.9 L476.2,1024.7 L481.2,1036.6 L482.0,1041.0" fill="none" stroke="#f4cd8a" stroke-width="1.25" stroke-linejoin="round" stroke-linecap="round" /><path d="M482.0,1041.0 L492.3,1048.2 L504.4,1056.0 L516.7,1059.9" fill="none" stroke="#f4cd8a" stroke-width="1.25" stroke-linejoin="round" stroke-linecap="round" /><path d="M520.4,598.4 L519.8,597.2 L526.7,599.0 L529.4,593.4" fill="none" stroke="#f4cd8a" stroke-width="1.25" stroke-linejoin="round" stroke-linecap="round" /><path d="M520.4,598.4 L516.1,604.3 L514.9,606.2 L510.6,610.2" fill="none" stroke="#f4cd8a" stroke-width="1.25" stroke-linejoin="round" stroke-linecap="round" /><path d="M510.6,610.2 L517.0,610.6 L531.9,614.6 L542.1,613.4" fill="none" stroke="#f4cd8a" stroke-width="1.25" stroke-linejoin="round" stroke-linecap="round" /><path d="M510.6,610.2 L507.5,628.6 L511.8,634.8 L506.3,651.5" fill="none" stroke="#f4cd8a" stroke-width="1.25" stroke-linejoin="round" stroke-linecap="round" /><path d="M506.3,651.5 L516.6,652.5 L525.3,652.4 L528.4,653.9" fill="none" stroke="#f4cd8a" stroke-width="1.25" stroke-linejoin="round" stroke-linecap="round" /><path d="M506.3,651.5 L505.4,657.9 L504.0,662.0 L506.9,664.9" fill="none" stroke="#f4cd8a" stroke-width="1.25" stroke-linejoin="round" stroke-linecap="round" /><path d="M506.9,664.9 L521.2,666.1 L530.2,677.8 L543.6,677.3" fill="none" stroke="#f4cd8a" stroke-width="1.25" stroke-linejoin="round" stroke-linecap="round" /><path d="M506.9,664.9 L503.5,681.8 L511.8,690.0 L509.5,701.6" fill="none" stroke="#f4cd8a" stroke-width="1.25" stroke-linejoin="round" stroke-linecap="round" /><path d="M509.5,701.6 L521.1,697.0 L524.9,699.7 L534.7,698.8" fill="none" stroke="#f4cd8a" stroke-width="1.25" stroke-linejoin="round" stroke-linecap="round" /><path d="M509.5,701.6 L503.6,710.7 L510.4,720.0 L503.5,724.5" fill="none" stroke="#f4cd8a" stroke-width="1.25" stroke-linejoin="round" stroke-linecap="round" /><path d="M503.5,724.5 L510.2,718.4 L523.0,709.0 L534.7,698.8" fill="none" stroke="#f4cd8a" stroke-width="1.25" stroke-linejoin="round" stroke-linecap="round" /><path d="M512.1,758.9 L524.1,758.8 L528.4,754.7 L542.5,758.1" fill="none" stroke="#f4cd8a" stroke-width="1.25" stroke-linejoin="round" stroke-linecap="round" /><path d="M512.1,758.9 L510.1,769.9 L514.6,777.1 L509.1,790.8" fill="none" stroke="#f4cd8a" stroke-width="1.25" stroke-linejoin="round" stroke-linecap="round" /><path d="M512.1,758.9 L520.8,766.5 L523.9,779.7 L537.3,790.1" fill="none" stroke="#f4cd8a" stroke-width="1.25" stroke-linejoin="round" stroke-linecap="round" /><path d="M509.1,790.8 L518.6,786.3 L527.3,786.2 L537.3,790.1" fill="none" stroke="#f4cd8a" stroke-width="1.25" stroke-linejoin="round" stroke-linecap="round" /><path d="M509.1,790.8 L511.7,802.3 L511.7,807.9 L506.1,813.0" fill="none" stroke="#f4cd8a" stroke-width="1.25" stroke-linejoin="round" stroke-linecap="round" /><path d="M506.1,813.0 L515.8,817.6 L528.8,818.9 L540.6,815.7" fill="none" stroke="#f4cd8a" stroke-width="1.25" stroke-linejoin="round" stroke-linecap="round" /><path d="M506.1,813.0 L502.4,824.5 L505.8,833.1 L502.6,843.3" fill="none" stroke="#f4cd8a" stroke-width="1.25" stroke-linejoin="round" stroke-linecap="round" /><path d="M506.1,813.0 L510.5,821.0 L519.6,829.9 L531.9,833.2" fill="none" stroke="#f4cd8a" stroke-width="1.25" stroke-linejoin="round" stroke-linecap="round" /><path d="M502.6,843.3 L510.1,844.0 L519.5,841.5 L531.9,833.2" fill="none" stroke="#f4cd8a" stroke-width="1.25" stroke-linejoin="round" stroke-linecap="round" /><path d="M502.6,843.3 L508.1,845.3 L513.2,852.4 L511.9,855.5" fill="none" stroke="#f4cd8a" stroke-width="1.25" stroke-linejoin="round" stroke-linecap="round" /><path d="M511.9,855.5 L517.0,856.4 L528.2,855.4 L533.8,862.0" fill="none" stroke="#f4cd8a" stroke-width="1.25" stroke-linejoin="round" stroke-linecap="round" /><path d="M511.9,855.5 L510.7,866.0 L513.0,878.2 L517.3,896.7" fill="none" stroke="#f4cd8a" stroke-width="1.25" stroke-linejoin="round" stroke-linecap="round" /><path d="M517.3,896.7 L530.5,898.4 L536.1,902.1 L543.1,898.8" fill="none" stroke="#f4cd8a" stroke-width="1.25" stroke-linejoin="round" stroke-linecap="round" /><path d="M503.6,923.6 L517.4,921.0 L534.4,920.8 L546.2,923.1" fill="none" stroke="#f4cd8a" stroke-width="1.25" stroke-linejoin="round" stroke-linecap="round" /><path d="M503.6,923.6 L508.6,924.3 L517.8,929.6 L520.2,940.1" fill="none" stroke="#f4cd8a" stroke-width="1.25" stroke-linejoin="round" stroke-linecap="round" /><path d="M503.6,923.6 L522.2,934.4 L528.1,936.9 L547.5,947.7" fill="none" stroke="#f4cd8a" stroke-width="1.25" stroke-linejoin="round" stroke-linecap="round" /><path d="M520.2,940.1 L526.6,941.1 L543.2,940.7 L547.5,947.7" fill="none" stroke="#f4cd8a" stroke-width="1.25" stroke-linejoin="round" stroke-linecap="round" /><path d="M520.2,940.1 L516.2,952.8 L513.0,965.5 L516.8,974.4" fill="none" stroke="#f4cd8a" stroke-width="1.25" stroke-linejoin="round" stroke-linecap="round" /><path d="M520.2,940.1 L533.6,938.0 L535.6,928.6 L546.2,923.1" fill="none" stroke="#f4cd8a" stroke-width="1.25" stroke-linejoin="round" stroke-linecap="round" /><path d="M516.8,974.4 L522.3,965.8 L532.5,963.5 L542.7,961.8" fill="none" stroke="#f4cd8a" stroke-width="1.25" stroke-linejoin="round" stroke-linecap="round" /><path d="M516.8,974.4 L510.9,978.0 L509.4,984.3 L512.3,994.7" fill="none" stroke="#f4cd8a" stroke-width="1.25" stroke-linejoin="round" stroke-linecap="round" /><path d="M512.3,994.7 L523.9,992.1 L525.5,991.5 L536.2,996.8" fill="none" stroke="#f4cd8a" stroke-width="1.25" stroke-linejoin="round" stroke-linecap="round" /><path d="M507.3,1030.3 L518.4,1034.9 L525.5,1031.8 L530.1,1032.0" fill="none" stroke="#f4cd8a" stroke-width="1.25" stroke-linejoin="round" stroke-linecap="round" /><path d="M507.3,1030.3 L507.6,1043.8 L513.7,1045.3 L516.7,1059.9" fill="none" stroke="#f4cd8a" stroke-width="1.25" stroke-linejoin="round" stroke-linecap="round" /><path d="M516.7,1059.9 L519.1,1060.1 L528.5,1051.3 L535.5,1045.9" fill="none" stroke="#f4cd8a" stroke-width="1.25" stroke-linejoin="round" stroke-linecap="round" /><path d="M529.4,593.4 L536.7,597.5 L547.4,595.1 L556.6,592.7" fill="none" stroke="#f4cd8a" stroke-width="1.25" stroke-linejoin="round" stroke-linecap="round" /><path d="M529.4,593.4 L531.1,604.1 L542.0,603.1 L542.1,613.4" fill="none" stroke="#f4cd8a" stroke-width="1.25" stroke-linejoin="round" stroke-linecap="round" /><path d="M529.4,593.4 L542.4,601.4 L554.6,616.3 L561.7,628.0" fill="none" stroke="#f4cd8a" stroke-width="1.25" stroke-linejoin="round" stroke-linecap="round" /><path d="M542.1,613.4 L546.4,618.8 L553.3,618.3 L561.7,628.0" fill="none" stroke="#f4cd8a" stroke-width="1.25" stroke-linejoin="round" stroke-linecap="round" /><path d="M542.1,613.4 L541.3,628.5 L532.6,643.9 L528.4,653.9" fill="none" stroke="#f4cd8a" stroke-width="1.25" stroke-linejoin="round" stroke-linecap="round" /><path d="M542.1,613.4 L547.8,622.4 L554.4,630.1 L567.7,644.6" fill="none" stroke="#f4cd8a" stroke-width="1.25" stroke-linejoin="round" stroke-linecap="round" /><path d="M528.4,653.9 L543.1,647.6 L558.7,651.9 L567.7,644.6" fill="none" stroke="#f4cd8a" stroke-width="1.25" stroke-linejoin="round" stroke-linecap="round" /><path d="M528.4,653.9 L530.5,660.1 L536.4,668.3 L543.6,677.3" fill="none" stroke="#f4cd8a" stroke-width="1.25" stroke-linejoin="round" stroke-linecap="round" /><path d="M543.6,677.3 L543.8,685.9 L533.4,688.3 L534.7,698.8" fill="none" stroke="#f4cd8a" stroke-width="1.25" stroke-linejoin="round" stroke-linecap="round" /><path d="M543.6,677.3 L549.2,668.1 L562.1,655.0 L567.7,644.6" fill="none" stroke="#f4cd8a" stroke-width="1.25" stroke-linejoin="round" stroke-linecap="round" /><path d="M534.7,698.8 L547.4,701.8 L556.7,699.7 L568.8,702.2" fill="none" stroke="#f4cd8a" stroke-width="1.25" stroke-linejoin="round" stroke-linecap="round" /><path d="M534.7,698.8 L538.7,701.8 L540.6,712.2 L544.3,718.9" fill="none" stroke="#f4cd8a" stroke-width="1.25" stroke-linejoin="round" stroke-linecap="round" /><path d="M544.3,718.9 L544.9,732.0 L539.8,743.5 L542.5,758.1" fill="none" stroke="#f4cd8a" stroke-width="1.25" stroke-linejoin="round" stroke-linecap="round" /><path d="M542.5,758.1 L544.6,764.4 L551.4,758.8 L563.2,762.1" fill="none" stroke="#f4cd8a" stroke-width="1.25" stroke-linejoin="round" stroke-linecap="round" /><path d="M542.5,758.1 L545.6,767.2 L536.9,779.3 L537.3,790.1" fill="none" stroke="#f4cd8a" stroke-width="1.25" stroke-linejoin="round" stroke-linecap="round" /><path d="M537.3,790.1 L539.3,789.3 L553.9,776.5 L556.1,775.6" fill="none" stroke="#f4cd8a" stroke-width="1.25" stroke-linejoin="round" stroke-linecap="round" /><path d="M540.6,815.7 L539.1,824.3 L538.1,828.4 L531.9,833.2" fill="none" stroke="#f4cd8a" stroke-width="1.25" stroke-linejoin="round" stroke-linecap="round" /><path d="M531.9,833.2 L546.3,832.4 L547.8,837.6 L561.6,833.6" fill="none" stroke="#f4cd8a" stroke-width="1.25" stroke-linejoin="round" stroke-linecap="round" /><path d="M531.9,833.2 L535.5,846.6 L536.0,854.3 L533.8,862.0" fill="none" stroke="#f4cd8a" stroke-width="1.25" stroke-linejoin="round" stroke-linecap="round" /><path d="M533.8,862.0 L546.0,861.8 L551.3,868.2 L560.9,867.2" fill="none" stroke="#f4cd8a" stroke-width="1.25" stroke-linejoin="round" stroke-linecap="round" /><path d="M533.8,862.0 L539.8,874.8 L541.8,888.3 L543.1,898.8" fill="none" stroke="#f4cd8a" stroke-width="1.25" stroke-linejoin="round" stroke-linecap="round" /><path d="M543.1,898.8 L546.3,892.0 L549.4,888.4 L556.9,890.1" fill="none" stroke="#f4cd8a" stroke-width="1.25" stroke-linejoin="round" stroke-linecap="round" /><path d="M543.1,898.8 L540.5,902.2 L540.7,911.0 L546.2,923.1" fill="none" stroke="#f4cd8a" stroke-width="1.25" stroke-linejoin="round" stroke-linecap="round" /><path d="M543.1,898.8 L547.8,901.6 L556.6,904.8 L569.3,912.9" fill="none" stroke="#f4cd8a" stroke-width="1.25" stroke-linejoin="round" stroke-linecap="round" /><path d="M546.2,923.1 L555.7,917.0 L563.1,914.1 L569.3,912.9" fill="none" stroke="#f4cd8a" stroke-width="1.25" stroke-linejoin="round" stroke-linecap="round" /><path d="M546.2,923.1 L544.2,927.2 L552.1,937.0 L547.5,947.7" fill="none" stroke="#f4cd8a" stroke-width="1.25" stroke-linejoin="round" stroke-linecap="round" /><path d="M546.2,923.1 L555.2,924.3 L557.8,931.7 L569.6,940.1" fill="none" stroke="#f4cd8a" stroke-width="1.25" stroke-linejoin="round" stroke-linecap="round" /><path d="M546.2,923.1 L548.5,910.4 L551.4,903.9 L556.9,890.1" fill="none" stroke="#f4cd8a" stroke-width="1.25" stroke-linejoin="round" stroke-linecap="round" /><path d="M547.5,947.7 L558.9,947.2 L566.1,941.9 L569.6,940.1" fill="none" stroke="#f4cd8a" stroke-width="1.25" stroke-linejoin="round" stroke-linecap="round" /><path d="M547.5,947.7 L546.7,957.4 L540.1,958.9 L542.7,961.8" fill="none" stroke="#f4cd8a" stroke-width="1.25" stroke-linejoin="round" stroke-linecap="round" /><path d="M542.7,961.8 L556.0,960.2 L563.4,961.7 L567.5,962.0" fill="none" stroke="#f4cd8a" stroke-width="1.25" stroke-linejoin="round" stroke-linecap="round" /><path d="M542.7,961.8 L540.9,971.4 L536.4,989.0 L536.2,996.8" fill="none" stroke="#f4cd8a" stroke-width="1.25" stroke-linejoin="round" stroke-linecap="round" /><path d="M536.2,996.8 L546.2,996.8 L555.6,998.8 L561.4,998.2" fill="none" stroke="#f4cd8a" stroke-width="1.25" stroke-linejoin="round" stroke-linecap="round" /><path d="M530.1,1032.0 L542.2,1025.6 L552.9,1021.9 L567.2,1023.3" fill="none" stroke="#f4cd8a" stroke-width="1.25" stroke-linejoin="round" stroke-linecap="round" /><path d="M556.6,592.7 L554.3,604.2 L560.9,621.1 L561.7,628.0" fill="none" stroke="#f4cd8a" stroke-width="1.25" stroke-linejoin="round" stroke-linecap="round" /><path d="M561.7,628.0 L567.3,622.0 L580.5,624.1 L586.2,621.4" fill="none" stroke="#f4cd8a" stroke-width="1.25" stroke-linejoin="round" stroke-linecap="round" /><path d="M561.7,628.0 L566.3,632.3 L562.7,634.8 L567.7,644.6" fill="none" stroke="#f4cd8a" stroke-width="1.25" stroke-linejoin="round" stroke-linecap="round" /><path d="M567.7,644.6 L578.6,647.1 L575.4,636.6 L586.6,638.0" fill="none" stroke="#f4cd8a" stroke-width="1.25" stroke-linejoin="round" stroke-linecap="round" /><path d="M567.7,644.6 L564.7,649.6 L558.5,655.2 L558.2,664.0" fill="none" stroke="#f4cd8a" stroke-width="1.25" stroke-linejoin="round" stroke-linecap="round" /><path d="M558.2,664.0 L569.0,670.1 L578.0,674.5 L583.5,675.5" fill="none" stroke="#f4cd8a" stroke-width="1.25" stroke-linejoin="round" stroke-linecap="round" /><path d="M558.2,664.0 L559.1,676.8 L567.6,687.2 L568.8,702.2" fill="none" stroke="#f4cd8a" stroke-width="1.25" stroke-linejoin="round" stroke-linecap="round" /><path d="M558.2,664.0 L565.0,654.2 L573.9,643.0 L586.6,638.0" fill="none" stroke="#f4cd8a" stroke-width="1.25" stroke-linejoin="round" stroke-linecap="round" /><path d="M568.8,702.2 L574.1,704.3 L589.8,700.8 L599.6,705.4" fill="none" stroke="#f4cd8a" stroke-width="1.25" stroke-linejoin="round" stroke-linecap="round" /><path d="M568.8,702.2 L566.6,711.0 L570.0,718.8 L564.9,727.1" fill="none" stroke="#f4cd8a" stroke-width="1.25" stroke-linejoin="round" stroke-linecap="round" /><path d="M568.8,702.2 L575.4,709.5 L589.3,721.1 L593.8,734.5" fill="none" stroke="#f4cd8a" stroke-width="1.25" stroke-linejoin="round" stroke-linecap="round" /><path d="M568.8,702.2 L573.2,691.7 L581.4,679.6 L583.5,675.5" fill="none" stroke="#f4cd8a" stroke-width="1.25" stroke-linejoin="round" stroke-linecap="round" /><path d="M564.9,727.1 L572.7,725.7 L584.3,736.0 L593.8,734.5" fill="none" stroke="#f4cd8a" stroke-width="1.25" stroke-linejoin="round" stroke-linecap="round" /><path d="M564.9,727.1 L577.9,716.4 L588.4,713.9 L599.6,705.4" fill="none" stroke="#f4cd8a" stroke-width="1.25" stroke-linejoin="round" stroke-linecap="round" /><path d="M563.2,762.1 L558.4,762.5 L561.0,769.7 L556.1,775.6" fill="none" stroke="#f4cd8a" stroke-width="1.25" stroke-linejoin="round" stroke-linecap="round" /><path d="M556.1,775.6 L568.3,775.7 L581.8,787.1 L589.6,790.5" fill="none" stroke="#f4cd8a" stroke-width="1.25" stroke-linejoin="round" stroke-linecap="round" /><path d="M570.9,804.3 L579.3,810.8 L589.0,812.8 L600.9,810.8" fill="none" stroke="#f4cd8a" stroke-width="1.25" stroke-linejoin="round" stroke-linecap="round" /><path d="M570.9,804.3 L567.4,818.7 L566.1,824.1 L561.6,833.6" fill="none" stroke="#f4cd8a" stroke-width="1.25" stroke-linejoin="round" stroke-linecap="round" /><path d="M570.9,804.3 L577.7,809.8 L587.4,827.4 L594.6,831.8" fill="none" stroke="#f4cd8a" stroke-width="1.25" stroke-linejoin="round" stroke-linecap="round" /><path d="M561.6,833.6 L572.9,844.1 L573.1,846.7 L583.8,858.6" fill="none" stroke="#f4cd8a" stroke-width="1.25" stroke-linejoin="round" stroke-linecap="round" /><path d="M560.9,867.2 L562.3,876.2 L554.5,884.5 L556.9,890.1" fill="none" stroke="#f4cd8a" stroke-width="1.25" stroke-linejoin="round" stroke-linecap="round" /><path d="M560.9,867.2 L571.7,850.8 L587.1,839.0 L594.6,831.8" fill="none" stroke="#f4cd8a" stroke-width="1.25" stroke-linejoin="round" stroke-linecap="round" /><path d="M569.3,912.9 L568.1,921.7 L566.1,932.9 L569.6,940.1" fill="none" stroke="#f4cd8a" stroke-width="1.25" stroke-linejoin="round" stroke-linecap="round" /><path d="M569.6,940.1 L578.1,941.3 L594.9,934.2 L600.2,933.0" fill="none" stroke="#f4cd8a" stroke-width="1.25" stroke-linejoin="round" stroke-linecap="round" /><path d="M569.6,940.1 L572.6,949.5 L563.6,954.7 L567.5,962.0" fill="none" stroke="#f4cd8a" stroke-width="1.25" stroke-linejoin="round" stroke-linecap="round" /><path d="M567.5,962.0 L578.0,961.2 L578.4,962.3 L586.1,962.0" fill="none" stroke="#f4cd8a" stroke-width="1.25" stroke-linejoin="round" stroke-linecap="round" /><path d="M567.5,962.0 L564.5,972.2 L560.2,989.5 L561.4,998.2" fill="none" stroke="#f4cd8a" stroke-width="1.25" stroke-linejoin="round" stroke-linecap="round" /><path d="M561.4,998.2 L567.9,998.4 L576.9,1004.2 L589.4,1005.3" fill="none" stroke="#f4cd8a" stroke-width="1.25" stroke-linejoin="round" stroke-linecap="round" /><path d="M561.4,998.2 L559.6,1009.8 L561.6,1019.7 L567.2,1023.3" fill="none" stroke="#f4cd8a" stroke-width="1.25" stroke-linejoin="round" stroke-linecap="round" /><path d="M567.2,1023.3 L567.2,1031.1 L559.9,1041.8 L555.7,1051.8" fill="none" stroke="#f4cd8a" stroke-width="1.25" stroke-linejoin="round" stroke-linecap="round" /><path d="M555.7,1051.8 L564.5,1052.5 L579.4,1049.4 L585.7,1048.1" fill="none" stroke="#f4cd8a" stroke-width="1.25" stroke-linejoin="round" stroke-linecap="round" /><path d="M599.3,587.4 L591.8,599.8 L588.2,608.8 L586.2,621.4" fill="none" stroke="#f4cd8a" stroke-width="1.25" stroke-linejoin="round" stroke-linecap="round" /><path d="M586.6,638.0 L583.9,652.1 L585.6,666.5 L583.5,675.5" fill="none" stroke="#f4cd8a" stroke-width="1.25" stroke-linejoin="round" stroke-linecap="round" /><path d="M583.5,675.5 L586.5,682.2 L590.7,694.4 L599.6,705.4" fill="none" stroke="#f4cd8a" stroke-width="1.25" stroke-linejoin="round" stroke-linecap="round" /><path d="M599.6,705.4 L601.0,712.1 L597.8,721.7 L593.8,734.5" fill="none" stroke="#f4cd8a" stroke-width="1.25" stroke-linejoin="round" stroke-linecap="round" /><path d="M593.8,734.5 L591.8,736.8 L600.4,746.6 L599.0,749.4" fill="none" stroke="#f4cd8a" stroke-width="1.25" stroke-linejoin="round" stroke-linecap="round" /><path d="M599.0,749.4 L599.7,759.2 L590.7,778.5 L589.6,790.5" fill="none" stroke="#f4cd8a" stroke-width="1.25" stroke-linejoin="round" stroke-linecap="round" /><path d="M589.6,790.5 L592.8,796.5 L593.9,801.8 L600.9,810.8" fill="none" stroke="#f4cd8a" stroke-width="1.25" stroke-linejoin="round" stroke-linecap="round" /><path d="M600.9,810.8 L599.2,816.2 L597.4,823.1 L594.6,831.8" fill="none" stroke="#f4cd8a" stroke-width="1.25" stroke-linejoin="round" stroke-linecap="round" /><path d="M594.6,831.8 L594.8,841.9 L590.8,849.3 L583.8,858.6" fill="none" stroke="#f4cd8a" stroke-width="1.25" stroke-linejoin="round" stroke-linecap="round" /><path d="M583.8,858.6 L588.7,866.6 L581.4,883.1 L586.6,891.6" fill="none" stroke="#f4cd8a" stroke-width="1.25" stroke-linejoin="round" stroke-linecap="round" /><path d="M586.6,891.6 L589.6,899.9 L587.8,909.1 L595.1,918.6" fill="none" stroke="#f4cd8a" stroke-width="1.25" stroke-linejoin="round" stroke-linecap="round" /><path d="M595.1,918.6 L598.8,926.8 L597.7,928.8 L600.2,933.0" fill="none" stroke="#f4cd8a" stroke-width="1.25" stroke-linejoin="round" stroke-linecap="round" /><path d="M600.2,933.0 L596.5,947.4 L588.2,953.3 L586.1,962.0" fill="none" stroke="#f4cd8a" stroke-width="1.25" stroke-linejoin="round" stroke-linecap="round" /><path d="M586.1,962.0 L591.4,972.0 L587.6,989.5 L589.4,1005.3" fill="none" stroke="#f4cd8a" stroke-width="1.25" stroke-linejoin="round" stroke-linecap="round" /><path d="M589.4,1005.3 L587.6,1010.3 L591.0,1024.9 L591.4,1030.0" fill="none" stroke="#f4cd8a" stroke-width="1.25" stroke-linejoin="round" stroke-linecap="round" /><path d="M25.0,726.0 L97.0,723.0 L121.0,729.0 L156.0,732.0 L185.0,723.0 L207.0,717.0 L229.0,719.0 L263.0,713.0 L301.0,711.0 L330.0,725.0 L358.0,732.0 L386.0,734.0 L418.0,743.5 L434.0,757.0 L444.0,771.0 L466.0,803.0 L510.0,815.0 L556.0,828.0" fill="none" stroke="#f7c47a" stroke-width="2.6" stroke-linejoin="round" stroke-linecap="round" /><path d="M235.0,619.0 L236.0,660.0 L232.0,700.0 L229.0,719.0 L226.0,772.0 L237.0,795.0 L248.0,817.0 L250.0,836.0 L263.0,855.0 L269.0,900.0 L271.0,923.0 L282.0,944.0 L300.0,966.0 L310.0,1020.0" fill="none" stroke="#f7c47a" stroke-width="2.6" stroke-linejoin="round" stroke-linecap="round" /><path d="M250.0,836.0 L286.0,823.0 L301.0,811.5 L330.0,794.5 L367.0,772.0 L415.0,755.0 L434.0,753.0 L444.0,771.0" fill="none" stroke="#f7c47a" stroke-width="2.6" stroke-linejoin="round" stroke-linecap="round" /><path d="M25.0,815.0 L55.0,817.0 L107.0,834.0 L169.0,838.0 L216.0,840.0 L248.0,836.0 L294.0,846.0 L339.0,855.0 L358.0,870.0 L377.0,900.0 L400.0,895.0 L428.0,880.0" fill="none" stroke="#f7c47a" stroke-width="2.6" stroke-linejoin="round" stroke-linecap="round" /><path d="M271.0,923.0 L322.0,929.0 L389.0,917.0 L445.0,907.0 L506.0,889.0 L543.0,880.0 L556.0,878.0" fill="none" stroke="#f7c47a" stroke-width="2.6" stroke-linejoin="round" stroke-linecap="round" /><path d="M25.0,972.0 L107.0,972.0 L211.0,969.0 L291.0,960.0 L337.0,975.0 L398.0,984.0 L423.0,990.0" fill="none" stroke="#f7c47a" stroke-width="2.6" stroke-linejoin="round" stroke-linecap="round" /><path d="M447.0,619.0 L445.0,693.0 L444.0,771.0 L441.0,809.0 L426.0,892.0 L417.0,984.0 L423.0,1000.0" fill="none" stroke="#f7c47a" stroke-width="2.6" stroke-linejoin="round" stroke-linecap="round" /><path d="M430.0,990.0 L472.0,960.0 L518.0,932.0 L556.0,915.0" fill="none" stroke="#f7c47a" stroke-width="2.6" stroke-linejoin="round" stroke-linecap="round" /><path d="M518.0,932.0 L530.0,905.0 L543.0,880.0 L550.0,840.0 L556.0,820.0" fill="none" stroke="#f7c47a" stroke-width="2.6" stroke-linejoin="round" stroke-linecap="round" /><path d="M94.0,708.0 L86.0,739.0 L72.0,760.0 L84.0,780.0 L121.0,820.0" fill="none" stroke="#f7c47a" stroke-width="2.3" stroke-linejoin="round" stroke-linecap="round" /><path d="M121.0,820.0 L139.0,831.0 L139.0,942.0 L150.0,972.0" fill="none" stroke="#f7c47a" stroke-width="2.2" stroke-linejoin="round" stroke-linecap="round" /><path d="M25.0,700.0 L60.0,702.0 L94.0,708.0 L120.0,703.0 L150.0,700.0" fill="none" stroke="#f7c47a" stroke-width="2.2" stroke-linejoin="round" stroke-linecap="round" /><path d="M271.0,923.0 L264.0,963.0 L255.0,1020.0" fill="none" stroke="#f7c47a" stroke-width="2.3" stroke-linejoin="round" stroke-linecap="round" /><path d="M423.0,990.0 L400.0,1000.0 L380.0,1020.0" fill="none" stroke="#f7c47a" stroke-width="2.3" stroke-linejoin="round" stroke-linecap="round" /><path d="M423.0,990.0 L440.0,1010.0 L450.0,1020.0" fill="none" stroke="#f7c47a" stroke-width="2.3" stroke-linejoin="round" stroke-linecap="round" /><path d="M556.0,960.0 L520.0,985.0 L490.0,1000.0 L460.0,1015.0" fill="none" stroke="#f7c47a" stroke-width="1.8" stroke-linejoin="round" stroke-linecap="round" /><path d="M120.0,1020.0 L150.0,1000.0 L200.0,990.0 L260.0,1000.0 L300.0,1020.0" fill="none" stroke="#f7c47a" stroke-width="1.8" stroke-linejoin="round" stroke-linecap="round" /><path d="M405.0,1020.0 L420.0,1005.0 L445.0,998.0 L475.0,990.0 L505.0,985.0 L556.0,978.0" fill="none" stroke="#f7c47a" stroke-width="1.8" stroke-linejoin="round" stroke-linecap="round" /><path d="M25.0,760.0 L60.0,770.0 L100.0,790.0 L140.0,800.0 L195.0,797.0" fill="none" stroke="#f7c47a" stroke-width="1.8" stroke-linejoin="round" stroke-linecap="round" /><path d="M330.0,619.0 L335.0,660.0 L340.0,700.0 L358.0,732.0" fill="none" stroke="#f7c47a" stroke-width="1.6" stroke-linejoin="round" stroke-linecap="round" /><path d="M466.0,803.0 L470.0,850.0 L468.0,900.0 L472.0,960.0" fill="none" stroke="#f7c47a" stroke-width="1.6" stroke-linejoin="round" stroke-linecap="round" /><path d="M25.0,852.0 L110.0,852.0 L200.0,853.0 L290.0,855.0 L300.0,860.0" fill="none" stroke="#a8a8a8" stroke-width="1.2" stroke-linejoin="round" stroke-linecap="round" stroke-dasharray="5,3"/><path d="M294.0,852.0 L302.0,858.0 L306.0,866.0 L312.0,872.0 L320.0,878.0 L326.0,886.0 L329.0,896.0 L333.0,908.0 L334.0,916.0 L342.0,920.0 L353.0,924.0" fill="none" stroke="#7f9a6c" stroke-width="1.1" stroke-linejoin="round" stroke-linecap="round" /><path d="M353.0,924.0 L380.0,940.0 L405.0,955.0 L432.0,971.0" fill="none" stroke="#a0a0a0" stroke-width="1.0" stroke-linejoin="round" stroke-linecap="round" stroke-dasharray="5,3"/><path d="M488.0,660.0 L490.0,700.0 L486.0,760.0 L475.0,800.0 L470.0,850.0 L466.0,905.0 L467.0,935.0 L455.0,955.0" fill="none" stroke="#a8a8a8" stroke-width="1.2" stroke-linejoin="round" stroke-linecap="round" stroke-dasharray="5,3"/><path d="M470.0,845.0 L520.0,845.0 L556.0,846.0" fill="none" stroke="#a8a8a8" stroke-width="1.0" stroke-linejoin="round" stroke-linecap="round" stroke-dasharray="6,2,2,2"/><path d="M455.0,955.0 L430.0,985.0" fill="none" stroke="#a8a8a8" stroke-width="1.0" stroke-linejoin="round" stroke-linecap="round" stroke-dasharray="5,3"/><path d="M460.0,1000.0 L555.0,958.0" fill="none" stroke="#8e9fb5" stroke-width="1.0" stroke-linejoin="round" stroke-linecap="round" stroke-dasharray="5,3"/><path d="M486.0,760.0 L556.0,763.0" fill="none" stroke="#a8a8a8" stroke-width="1.0" stroke-linejoin="round" stroke-linecap="round" stroke-dasharray="5,3"/><path d="M229.5,621.5 L244.5,621.5 L244.5,627.5 Q244.5,632.5 237,634.5 Q229.5,632.5 229.5,627.5 Z" fill="#3b70c4" stroke="#fff" stroke-width="0.8"/><path d="M229.5,621.5 L244.5,621.5 L244.5,619.0 Q240.75,620.5 237,618.5 Q233.25,620.5 229.5,619.0 Z" fill="#d44a44"/><text x="237" y="630.7" text-anchor="middle" font-family="Liberation Sans" font-weight="bold" font-size="9.5" fill="#fff">81</text><path d="M75.5,732.5 L94.5,732.5 L94.5,738.5 Q94.5,743.5 85,745.5 Q75.5,743.5 75.5,738.5 Z" fill="#3b70c4" stroke="#fff" stroke-width="0.8"/><path d="M75.5,732.5 L94.5,732.5 L94.5,730.0 Q89.75,731.5 85,729.5 Q80.25,731.5 75.5,730.0 Z" fill="#d44a44"/><text x="85" y="741.7" text-anchor="middle" font-family="Liberation Sans" font-weight="bold" font-size="9.5" fill="#fff">390</text><path d="M230.5,794.5 L245.5,794.5 L245.5,800.5 Q245.5,805.5 238,807.5 Q230.5,805.5 230.5,800.5 Z" fill="#3b70c4" stroke="#fff" stroke-width="0.8"/><path d="M230.5,794.5 L245.5,794.5 L245.5,792.0 Q241.75,793.5 238,791.5 Q234.25,793.5 230.5,792.0 Z" fill="#d44a44"/><text x="238" y="803.7" text-anchor="middle" font-family="Liberation Sans" font-weight="bold" font-size="9.5" fill="#fff">81</text><path d="M47.5,810.5 L62.5,810.5 L62.5,816.5 Q62.5,821.5 55,823.5 Q47.5,821.5 47.5,816.5 Z" fill="#3b70c4" stroke="#fff" stroke-width="0.8"/><path d="M47.5,810.5 L62.5,810.5 L62.5,808.0 Q58.75,809.5 55,807.5 Q51.25,809.5 47.5,808.0 Z" fill="#d44a44"/><text x="55" y="819.7" text-anchor="middle" font-family="Liberation Sans" font-weight="bold" font-size="9.5" fill="#fff">86</text><path d="M280.5,810.5 L295.5,810.5 L295.5,816.5 Q295.5,821.5 288,823.5 Q280.5,821.5 280.5,816.5 Z" fill="#3b70c4" stroke="#fff" stroke-width="0.8"/><path d="M280.5,810.5 L295.5,810.5 L295.5,808.0 Q291.75,809.5 288,807.5 Q284.25,809.5 280.5,808.0 Z" fill="#d44a44"/><text x="288" y="819.7" text-anchor="middle" font-family="Liberation Sans" font-weight="bold" font-size="9.5" fill="#fff">88</text><path d="M455.5,793.5 L470.5,793.5 L470.5,799.5 Q470.5,804.5 463,806.5 Q455.5,804.5 455.5,799.5 Z" fill="#3b70c4" stroke="#fff" stroke-width="0.8"/><path d="M455.5,793.5 L470.5,793.5 L470.5,791.0 Q466.75,792.5 463,790.5 Q459.25,792.5 455.5,791.0 Z" fill="#d44a44"/><text x="463" y="802.7" text-anchor="middle" font-family="Liberation Sans" font-weight="bold" font-size="9.5" fill="#fff">90</text><path d="M437.5,645.5 L452.5,645.5 L452.5,651.5 Q452.5,656.5 445,658.5 Q437.5,656.5 437.5,651.5 Z" fill="#3b70c4" stroke="#fff" stroke-width="0.8"/><path d="M437.5,645.5 L452.5,645.5 L452.5,643.0 Q448.75,644.5 445,642.5 Q441.25,644.5 437.5,643.0 Z" fill="#d44a44"/><text x="445" y="654.7" text-anchor="middle" font-family="Liberation Sans" font-weight="bold" font-size="9.5" fill="#fff">87</text><path d="M167.5,841.5 L182.5,841.5 L182.5,847.5 Q182.5,852.5 175,854.5 Q167.5,852.5 167.5,847.5 Z" fill="#3b70c4" stroke="#fff" stroke-width="0.8"/><path d="M167.5,841.5 L182.5,841.5 L182.5,839.0 Q178.75,840.5 175,838.5 Q171.25,840.5 167.5,839.0 Z" fill="#d44a44"/><text x="175" y="850.7" text-anchor="middle" font-family="Liberation Sans" font-weight="bold" font-size="9.5" fill="#fff">86</text><path d="M257.5,858.5 L272.5,858.5 L272.5,864.5 Q272.5,869.5 265,871.5 Q257.5,869.5 257.5,864.5 Z" fill="#3b70c4" stroke="#fff" stroke-width="0.8"/><path d="M257.5,858.5 L272.5,858.5 L272.5,856.0 Q268.75,857.5 265,855.5 Q261.25,857.5 257.5,856.0 Z" fill="#d44a44"/><text x="265" y="867.7" text-anchor="middle" font-family="Liberation Sans" font-weight="bold" font-size="9.5" fill="#fff">81</text><path d="M381.5,912.5 L396.5,912.5 L396.5,918.5 Q396.5,923.5 389,925.5 Q381.5,923.5 381.5,918.5 Z" fill="#3b70c4" stroke="#fff" stroke-width="0.8"/><path d="M381.5,912.5 L396.5,912.5 L396.5,910.0 Q392.75,911.5 389,909.5 Q385.25,911.5 381.5,910.0 Z" fill="#d44a44"/><text x="389" y="921.7" text-anchor="middle" font-family="Liberation Sans" font-weight="bold" font-size="9.5" fill="#fff">84</text><path d="M277.5,941.5 L296.5,941.5 L296.5,947.5 Q296.5,952.5 287,954.5 Q277.5,952.5 277.5,947.5 Z" fill="#3b70c4" stroke="#fff" stroke-width="0.8"/><path d="M277.5,941.5 L296.5,941.5 L296.5,939.0 Q291.75,940.5 287,938.5 Q282.25,940.5 277.5,939.0 Z" fill="#d44a44"/><text x="287" y="950.7" text-anchor="middle" font-family="Liberation Sans" font-weight="bold" font-size="9.5" fill="#fff">380</text><path d="M254.5,958.5 L273.5,958.5 L273.5,964.5 Q273.5,969.5 264,971.5 Q254.5,969.5 254.5,964.5 Z" fill="#3b70c4" stroke="#fff" stroke-width="0.8"/><path d="M254.5,958.5 L273.5,958.5 L273.5,956.0 Q268.75,957.5 264,955.5 Q259.25,957.5 254.5,956.0 Z" fill="#d44a44"/><text x="264" y="967.7" text-anchor="middle" font-family="Liberation Sans" font-weight="bold" font-size="9.5" fill="#fff">476</text><path d="M35.5,970.5 L50.5,970.5 L50.5,976.5 Q50.5,981.5 43,983.5 Q35.5,981.5 35.5,976.5 Z" fill="#3b70c4" stroke="#fff" stroke-width="0.8"/><path d="M35.5,970.5 L50.5,970.5 L50.5,968.0 Q46.75,969.5 43,967.5 Q39.25,969.5 35.5,968.0 Z" fill="#d44a44"/><text x="43" y="979.7" text-anchor="middle" font-family="Liberation Sans" font-weight="bold" font-size="9.5" fill="#fff">80</text><path d="M203.5,967.5 L218.5,967.5 L218.5,973.5 Q218.5,978.5 211,980.5 Q203.5,978.5 203.5,973.5 Z" fill="#3b70c4" stroke="#fff" stroke-width="0.8"/><path d="M203.5,967.5 L218.5,967.5 L218.5,965.0 Q214.75,966.5 211,964.5 Q207.25,966.5 203.5,965.0 Z" fill="#d44a44"/><text x="211" y="976.7" text-anchor="middle" font-family="Liberation Sans" font-weight="bold" font-size="9.5" fill="#fff">80</text><path d="M329.5,976.5 L344.5,976.5 L344.5,982.5 Q344.5,987.5 337,989.5 Q329.5,987.5 329.5,982.5 Z" fill="#3b70c4" stroke="#fff" stroke-width="0.8"/><path d="M329.5,976.5 L344.5,976.5 L344.5,974.0 Q340.75,975.5 337,973.5 Q333.25,975.5 329.5,974.0 Z" fill="#d44a44"/><text x="337" y="985.7" text-anchor="middle" font-family="Liberation Sans" font-weight="bold" font-size="9.5" fill="#fff">80</text><path d="M498.5,941.5 L513.5,941.5 L513.5,947.5 Q513.5,952.5 506,954.5 Q498.5,952.5 498.5,947.5 Z" fill="#3b70c4" stroke="#fff" stroke-width="0.8"/><path d="M498.5,941.5 L513.5,941.5 L513.5,939.0 Q509.75,940.5 506,938.5 Q502.25,940.5 498.5,939.0 Z" fill="#d44a44"/><text x="506" y="950.7" text-anchor="middle" font-family="Liberation Sans" font-weight="bold" font-size="9.5" fill="#fff">95</text><path d="M464.5,956.5 L479.5,956.5 L479.5,962.5 Q479.5,967.5 472,969.5 Q464.5,967.5 464.5,962.5 Z" fill="#3b70c4" stroke="#fff" stroke-width="0.8"/><path d="M464.5,956.5 L479.5,956.5 L479.5,954.0 Q475.75,955.5 472,953.5 Q468.25,955.5 464.5,954.0 Z" fill="#d44a44"/><text x="472" y="965.7" text-anchor="middle" font-family="Liberation Sans" font-weight="bold" font-size="9.5" fill="#fff">95</text><path d="M378.5,1007.5 L393.5,1007.5 L393.5,1013.5 Q393.5,1018.5 386,1020.5 Q378.5,1018.5 378.5,1013.5 Z" fill="#3b70c4" stroke="#fff" stroke-width="0.8"/><path d="M378.5,1007.5 L393.5,1007.5 L393.5,1005.0 Q389.75,1006.5 386,1004.5 Q382.25,1006.5 378.5,1005.0 Z" fill="#d44a44"/><text x="386" y="1016.7" text-anchor="middle" font-family="Liberation Sans" font-weight="bold" font-size="9.5" fill="#fff">78</text><circle cx="93.6" cy="707.6" r="2.6" fill="#fff" stroke="#444" stroke-width="1.2"/><circle cx="227" cy="721.7" r="2.6" fill="#fff" stroke="#444" stroke-width="1.2"/><circle cx="195" cy="797" r="2.6" fill="#fff" stroke="#444" stroke-width="1.2"/><circle cx="441.4" cy="716.6" r="2.6" fill="#fff" stroke="#444" stroke-width="1.2"/><circle cx="444.5" cy="771" r="2.6" fill="#fff" stroke="#444" stroke-width="1.2"/><circle cx="550" cy="839" r="2.6" fill="#fff" stroke="#444" stroke-width="1.2"/><circle cx="271" cy="924" r="2.6" fill="#fff" stroke="#444" stroke-width="1.2"/><circle cx="542" cy="880" r="2.6" fill="#fff" stroke="#444" stroke-width="1.2"/><circle cx="518" cy="934.7" r="2.6" fill="#fff" stroke="#444" stroke-width="1.2"/><circle cx="423" cy="1007.6" r="2.6" fill="#fff" stroke="#444" stroke-width="1.2"/><text x="66.5" y="701" text-anchor="start" font-family="Liberation Sans" font-size="12.3" font-weight="normal" font-style="normal" letter-spacing="0" fill="#333" stroke="#fff" stroke-width="2.5" stroke-linejoin="round" paint-order="stroke">Rochester</text><text x="202" y="715" text-anchor="start" font-family="Liberation Sans" font-size="12.3" font-weight="normal" font-style="normal" letter-spacing="0" fill="#333" stroke="#fff" stroke-width="2.5" stroke-linejoin="round" paint-order="stroke">Syracuse</text><text x="183" y="746.5" text-anchor="start" font-family="Liberation Sans" font-size="16" font-weight="bold" font-style="normal" letter-spacing="4.2" fill="#8e836f" >NEW YORK</text><text x="180.5" y="791.5" text-anchor="start" font-family="Liberation Sans" font-size="11.5" font-weight="normal" font-style="normal" letter-spacing="0" fill="#333" stroke="#fff" stroke-width="2.5" stroke-linejoin="round" paint-order="stroke">Ithaca</text><text x="441.4" y="701.3" text-anchor="middle" font-family="Liberation Sans" font-size="11.5" font-weight="normal" font-style="normal" letter-spacing="0" fill="#333" stroke="#fff" stroke-width="2.5" stroke-linejoin="round" paint-order="stroke">Saratoga</text><text x="441.4" y="712.6" text-anchor="middle" font-family="Liberation Sans" font-size="11.5" font-weight="normal" font-style="normal" letter-spacing="0" fill="#333" stroke="#fff" stroke-width="2.5" stroke-linejoin="round" paint-order="stroke">Springs</text><text x="426" y="765.4" text-anchor="start" font-family="Liberation Sans" font-size="12.3" font-weight="normal" font-style="normal" letter-spacing="0" fill="#333" stroke="#fff" stroke-width="2.5" stroke-linejoin="round" paint-order="stroke">Albany</text><text x="513.5" y="705.0" text-anchor="middle" font-family="Liberation Sans" font-size="13" font-weight="normal" font-style="italic" letter-spacing="0" fill="#4e8c2a" stroke="#fff" stroke-width="2.5" stroke-linejoin="round" paint-order="stroke">Green</text><text x="513.5" y="719.2" text-anchor="middle" font-family="Liberation Sans" font-size="13" font-weight="normal" font-style="italic" letter-spacing="0" fill="#4e8c2a" stroke="#fff" stroke-width="2.5" stroke-linejoin="round" paint-order="stroke">Mountain</text><text x="513.5" y="733.4" text-anchor="middle" font-family="Liberation Sans" font-size="13" font-weight="normal" font-style="italic" letter-spacing="0" fill="#4e8c2a" stroke="#fff" stroke-width="2.5" stroke-linejoin="round" paint-order="stroke">and Finger</text><text x="513.5" y="747.6" text-anchor="middle" font-family="Liberation Sans" font-size="13" font-weight="normal" font-style="italic" letter-spacing="0" fill="#4e8c2a" stroke="#fff" stroke-width="2.5" stroke-linejoin="round" paint-order="stroke">Lakes...</text><text x="522.5" y="792.5" text-anchor="start" font-family="Liberation Sans" font-size="16" font-weight="bold" font-style="normal" letter-spacing="4.2" fill="#8e836f" >MA</text><text x="521" y="832" text-anchor="start" font-family="Liberation Sans" font-size="12.3" font-weight="normal" font-style="normal" letter-spacing="0" fill="#333" stroke="#fff" stroke-width="2.5" stroke-linejoin="round" paint-order="stroke">Spring</text><text x="247" y="918" text-anchor="start" font-family="Liberation Sans" font-size="12.3" font-weight="normal" font-style="normal" letter-spacing="0" fill="#333" stroke="#fff" stroke-width="2.5" stroke-linejoin="round" paint-order="stroke">Scranton</text><text x="519.5" y="873.5" text-anchor="start" font-family="Liberation Sans" font-size="12.3" font-weight="normal" font-style="normal" letter-spacing="0" fill="#333" stroke="#fff" stroke-width="2.5" stroke-linejoin="round" paint-order="stroke">Hartford</text><text x="467.5" y="904.5" text-anchor="start" font-family="Liberation Sans" font-size="16" font-weight="bold" font-style="normal" letter-spacing="4.2" fill="#8e836f" >CONNECTICUT</text><text x="489" y="929" text-anchor="start" font-family="Liberation Sans" font-size="12.3" font-weight="normal" font-style="normal" letter-spacing="0" fill="#333" stroke="#fff" stroke-width="2.5" stroke-linejoin="round" paint-order="stroke">New Haven</text><text x="29" y="996.5" text-anchor="start" font-family="Liberation Sans" font-size="16" font-weight="bold" font-style="normal" letter-spacing="4.6" fill="#8e836f" >NNSYLVANIA</text><text x="391.5" y="1001" text-anchor="start" font-family="Liberation Sans" font-size="14.5" font-weight="bold" font-style="normal" letter-spacing="0" fill="#222" stroke="#fff" stroke-width="2.5" stroke-linejoin="round" paint-order="stroke">New York</text><text x="473.5" y="1001" text-anchor="start" font-family="Liberation Sans" font-size="11.5" font-weight="normal" font-style="italic" letter-spacing="0" fill="#444" stroke="#fff" stroke-width="2.5" stroke-linejoin="round" paint-order="stroke">Long Island</text><text x="259" y="1015" text-anchor="start" font-family="Liberation Sans" font-size="12.3" font-weight="normal" font-style="normal" letter-spacing="0" fill="#333" stroke="#fff" stroke-width="2.5" stroke-linejoin="round" paint-order="stroke">Al</text><rect x="270" y="1005" width="286" height="15" fill="#ffffff" fill-opacity="0.55"/><text x="273.5" y="1017" font-family="Liberation Sans" font-size="10" fill="#444">Map data ©2017 Google</text><text x="395" y="1017" font-family="Liberation Sans" font-size="10" fill="#444">Terms of Use</text><text x="465.5" y="1017" font-family="Liberation Sans" font-size="10" fill="#444">Report a map error</text><text x="35" y="986" font-family="Liberation Sans" font-size="12" font-weight="bold" fill="#000">50 mi</text><text x="35" y="1000" font-family="Liberation Sans" font-size="12" font-weight="bold" fill="#000">50 km</text><rect x="85" y="981" width="89" height="3" fill="#000"/><rect x="85" y="995" width="55" height="3" fill="#000"/><text x="31.5" y="1012.5" font-family="Liberation Sans" font-size="18" font-weight="bold" fill="#4285f4" stroke="#fff" stroke-width="0.8" paint-order="stroke">G</text><text x="44.5" y="1012.5" font-family="Liberation Sans" font-size="18" font-weight="bold" fill="#ea4335" stroke="#fff" stroke-width="0.8" paint-order="stroke">o</text><text x="54.7" y="1012.5" font-family="Liberation Sans" font-size="18" font-weight="bold" fill="#fbbc05" stroke="#fff" stroke-width="0.8" paint-order="stroke">o</text><text x="64.9" y="1012.5" font-family="Liberation Sans" font-size="18" font-weight="bold" fill="#4285f4" stroke="#fff" stroke-width="0.8" paint-order="stroke">g</text><text x="75.10000000000001" y="1012.5" font-family="Liberation Sans" font-size="18" font-weight="bold" fill="#34a853" stroke="#fff" stroke-width="0.8" paint-order="stroke">l</text><text x="80.10000000000001" y="1012.5" font-family="Liberation Sans" font-size="18" font-weight="bold" fill="#ea4335" stroke="#fff" stroke-width="0.8" paint-order="stroke">e</text><rect x="26" y="620" width="43" height="26" fill="none" stroke="#000" stroke-width="2"/><path d="M25,648.5 L168,648.5 L184,619" fill="none" stroke="#555" stroke-width="1.5"/><circle cx="34.5" cy="628.5" r="4.8" fill="none" stroke="#8a8a8a" stroke-width="1.4"/><line x1="38.1" y1="632" x2="42.5" y2="636.5" stroke="#8a8a8a" stroke-width="2.8"/><line x1="32.0" y1="628.5" x2="37.0" y2="628.5" stroke="#8a8a8a" stroke-width="1.2"/><line x1="34.5" y1="626" x2="34.5" y2="631" stroke="#8a8a8a" stroke-width="1.2"/><circle cx="55.5" cy="628.5" r="4.8" fill="none" stroke="#8a8a8a" stroke-width="1.4"/><line x1="59.1" y1="632" x2="63.5" y2="636.5" stroke="#8a8a8a" stroke-width="2.8"/><line x1="53.0" y1="628.5" x2="58.0" y2="628.5" stroke="#8a8a8a" stroke-width="1.2"/><rect x="30" y="655" width="21" height="21" rx="1" fill="#e8f0fa" fill-opacity="0.9" stroke="#dfe6ee" stroke-width="0.8"/><path d="M35,665.5 L46,665.5 M40.5,660 L40.5,671" stroke="#8e949a" stroke-width="2"/><rect x="38" y="676" width="5" height="100" fill="#eef1f4" fill-opacity="0.85"/><rect x="30" y="734" width="21" height="12" rx="1" fill="#f4f6f8" stroke="#dde2e6" stroke-width="0.8"/><path d="M35,740 L46,740" stroke="#9aa0a6" stroke-width="2"/><rect x="30" y="777" width="21" height="22" rx="1" fill="#f4f6f8" stroke="#dde2e6" stroke-width="0.8"/><path d="M35,788.5 L46,788.5" stroke="#9aa0a6" stroke-width="2"/><defs><linearGradient id="gsel" x1="0" y1="0" x2="0" y2="1"><stop offset="0" stop-color="#5a6474"/><stop offset="1" stop-color="#b5c0cf"/></linearGradient><linearGradient id="gbtn" x1="0" y1="0" x2="0" y2="1"><stop offset="0" stop-color="#fbfcfe"/><stop offset="1" stop-color="#c9d5e4"/></linearGradient></defs><rect x="326" y="629" width="72.5" height="20" fill="url(#gsel)"/><rect x="398.5" y="629" width="73" height="20" fill="url(#gbtn)"/><rect x="471.5" y="629" width="73" height="20" fill="url(#gbtn)"/><line x1="471.5" y1="629" x2="471.5" y2="649" stroke="#555" stroke-width="1"/><line x1="544" y1="629" x2="544" y2="649" stroke="#555" stroke-width="1"/><text x="362" y="643" text-anchor="middle" font-family="Liberation Sans" font-size="12" fill="#2a5ea8">road</text><text x="435" y="643" text-anchor="middle" font-family="Liberation Sans" font-size="12" fill="#2a5ea8">satellite</text><text x="508" y="643" text-anchor="middle" font-family="Liberation Sans" font-size="12" fill="#2a5ea8">shaded</text><rect x="532" y="621" width="21" height="26" fill="#fff" stroke="#9fbad6" stroke-width="1"/><rect x="536" y="625" width="14" height="17" fill="#dde9f5" stroke="#9fbad6" stroke-width="1"/></g><rect x="557" y="808" width="6" height="20" fill="#e6eaee" stroke="#cdd3da" stroke-width="0.6"/><path d="M558.5,814.5 L562,818 L558.5,821.5 Z" fill="#000"/></svg>
<div style="position:absolute;left:566.5px;top:618.5px;width:259.5px;height:401.5px;box-sizing:border-box;border:1px solid #d6dde5;background:#fff;"></div>
<div style="position:absolute;left:567.5px;top:619.5px;width:257.5px;height:31.5px;background:#f0f2f4;border-bottom:1px solid #d6dde5;"></div>
<svg style="position:absolute;left:0;top:0" width="1809" height="1058"><path d="M574,637 L582,637 L582,629.5 Z" fill="#9aa0a6"/><path d="M797,635.5 L805.5,635.5 L801.25,641 Z" fill="#000"/><rect x="806" y="652.5" width="15" height="362" fill="#f0f0f0"/><rect x="806" y="669" width="15" height="303" fill="#c6c6c6"/><path d="M810,663 L813.5,659.5 L817,663" fill="none" stroke="#555" stroke-width="1.3"/><path d="M810,1005 L813.5,1008.5 L817,1005" fill="none" stroke="#555" stroke-width="1.3"/><rect x="572.5" y="676.5" width="12" height="12" fill="#fff" stroke="#333" stroke-width="1"/><path d="M574.5,682.5 L577.5,686 L583,678.5" fill="none" stroke="#333" stroke-width="1.1"/><rect x="587.5" y="677.5" width="8" height="8" fill="#f4f4f4" stroke="#999" stroke-width="0.8"/><line x1="589" y1="681.5" x2="594" y2="681.5" stroke="#777" stroke-width="1"/><rect x="572.5" y="871.5" width="12" height="12" fill="#fff" stroke="#333" stroke-width="1"/><path d="M574.5,877.5 L577.5,881 L583,873.5" fill="none" stroke="#333" stroke-width="1.1"/><rect x="587.5" y="872.5" width="8" height="8" fill="#f4f4f4" stroke="#999" stroke-width="0.8"/><line x1="589" y1="876.5" x2="594" y2="876.5" stroke="#777" stroke-width="1"/><defs><linearGradient id="gst" x1="0" y1="0" x2="0" y2="1"><stop offset="0" stop-color="#e8cfd5"/><stop offset="0.5" stop-color="#f8ecc8"/><stop offset="1" stop-color="#dbe9cf"/></linearGradient><linearGradient id="gco" x1="0" y1="0" x2="0" y2="1"><stop offset="0" stop-color="#406a8e"/><stop offset="1" stop-color="#cbdbe7"/></linearGradient></defs><rect x="589" y="695" width="15" height="150" fill="url(#gst)"/><rect x="589" y="890" width="15" height="125" fill="url(#gco)"/></svg>
<div class="t" style="left:589.5px;top:627px;font-size:14px;font-weight:bold;color:#222;">BI Data Layers</div>
<div class="t" style="left:757px;top:628px;font-size:14.5px;font-weight:bold;color:#222;">View</div>
<div class="t" style="left:572px;top:656px;font-size:13.4px;font-weight:bold;color:#111;">States</div>
<div class="t" style="left:597.5px;top:678px;font-size:10.7px;font-weight:normal;color:#222;">Individual Count (Color Fill)</div>
<div class="t" style="left:607.5px;top:695px;font-size:12px;font-weight:normal;color:#111;">277</div>
<div class="t" style="left:607.5px;top:738px;font-size:12px;font-weight:normal;color:#111;">185</div>
<div class="t" style="left:607.5px;top:788px;font-size:12px;font-weight:normal;color:#111;">93</div>
<div class="t" style="left:608px;top:830px;font-size:12px;font-weight:normal;color:#111;">1</div>
<div class="t" style="left:572px;top:852px;font-size:13.4px;font-weight:bold;color:#111;">Counties</div>
<div class="t" style="left:597.5px;top:873px;font-size:10.7px;font-weight:normal;color:#222;">Individual Count (Color Fill)</div>
<div class="t" style="left:607.5px;top:891px;font-size:12px;font-weight:normal;color:#111;">277</div>
<div class="t" style="left:607.5px;top:934px;font-size:12px;font-weight:normal;color:#111;">185</div>
<div class="t" style="left:607.5px;top:984px;font-size:12px;font-weight:normal;color:#111;">93</div>
<div style="position:absolute;left:0;top:0;width:1809px;height:1058px;box-sizing:border-box;border:3px solid #f68a1f;pointer-events:none"></div>
</body></html>
